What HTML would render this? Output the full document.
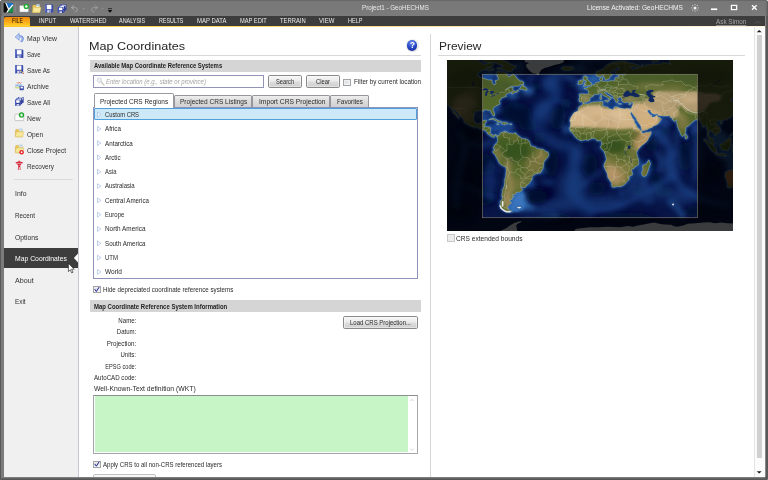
<!DOCTYPE html>
<html><head><meta charset="utf-8"><title>GeoHECHMS - Map Coordinates</title><style>
html,body{margin:0;padding:0;}
body{width:768px;height:480px;overflow:hidden;background:#ffffff;font-family:'Liberation Sans', sans-serif;position:relative;}
#w div{position:absolute;}
.t{position:absolute;white-space:pre;line-height:10px;height:10px;transform-origin:0 50%;}
</style></head>
<body>
<div id="w">
<div style="left:0.00px;top:0.00px;width:768.00px;height:480.00px;background:#585858;border-radius:3px 3px 2px 2px;"></div>
<div style="left:1.00px;top:10.00px;width:2.70px;height:468.10px;background:#7b7b7b;"></div>
<div style="left:764.30px;top:10.00px;width:1.30px;height:468.10px;background:#868686;"></div>
<div style="left:1.00px;top:0.00px;width:766.00px;height:15.80px;background:linear-gradient(#5e5e5e 0,#777777 1.2px,#7b7b7b 100%);border-radius:3px 3px 0 0;"></div>
<div style="left:0.00px;top:0.00px;width:768.00px;height:15.80px;background:linear-gradient(90deg,#565656 0,#6e6e6e 1.5px,rgba(122,122,122,0) 3.2px,rgba(122,122,122,0) 764.8px,#6e6e6e 766.5px,#565656 768px);border-radius:3px 3px 0 0;"></div>
<div style="left:3.50px;top:15.70px;width:761.10px;height:10.50px;background:#3d3d3d;"></div>
<div style="left:3.50px;top:25.80px;width:761.10px;height:1.40px;background:linear-gradient(90deg,#ffc62a 0,#ffd24a 120px,#fbe29a 420px,#fdf3d6 700px);"></div>
<div style="left:3.80px;top:16.50px;width:26.50px;height:9.90px;background:linear-gradient(#f08a08 0%,#f7a51a 45%,#ffc41f 85%,#ffd23a 100%);border-radius:1.6px 1.6px 0 0;"></div>
<div style="left:3.50px;top:27.20px;width:761.10px;height:449.80px;background:#ffffff;"></div>
<div style="left:3.50px;top:27.20px;width:74.50px;height:449.80px;background:#f0f0f0;"></div>
<div style="left:3.50px;top:248.00px;width:74.50px;height:19.80px;background:#3d3d3d;"></div>
<div style="left:77.60px;top:27.20px;width:1.00px;height:449.80px;background:#c6c6d6;"></div>
<div style="left:14.00px;top:179.30px;width:58.50px;height:0.70px;background:#dadada;"></div>
<div style="left:88.00px;top:55.10px;width:333.20px;height:0.80px;background:#d8d8d8;"></div>
<div style="left:438.00px;top:55.10px;width:306.50px;height:0.80px;background:#d8d8d8;"></div>
<div style="left:430.30px;top:34.00px;width:0.70px;height:443.00px;background:#d6d6d6;"></div>
<div style="left:90.00px;top:59.80px;width:331.20px;height:12.10px;background:#d5d5d5;"></div>
<div style="left:90.00px;top:300.10px;width:331.20px;height:12.20px;background:#d5d5d5;"></div>
<div style="left:92.90px;top:75.00px;width:171.60px;height:12.80px;border:0.7px solid #9394b8;background:#fff;box-sizing:border-box;"></div>
<div style="left:268.25px;top:75.40px;width:33.75px;height:12.20px;border:0.6px solid #8a8a8a;border-radius:1.8px;background:linear-gradient(#f6f6f6 0%,#ebebeb 45%,#dcdcdc 55%,#cecece 100%);box-shadow:inset 0 0 0 0.6px rgba(255,255,255,.8);box-sizing:border-box;"></div>
<div style="left:306.00px;top:75.40px;width:33.50px;height:12.20px;border:0.6px solid #8a8a8a;border-radius:1.8px;background:linear-gradient(#f6f6f6 0%,#ebebeb 45%,#dcdcdc 55%,#cecece 100%);box-shadow:inset 0 0 0 0.6px rgba(255,255,255,.8);box-sizing:border-box;"></div>
<div style="left:343.25px;top:316.00px;width:74.65px;height:12.80px;border:0.6px solid #8a8a8a;border-radius:1.8px;background:linear-gradient(#f6f6f6 0%,#ebebeb 45%,#dcdcdc 55%,#cecece 100%);box-shadow:inset 0 0 0 0.6px rgba(255,255,255,.8);box-sizing:border-box;"></div>
<div style="left:343.25px;top:78.50px;width:7.50px;height:7.20px;border:0.6px solid #a2a4a8;background:linear-gradient(135deg,#d6d8dc,#f6f6f6);box-shadow:inset 0 0 0 0.7px #f4f4f4;box-sizing:border-box;"></div>
<div style="left:93.25px;top:285.90px;width:7.40px;height:7.20px;border:0.6px solid #a2a4a8;background:linear-gradient(135deg,#d6d8dc,#f6f6f6);box-shadow:inset 0 0 0 0.7px #f4f4f4;box-sizing:border-box;"></div>
<div style="left:93.25px;top:460.60px;width:7.40px;height:7.20px;border:0.6px solid #a2a4a8;background:linear-gradient(135deg,#d6d8dc,#f6f6f6);box-shadow:inset 0 0 0 0.7px #f4f4f4;box-sizing:border-box;"></div>
<div style="left:447.25px;top:233.90px;width:7.75px;height:7.70px;border:0.6px solid #c9c9c9;background:#ececec;box-sizing:border-box;"></div>
<div style="left:174.20px;top:95.00px;width:78.20px;height:12.70px;border:0.6px solid #94969c;border-bottom:none;border-radius:1.6px 1.6px 0 0;background:linear-gradient(#eeeeee,#dadada 50%,#cfcfcf);box-sizing:border-box;"></div>
<div style="left:252.20px;top:95.00px;width:78.30px;height:12.70px;border:0.6px solid #94969c;border-bottom:none;border-radius:1.6px 1.6px 0 0;background:linear-gradient(#eeeeee,#dadada 50%,#cfcfcf);box-sizing:border-box;"></div>
<div style="left:330.30px;top:95.00px;width:38.80px;height:12.70px;border:0.6px solid #94969c;border-bottom:none;border-radius:1.6px 1.6px 0 0;background:linear-gradient(#eeeeee,#dadada 50%,#cfcfcf);box-sizing:border-box;"></div>
<div style="left:93.30px;top:107.40px;width:324.30px;height:171.80px;border:0.7px solid #8f91b6;background:#fff;box-sizing:border-box;"></div>
<div style="left:94.10px;top:93.10px;width:80.20px;height:15.10px;border:0.6px solid #989aa0;border-bottom:none;border-radius:1.8px 1.8px 0 0;background:#fff;box-sizing:border-box;"></div>
<div style="left:94.00px;top:107.90px;width:322.90px;height:12.50px;border:0.7px solid #4fa0dc;border-radius:1px;background:#cde8f7;box-sizing:border-box;"></div>
<div style="left:93.25px;top:394.70px;width:324.35px;height:59.20px;border:0.7px solid #a6a7aa;border-top-color:#8c8d90;background:#fff;box-sizing:border-box;"></div>
<div style="left:94.90px;top:396.30px;width:312.70px;height:56.10px;background:#c7f5c6;"></div>
<div style="left:93.25px;top:473.70px;width:62.55px;height:8.30px;border:0.6px solid #c2c2c2;border-radius:2px;background:#f7f7f7;box-sizing:border-box;"></div>
<div style="left:406.00px;top:39.35px;width:12.50px;height:12.50px;border-radius:50%;background:radial-gradient(circle at 50% 40%,#ffffff 0,#e6e6e6 70%,#b9b9b9 100%);"></div>
<div style="left:407.05px;top:40.40px;width:10.40px;height:10.40px;border-radius:50%;background:radial-gradient(circle at 45% 25%,#6d8cf0 0,#2f4fc8 45%,#0d1f96 100%);"></div>
<div style="left:754.30px;top:27.20px;width:10.30px;height:449.80px;background:#fbfbfb;border-left:0.6px solid #e6e6e6;box-sizing:border-box;"></div>
<div style="left:757.25px;top:34.50px;width:4.50px;height:423.50px;background:#d0d0d0;"></div>
<div style="left:0.00px;top:477.00px;width:768.00px;height:3.00px;background:linear-gradient(#8a8a8a 0,#6a6a6a 1.2px,#575757 2px,#575757 100%);border-radius:0 0 2px 2px;"></div>
<div style="left:0.00px;top:477.00px;width:1.00px;height:3.00px;background:#585858;border-radius:0 0 0 2px;"></div>
<div style="left:765.40px;top:477.00px;width:2.60px;height:3.00px;background:#585858;border-radius:0 0 2px 0;"></div>
</div>
<svg style="position:absolute;left:446.6px;top:59.75px" width="286.3" height="171.5" viewBox="0 0 286.3 171.5"><defs><filter id="b1" x="-20%" y="-20%" width="140%" height="140%"><feGaussianBlur stdDeviation="1.1"/></filter><filter id="b2" x="-30%" y="-30%" width="160%" height="160%"><feGaussianBlur stdDeviation="2.4"/></filter><filter id="b3" x="-40%" y="-40%" width="180%" height="180%"><feGaussianBlur stdDeviation="4"/></filter><filter id="b0" x="-10%" y="-10%" width="120%" height="120%"><feGaussianBlur stdDeviation="0.45"/></filter><clipPath id="landclip"><path d="M180.0 2.1 L176.4 1.2 L173.7 1.2 L170.5 1.8 L166.9 2.5 L163.9 3.5 L160.9 4.6 L158.5 6.7 L156.7 8.5 L155.0 9.9 L152.6 10.6 L149.6 11.8 L149.0 13.2 L149.2 15.0 L149.8 16.0 L151.4 16.8 L153.2 16.6 L154.7 15.6 L155.7 14.9 L156.4 15.6 L156.5 16.4 L157.2 17.3 L158.1 18.7 L158.4 19.8 L160.0 19.9 L160.4 19.1 L162.1 18.9 L162.8 17.4 L163.1 16.2 L164.5 15.4 L165.6 14.4 L163.7 13.6 L163.5 12.0 L165.1 10.8 L167.5 9.9 L168.7 8.7 L169.5 7.6 L171.7 7.5 L173.2 8.5 L172.3 9.3 L169.9 10.6 L168.4 11.7 L168.6 13.2 L169.5 14.1 L170.5 14.5 L172.9 14.2 L175.8 13.8 L177.6 14.3 L179.1 14.5 L176.7 14.9 L174.0 14.9 L172.3 15.1 L171.1 15.5 L171.2 16.2 L172.1 16.4 L172.0 17.6 L171.2 18.0 L170.0 17.1 L168.8 17.4 L168.1 18.2 L168.1 19.8 L166.9 20.5 L166.4 21.1 L165.2 21.0 L164.9 20.6 L162.7 21.0 L160.1 21.7 L159.1 21.1 L157.7 21.2 L156.2 21.6 L155.9 21.2 L155.0 21.0 L154.8 20.1 L155.6 19.8 L155.2 18.9 L156.0 18.7 L155.3 18.1 L155.7 17.1 L154.4 17.7 L152.9 18.0 L152.7 19.2 L152.8 19.9 L153.4 20.6 L153.6 21.6 L153.2 22.0 L151.4 22.0 L150.2 22.3 L148.8 22.7 L148.2 23.8 L147.2 24.7 L146.0 25.0 L144.9 25.2 L144.8 26.1 L143.3 26.8 L141.6 27.0 L141.5 26.7 L140.8 26.7 L141.1 27.9 L139.7 28.0 L137.5 28.0 L137.4 28.7 L139.5 29.2 L140.4 29.7 L141.6 31.0 L141.7 31.7 L141.5 32.9 L141.0 34.2 L138.5 34.1 L136.1 33.9 L133.5 33.8 L132.1 34.5 L132.5 35.6 L132.7 37.0 L132.4 38.2 L131.8 39.7 L132.5 40.1 L132.5 40.7 L132.3 41.8 L133.6 41.8 L134.4 41.6 L135.4 42.2 L136.4 43.0 L137.8 42.2 L140.4 42.0 L141.1 41.3 L142.2 41.1 L142.9 39.8 L142.7 38.8 L143.9 37.3 L144.2 36.9 L145.7 36.6 L146.8 35.5 L146.7 34.5 L147.8 34.1 L149.5 34.3 L150.9 34.4 L152.0 33.7 L153.6 33.0 L155.1 33.5 L155.6 34.7 L156.4 35.4 L157.6 36.1 L159.3 36.7 L160.1 37.3 L160.9 38.0 L161.8 38.2 L162.2 39.4 L161.8 40.6 L162.7 40.1 L163.4 39.4 L162.7 38.6 L163.3 37.6 L164.6 38.3 L165.1 38.0 L164.3 37.4 L162.8 36.8 L162.0 36.0 L160.7 35.7 L159.3 34.1 L157.8 33.2 L157.7 31.9 L159.1 31.4 L159.3 32.3 L160.1 31.9 L161.0 33.1 L162.6 34.1 L164.0 34.8 L165.1 35.4 L166.2 36.1 L166.2 37.8 L166.9 38.6 L168.2 40.1 L168.4 41.0 L168.9 42.0 L169.8 42.4 L170.6 42.4 L170.3 41.3 L171.5 41.0 L171.8 40.6 L170.7 39.8 L170.2 38.8 L170.2 37.8 L171.3 38.2 L172.0 37.4 L173.5 37.2 L174.2 37.5 L174.4 38.1 L174.9 37.8 L174.3 38.8 L175.0 39.8 L174.4 40.4 L175.5 41.0 L175.6 41.8 L176.7 42.2 L177.9 42.6 L179.3 42.6 L179.7 41.9 L181.2 42.4 L182.2 43.0 L183.4 42.8 L184.4 42.0 L185.5 42.3 L186.2 42.2 L185.9 43.1 L185.9 44.5 L185.4 45.5 L184.9 46.4 L184.7 47.4 L184.2 48.4 L183.8 48.6 L182.6 48.8 L181.6 48.7 L181.8 50.1 L182.0 50.7 L182.6 51.9 L183.8 52.8 L184.3 51.9 L184.7 50.7 L184.8 52.4 L185.5 53.4 L186.6 54.9 L187.4 56.3 L188.5 57.3 L189.6 59.1 L189.8 60.4 L191.0 61.8 L191.9 63.2 L193.1 65.0 L194.0 66.5 L194.2 68.1 L194.7 70.0 L194.9 70.7 L196.7 70.6 L198.7 69.9 L201.1 69.2 L201.6 68.6 L203.3 67.9 L205.3 67.2 L205.4 66.5 L207.4 65.6 L209.0 64.9 L210.2 64.4 L211.0 63.4 L212.0 63.2 L211.9 61.8 L212.9 61.6 L214.4 59.2 L213.1 57.8 L211.3 57.4 L210.4 56.6 L210.2 54.7 L210.0 54.9 L209.7 55.4 L208.9 55.9 L207.9 56.8 L206.3 57.2 L204.8 57.3 L204.6 56.6 L204.6 55.0 L204.1 54.8 L203.6 55.6 L203.5 56.2 L202.9 55.6 L202.8 54.3 L202.1 53.5 L201.2 52.8 L200.8 51.7 L200.2 50.9 L200.4 50.3 L201.1 50.0 L202.3 49.9 L202.9 50.1 L203.6 51.3 L204.3 52.6 L205.7 53.4 L206.9 54.1 L208.2 54.3 L209.4 53.8 L210.3 53.6 L211.1 54.2 L211.5 55.3 L213.2 55.5 L215.2 55.7 L216.5 56.0 L218.7 55.9 L220.2 55.9 L222.2 55.5 L223.2 56.5 L223.6 57.5 L224.5 57.8 L225.6 58.7 L226.9 58.5 L225.3 59.2 L227.0 61.1 L227.8 61.1 L229.0 60.6 L229.6 59.4 L229.9 60.5 L229.8 61.7 L229.9 63.2 L230.4 65.3 L230.8 67.1 L231.7 68.8 L232.4 70.7 L233.3 72.4 L233.9 74.1 L234.5 75.4 L235.5 76.2 L236.3 75.4 L237.4 74.8 L238.2 73.6 L238.2 71.8 L238.8 70.1 L238.6 68.6 L238.6 67.6 L239.4 67.1 L240.3 66.5 L241.2 66.0 L242.5 64.8 L244.2 63.2 L245.1 62.3 L246.6 61.5 L246.8 60.3 L248.0 60.0 L249.4 59.8 L251.0 59.1 L252.5 59.3 L253.0 60.9 L253.7 61.9 L254.7 62.9 L255.6 64.2 L255.8 65.9 L255.5 66.8 L256.8 67.1 L257.9 66.3 L258.7 65.6 L259.5 66.3 L259.7 68.0 L260.1 69.6 L260.7 71.2 L260.8 73.0 L260.3 74.9 L260.3 76.3 L261.1 77.2 L262.3 78.2 L262.8 79.6 L263.2 81.0 L263.9 82.4 L264.9 83.2 L266.4 84.2 L267.2 84.2 L267.3 83.0 L266.4 81.9 L266.4 80.7 L265.9 79.3 L264.9 78.5 L263.8 77.7 L262.9 77.2 L262.4 75.7 L261.5 74.8 L261.5 73.4 L262.2 71.8 L262.3 70.0 L263.4 69.9 L263.5 70.7 L265.1 71.3 L265.8 72.2 L266.6 73.2 L268.0 73.5 L268.0 75.5 L268.6 75.4 L270.1 74.4 L270.7 73.5 L272.1 72.8 L273.3 71.8 L273.4 70.4 L273.1 68.6 L272.6 67.3 L272.1 66.6 L271.0 65.7 L270.1 64.7 L269.2 63.4 L269.4 62.3 L270.3 61.2 L271.6 60.4 L272.6 60.0 L273.8 60.3 L274.1 61.6 L274.7 61.6 L274.7 60.5 L276.0 60.1 L277.6 59.8 L278.5 59.3 L279.5 59.2 L280.8 58.7 L282.1 58.1 L283.6 57.3 L284.6 56.3 L285.6 55.4 L285.9 54.3 L286.8 53.4 L288.0 51.9 L288.6 49.2 L288.4 48.2 L287.3 46.8 L286.5 45.4 L285.2 44.4 L285.6 43.6 L286.5 42.9 L288.6 42.0 L288.6 41.1 L287.1 40.9 L285.6 41.6 L284.9 41.1 L283.8 40.3 L283.4 39.4 L284.5 39.2 L285.5 38.5 L286.8 37.6 L288.6 37.3 L288.6 -2.3 L223.0 -2.3 L222.6 1.3 L222.4 3.1 L224.7 4.4 L221.8 3.9 L220.0 3.3 L215.8 2.9 L214.6 4.0 L211.0 4.2 L208.0 4.5 L206.9 3.8 L202.7 4.8 L198.5 5.1 L198.5 6.2 L195.9 6.7 L195.3 5.8 L195.8 4.4 L194.7 4.2 L195.3 6.9 L193.1 6.8 L191.3 7.5 L190.7 8.8 L188.4 8.7 L187.2 9.8 L184.8 9.3 L184.2 7.9 L182.4 6.6 L181.8 6.0 L184.2 6.6 L189.0 7.1 L191.3 6.8 L192.2 6.1 L191.3 5.1 L188.4 4.4 L184.8 3.5 L182.4 3.1 L180.0 2.7 Z M136.0 43.2 L136.7 43.1 L137.7 43.9 L139.5 43.8 L140.6 44.1 L142.3 43.4 L144.2 42.5 L146.6 42.0 L149.0 42.0 L152.0 41.8 L154.7 41.4 L156.2 41.8 L155.6 42.5 L155.7 43.5 L156.2 44.2 L155.1 45.0 L155.9 45.6 L156.7 46.3 L158.8 46.7 L161.2 47.3 L161.5 48.4 L163.9 49.1 L165.7 49.8 L166.9 48.9 L166.9 47.5 L168.7 46.7 L170.5 47.0 L172.9 48.2 L175.2 48.6 L177.6 49.1 L178.8 48.6 L180.0 48.4 L181.6 48.7 L181.8 50.1 L181.9 50.6 L183.0 52.5 L183.6 54.3 L184.8 56.7 L185.6 58.5 L187.0 59.7 L187.4 60.9 L187.4 62.5 L189.0 64.4 L190.2 67.3 L191.9 68.6 L193.7 70.4 L194.7 71.0 L194.7 72.1 L195.5 73.4 L196.7 73.4 L199.1 72.5 L201.5 72.4 L204.1 71.7 L204.0 73.4 L203.6 74.6 L202.7 76.3 L201.5 78.1 L200.3 80.5 L198.5 82.5 L197.1 83.5 L195.5 84.7 L193.7 86.3 L192.5 87.9 L191.1 89.0 L190.7 90.0 L190.4 90.8 L189.8 91.8 L189.3 93.4 L189.9 94.0 L190.2 95.4 L190.3 97.2 L191.2 98.4 L191.5 100.2 L191.5 102.5 L191.7 103.7 L190.7 105.2 L189.6 106.1 L187.2 107.2 L187.0 108.3 L185.4 109.1 L184.5 109.5 L184.4 110.6 L185.1 112.1 L185.4 114.2 L185.3 114.9 L183.0 115.9 L181.9 116.7 L182.3 117.8 L181.9 119.8 L181.0 120.4 L180.0 121.5 L179.1 122.8 L177.6 124.3 L176.4 125.2 L174.6 126.1 L173.6 126.4 L171.1 126.5 L169.3 126.6 L166.9 127.3 L165.5 126.7 L165.0 126.7 L164.9 125.2 L164.5 124.6 L164.9 123.4 L163.7 121.6 L162.7 119.9 L161.6 118.6 L160.9 117.2 L160.7 115.6 L160.3 113.3 L159.1 110.9 L157.9 108.5 L157.1 106.5 L157.1 104.9 L157.7 103.1 L159.0 100.8 L159.5 99.0 L158.8 96.6 L158.3 94.2 L157.7 93.0 L157.3 91.8 L156.4 90.6 L155.0 89.2 L154.1 88.0 L153.5 86.7 L154.4 85.5 L154.5 84.4 L154.7 83.1 L154.6 81.8 L154.4 81.1 L153.2 80.4 L151.4 80.6 L150.2 80.7 L149.0 79.1 L148.2 78.4 L147.1 78.2 L145.4 78.4 L144.5 78.6 L143.0 79.2 L141.0 80.2 L139.5 79.8 L138.3 79.6 L135.9 80.2 L134.1 80.6 L132.3 79.9 L130.1 78.4 L128.7 77.2 L127.3 75.7 L126.7 74.6 L125.5 73.0 L125.0 72.5 L123.9 71.6 L123.1 71.1 L123.0 69.8 L122.8 68.8 L122.2 68.4 L123.3 66.8 L123.6 64.4 L123.7 62.6 L122.8 60.9 L123.3 59.1 L123.9 57.6 L125.4 55.5 L125.7 54.7 L127.0 53.1 L127.6 52.6 L129.9 51.6 L131.1 50.7 L131.5 49.5 L131.3 48.4 L132.1 47.0 L132.9 46.2 L134.0 45.9 L134.9 45.3 L135.5 44.2 Z M201.8 100.2 L202.9 102.5 L203.3 104.3 L202.4 105.5 L202.0 107.3 L200.9 110.9 L199.8 113.9 L199.1 115.6 L197.0 116.4 L195.5 115.6 L194.9 113.9 L194.7 112.1 L195.9 110.3 L195.9 108.5 L195.5 106.7 L196.1 105.2 L198.3 104.7 L200.1 103.5 L200.6 101.9 Z M50.8 75.6 L51.4 76.3 L52.4 74.8 L53.0 73.4 L53.8 72.6 L55.9 72.3 L57.1 71.3 L58.0 71.1 L58.0 72.2 L57.4 72.8 L57.7 73.0 L59.3 72.2 L59.5 71.3 L60.0 72.2 L61.6 72.8 L61.9 73.4 L64.3 73.2 L65.5 73.8 L66.7 73.2 L69.1 73.1 L68.1 73.5 L69.2 74.1 L70.3 74.8 L70.9 75.7 L71.7 76.1 L73.2 77.3 L74.8 78.7 L76.8 78.8 L78.6 79.0 L80.4 79.8 L81.4 80.6 L82.2 81.3 L82.8 83.5 L83.4 84.7 L83.4 85.9 L85.2 86.2 L85.8 86.7 L87.0 86.7 L88.8 87.5 L90.2 88.8 L91.7 88.7 L93.5 89.3 L95.3 89.2 L97.1 90.3 L98.5 91.5 L100.1 91.9 L101.0 92.4 L101.5 94.3 L101.4 95.5 L100.7 97.2 L99.5 98.4 L98.5 99.6 L97.1 101.4 L96.5 103.5 L96.5 105.5 L96.1 107.3 L95.6 109.2 L95.0 110.0 L94.1 111.8 L93.0 113.1 L91.5 113.3 L89.7 113.6 L87.8 114.5 L86.0 115.6 L85.1 116.7 L85.1 118.0 L84.9 119.8 L83.7 120.8 L83.0 122.2 L82.0 123.4 L80.9 124.2 L79.3 126.0 L78.6 127.0 L77.4 127.4 L76.0 127.4 L74.1 126.8 L73.4 126.5 L73.4 127.1 L74.8 128.1 L74.7 129.1 L75.4 129.8 L74.3 131.1 L72.6 132.0 L70.3 132.3 L69.0 132.2 L68.8 134.1 L66.9 134.8 L65.5 134.5 L65.4 135.9 L67.2 136.7 L65.5 137.3 L65.1 139.2 L63.3 139.8 L62.5 140.7 L63.7 141.8 L64.5 142.9 L62.5 144.6 L61.3 145.7 L60.6 147.2 L61.4 148.2 L61.2 148.6 L62.2 149.9 L63.7 150.8 L65.3 151.0 L63.7 151.5 L61.3 151.8 L59.5 151.7 L57.7 150.8 L55.9 149.6 L54.2 148.4 L53.2 146.0 L53.0 143.6 L54.2 142.4 L53.0 141.5 L54.8 140.1 L55.4 138.3 L55.9 136.5 L54.8 136.5 L55.0 135.3 L55.2 133.5 L55.6 131.7 L55.2 130.2 L55.9 129.3 L56.5 127.9 L57.5 125.8 L57.6 123.4 L57.9 121.6 L57.7 119.8 L58.6 117.4 L58.9 115.0 L59.0 113.9 L59.3 111.5 L59.3 109.7 L59.2 107.8 L57.9 106.7 L56.2 105.8 L54.2 104.7 L52.6 103.4 L52.0 102.4 L51.1 100.3 L50.0 98.3 L49.1 96.6 L48.2 94.9 L47.6 93.7 L46.2 93.0 L46.0 91.5 L47.0 90.2 L47.6 89.7 L47.8 88.8 L46.5 88.6 L46.6 87.1 L47.5 85.9 L47.6 84.9 L48.9 84.3 L49.0 83.7 L49.6 82.9 L50.6 82.7 L50.9 81.3 L50.6 80.2 L50.8 79.1 L50.6 77.9 L50.1 77.3 L49.7 76.0 L48.2 75.2 L47.6 76.0 L47.1 77.2 L45.6 76.9 L44.1 76.2 L43.2 75.6 L41.8 74.2 L40.8 74.0 L40.7 72.6 L38.7 71.0 L38.4 70.3 L35.7 69.7 L32.9 68.6 L30.3 66.6 L27.9 67.2 L23.9 65.9 L21.1 64.4 L18.6 63.1 L16.9 61.6 L17.2 60.3 L16.1 58.2 L14.8 57.3 L12.5 55.4 L11.2 53.1 L8.8 50.7 L6.1 48.0 L6.2 50.1 L8.2 52.5 L10.0 54.9 L11.5 57.0 L11.9 58.6 L11.2 57.9 L9.4 56.3 L9.1 54.9 L7.0 53.5 L5.8 52.5 L6.4 51.3 L4.9 49.7 L3.8 48.0 L3.3 47.2 L2.0 45.4 L-0.1 44.8 L-2.5 44.2 L-2.5 -2.3 L29.7 -2.3 L29.7 0.4 L33.3 1.9 L35.7 3.9 L38.7 4.6 L41.0 3.0 L44.6 3.0 L45.8 4.3 L45.8 6.1 L43.4 7.0 L40.4 6.9 L39.2 8.1 L38.1 9.6 L34.8 10.2 L33.3 11.2 L31.5 12.6 L29.9 14.4 L30.3 15.8 L32.1 16.2 L32.7 17.9 L35.7 18.0 L38.7 19.2 L41.6 20.0 L44.9 20.1 L44.9 21.6 L45.2 23.3 L46.8 24.8 L48.2 24.7 L49.0 23.7 L48.8 22.2 L48.2 20.7 L50.0 20.4 L51.7 18.8 L51.2 17.4 L50.0 16.0 L50.6 14.4 L49.6 13.2 L50.2 11.4 L53.0 11.7 L55.9 11.8 L57.7 12.9 L60.1 13.5 L59.8 15.2 L61.3 16.6 L63.1 16.2 L64.9 15.0 L66.0 14.1 L67.3 15.2 L69.1 16.8 L69.7 18.3 L72.1 20.0 L73.2 21.2 L74.7 21.0 L76.5 22.2 L76.6 23.3 L75.3 24.5 L73.2 24.8 L71.5 26.0 L67.9 26.0 L63.8 26.1 L63.1 26.9 L60.1 28.5 L58.1 30.1 L59.5 29.5 L61.9 28.0 L64.3 27.3 L66.4 27.7 L65.5 28.7 L65.7 29.7 L66.1 30.7 L67.9 31.3 L69.7 31.1 L70.9 29.9 L71.5 31.1 L70.3 31.9 L67.3 32.8 L65.5 33.9 L64.2 33.7 L66.1 31.4 L64.3 32.0 L63.1 32.5 L60.7 33.5 L58.9 34.2 L58.7 35.3 L59.5 36.2 L58.3 36.4 L57.1 37.0 L54.8 37.6 L53.3 40.0 L52.0 40.6 L52.4 41.9 L53.0 43.8 L51.8 44.5 L50.1 45.4 L48.9 45.7 L47.8 46.8 L46.5 47.8 L45.9 48.9 L46.0 50.1 L46.9 52.0 L47.5 53.7 L47.5 54.9 L47.1 55.9 L46.4 56.0 L46.0 55.3 L45.2 54.3 L44.3 52.8 L44.0 51.2 L42.8 50.0 L41.3 50.5 L39.8 49.7 L38.1 49.8 L36.1 49.9 L36.4 51.2 L35.1 51.1 L33.3 50.6 L31.1 50.5 L29.7 51.1 L27.9 52.0 L26.8 53.1 L27.1 55.0 L26.5 57.3 L26.4 59.3 L27.1 61.1 L28.3 62.9 L28.7 63.5 L30.3 64.2 L32.3 63.8 L33.9 63.8 L34.8 62.3 L35.2 60.9 L36.9 60.5 L38.7 60.3 L39.5 60.6 L38.7 62.6 L37.9 63.8 L37.7 65.6 L37.0 66.9 L37.3 67.1 L38.4 66.9 L40.4 66.9 L42.2 67.1 L43.8 68.0 L43.5 68.8 L43.1 71.0 L43.3 72.9 L44.0 74.0 L45.0 74.9 L46.2 75.4 L48.1 74.4 Z M72.3 29.2 L73.2 28.1 L73.8 26.9 L75.0 25.4 L76.7 24.5 L76.5 25.7 L75.6 26.6 L76.8 26.6 L78.6 27.0 L79.2 28.0 L80.2 29.2 L79.6 30.4 L78.6 29.9 L77.4 30.0 L76.2 29.3 L74.4 29.2 Z M41.8 59.8 L44.0 58.6 L46.4 58.4 L48.8 59.2 L51.2 60.6 L53.0 61.2 L54.5 61.8 L53.0 62.2 L50.5 62.2 L50.8 61.3 L49.4 60.9 L47.0 59.8 L45.2 59.3 L43.4 59.5 Z M54.3 63.8 L55.6 62.2 L57.5 62.3 L59.6 62.5 L61.4 63.7 L60.0 64.1 L58.3 64.3 L57.5 64.8 L56.2 64.2 Z M49.6 64.0 L51.2 63.8 L52.1 64.4 L50.9 64.7 Z M62.9 63.8 L64.8 64.0 L64.7 64.4 L62.9 64.4 Z M136.2 26.2 L138.9 26.0 L141.2 25.5 L144.7 24.9 L143.9 24.5 L145.1 23.2 L143.4 22.7 L143.2 22.0 L141.6 20.8 L141.1 19.8 L140.5 19.2 L139.5 19.2 L140.5 17.9 L140.9 17.3 L138.9 17.1 L138.3 17.3 L139.3 16.1 L137.1 16.1 L136.1 17.4 L136.4 18.6 L136.5 19.8 L137.3 19.7 L137.1 20.6 L138.9 20.5 L139.3 21.7 L139.5 22.3 L137.7 22.4 L138.0 23.0 L138.1 23.6 L136.8 24.1 L138.0 24.4 L139.5 24.7 L139.2 24.9 L137.9 25.0 Z M131.1 24.4 L133.1 24.3 L135.5 23.7 L135.8 22.4 L136.4 20.8 L135.6 20.1 L134.1 20.0 L132.9 20.8 L131.1 21.3 L132.1 22.5 L130.7 23.7 Z M114.4 7.9 L116.8 6.8 L121.6 7.0 L125.1 7.0 L126.8 8.5 L125.1 9.3 L121.0 10.4 L116.2 9.8 L116.8 9.1 L114.4 8.7 Z M157.8 40.6 L158.9 40.4 L161.6 40.3 L161.0 42.2 L157.9 41.1 Z M152.8 37.0 L154.5 37.0 L154.6 39.2 L153.1 39.4 Z M153.3 35.1 L154.4 34.7 L154.2 36.4 L153.4 36.1 Z M171.1 43.5 L174.4 43.8 L174.3 44.2 L171.2 43.9 Z M181.6 44.2 L182.4 43.7 L184.3 43.4 L183.5 44.2 L182.4 44.7 Z M238.2 74.3 L238.7 74.2 L240.0 75.7 L240.6 77.5 L239.7 78.6 L238.6 78.7 L238.2 76.9 Z M272.7 63.0 L274.8 62.0 L274.8 63.5 L273.7 64.2 Z M256.7 79.2 L259.3 79.7 L260.8 81.3 L262.7 82.9 L264.1 83.5 L266.3 85.3 L266.9 87.1 L267.7 88.1 L269.5 89.4 L269.2 92.8 L267.7 92.7 L265.1 90.6 L263.5 88.8 L262.7 86.8 L261.1 85.3 L260.8 83.8 L259.0 82.1 L257.6 80.7 Z M268.5 94.0 L269.6 92.9 L272.5 93.6 L275.2 93.5 L277.5 94.1 L279.6 95.0 L279.5 96.1 L275.4 95.8 L272.5 95.2 L270.0 94.7 Z M273.1 84.1 L274.6 83.8 L275.8 82.9 L277.8 82.1 L279.0 80.4 L280.8 79.3 L282.4 77.5 L283.8 78.7 L285.0 79.7 L283.8 80.7 L283.4 82.3 L283.8 83.5 L285.0 84.7 L283.2 85.3 L283.2 87.1 L282.0 88.3 L281.6 90.0 L279.7 90.6 L277.8 89.7 L276.4 89.9 L274.5 89.3 L274.3 87.7 L273.3 86.5 L273.1 85.3 Z M285.6 92.4 L285.7 90.0 L284.9 89.1 L285.3 87.7 L285.9 85.9 L286.2 85.0 L288.6 85.0 L288.6 92.4 Z M282.8 75.9 L285.6 73.4 L285.8 73.7 L283.2 76.1 Z M288.6 107.3 L286.2 109.6 L284.5 110.0 L282.6 110.5 L281.4 110.8 L279.7 111.8 L278.5 112.8 L278.4 115.0 L278.1 116.8 L279.3 118.6 L279.7 120.2 L280.3 122.2 L281.1 124.0 L280.2 125.9 L280.3 126.7 L282.0 127.6 L283.8 127.6 L286.2 126.2 L288.6 126.2 Z M70.0 147.6 L72.1 147.0 L74.1 147.3 L72.9 148.2 L70.9 148.0 Z M47.6 -2.3 L51.2 -0.6 L54.8 0.6 L59.5 1.8 L61.9 3.0 L63.7 4.6 L69.1 6.3 L67.3 8.5 L64.9 8.9 L65.5 10.6 L63.7 11.4 L61.9 11.7 L59.5 11.1 L57.1 10.1 L54.2 9.1 L50.6 9.2 L50.0 7.9 L54.8 7.9 L55.4 6.7 L56.2 5.1 L52.4 4.5 L49.4 2.7 L45.2 2.5 L41.6 2.3 L36.9 1.9 L35.7 0.1 L35.7 -2.3 Z M39.2 9.6 L41.6 7.5 L44.0 8.2 L47.0 9.6 L45.2 10.2 L41.6 10.6 Z M204.5 0.4 L206.3 1.5 L209.8 1.8 L211.6 0.7 L209.8 -1.1 L212.2 -2.3 L205.1 -2.3 Z"/></clipPath><clipPath id="mapclip"><rect width="286.3" height="171.5"/></clipPath></defs><g clip-path="url(#mapclip)"><rect width="286.3" height="171.5" fill="#081547"/><g filter="url(#b3)"><ellipse cx="69.1" cy="52.5" rx="15.5" ry="10.7" fill="#03072f" opacity="0.95"/><ellipse cx="81.0" cy="64.4" rx="9.5" ry="7.1" fill="#03072f" opacity="0.95"/><ellipse cx="110.8" cy="58.5" rx="8.4" ry="11.9" fill="#03072f" opacity="0.95"/><ellipse cx="119.2" cy="43.0" rx="6.0" ry="6.0" fill="#03072f" opacity="0.95"/><ellipse cx="103.7" cy="102.5" rx="8.4" ry="15.5" fill="#03072f" opacity="0.95"/><ellipse cx="92.9" cy="77.5" rx="7.2" ry="6.0" fill="#03072f" opacity="0.95"/><ellipse cx="90.5" cy="135.9" rx="13.1" ry="8.3" fill="#03072f" opacity="0.95"/><ellipse cx="143.0" cy="104.9" rx="8.4" ry="13.1" fill="#03072f" opacity="0.95"/><ellipse cx="150.2" cy="128.7" rx="9.5" ry="7.1" fill="#03072f" opacity="0.95"/><ellipse cx="133.5" cy="84.7" rx="6.0" ry="4.8" fill="#03072f" opacity="0.95"/><ellipse cx="205.1" cy="84.7" rx="6.0" ry="8.3" fill="#03072f" opacity="0.95"/><ellipse cx="205.1" cy="104.9" rx="4.8" ry="7.1" fill="#03072f" opacity="0.95"/><ellipse cx="209.8" cy="120.4" rx="7.2" ry="7.1" fill="#03072f" opacity="0.95"/><ellipse cx="238.5" cy="96.6" rx="8.4" ry="15.5" fill="#03072f" opacity="0.95"/><ellipse cx="217.0" cy="132.3" rx="10.7" ry="6.0" fill="#03072f" opacity="0.95"/><ellipse cx="218.2" cy="70.4" rx="6.0" ry="6.0" fill="#03072f" opacity="0.95"/><ellipse cx="190.7" cy="129.9" rx="6.0" ry="7.1" fill="#03072f" opacity="0.95"/><ellipse cx="248.0" cy="76.3" rx="4.8" ry="8.3" fill="#03072f" opacity="0.95"/><ellipse cx="262.3" cy="112.1" rx="10.7" ry="10.7" fill="#03072f" opacity="0.95"/><ellipse cx="40.4" cy="104.9" rx="8.4" ry="11.9" fill="#03072f" opacity="0.95"/><ellipse cx="38.1" cy="135.9" rx="9.5" ry="10.7" fill="#03072f" opacity="0.95"/><ellipse cx="23.7" cy="74.0" rx="11.9" ry="9.5" fill="#03072f" opacity="0.95"/><ellipse cx="17.8" cy="115.6" rx="14.3" ry="16.7" fill="#03072f" opacity="0.95"/><ellipse cx="178.8" cy="157.3" rx="35.8" ry="4.8" fill="#03072f" opacity="0.95"/><ellipse cx="107.2" cy="157.3" rx="23.9" ry="4.8" fill="#03072f" opacity="0.95"/><ellipse cx="89.3" cy="26.3" rx="7.2" ry="4.8" fill="#03072f" opacity="0.95"/><ellipse cx="125.1" cy="26.3" rx="6.0" ry="4.8" fill="#03072f" opacity="0.95"/><ellipse cx="11.8" cy="151.4" rx="17.9" ry="9.5" fill="#03072f" opacity="0.95"/><ellipse cx="256.4" cy="151.4" rx="23.9" ry="6.0" fill="#03072f" opacity="0.95"/></g><g filter="url(#b2)" opacity="0.6"><path d="M113.2 12.0 L104.9 19.2 L101.3 23.9 L107.2 28.7 L109.6 34.7 L107.2 39.4 L100.1 45.4 L92.9 50.1 L89.3 56.1 L88.2 62.0 L89.3 68.0 L94.1 74.0 L101.3 78.7 L107.2 83.5 L113.2 85.3 L121.6 86.5 L127.5 89.4 L127.5 97.8 L126.3 107.3 L128.1 115.6 L126.3 124.0 L125.1 131.1 L128.7 137.1 L135.9 145.4 L143.0 150.2" fill="none" stroke="#1a4288" stroke-width="13" stroke-linecap="round" stroke-linejoin="round" opacity="0.55"/><path d="M113.2 12.0 L104.9 19.2 L101.3 23.9 L107.2 28.7 L109.6 34.7 L107.2 39.4 L100.1 45.4 L92.9 50.1 L89.3 56.1 L88.2 62.0 L89.3 68.0 L94.1 74.0 L101.3 78.7 L107.2 83.5 L113.2 85.3 L121.6 86.5 L127.5 89.4 L127.5 97.8 L126.3 107.3 L128.1 115.6 L126.3 124.0 L125.1 131.1 L128.7 137.1 L135.9 145.4 L143.0 150.2" fill="none" stroke="#2252a0" stroke-width="4.5" stroke-linecap="round" stroke-linejoin="round" opacity="0.5"/><path d="M128.7 129.9 L137.1 124.0 L146.6 116.8 L153.8 110.9" fill="none" stroke="#1f4c94" stroke-width="3.5" stroke-linecap="round" stroke-linejoin="round" opacity="0.8"/><path d="M97.7 121.6 L104.9 122.8" fill="none" stroke="#1f4c94" stroke-width="5" stroke-linecap="round" stroke-linejoin="round" opacity="0.7"/><path d="M211.0 74.0 L217.0 79.9 L223.0 85.9 L224.1 93.0 L221.8 103.7 L226.5 115.6" fill="none" stroke="#2050a0" stroke-width="5" stroke-linecap="round" stroke-linejoin="round" opacity="0.8"/><path d="M226.5 115.6 L217.0 121.6 L208.6 127.6 L196.7 133.5 L181.2 141.8 L160.9 149.0 L143.0 150.2" fill="none" stroke="#1f4c98" stroke-width="5.5" stroke-linecap="round" stroke-linejoin="round" opacity="0.8"/><path d="M226.5 115.6 L236.1 129.9 L248.0 135.9 L262.3 141.8 L280.2 145.4" fill="none" stroke="#1f4c98" stroke-width="6" stroke-linecap="round" stroke-linejoin="round" opacity="0.8"/><path d="M250.4 78.7 L249.2 97.8 L248.0 121.6" fill="none" stroke="#1d4890" stroke-width="3" stroke-linecap="round" stroke-linejoin="round" opacity="0.8"/><path d="M230.1 71.6 L230.1 85.9 L228.9 95.4" fill="none" stroke="#2a60a8" stroke-width="3" stroke-linecap="round" stroke-linejoin="round" opacity="0.8"/><path d="M208.6 91.8 L214.6 100.2 L213.4 107.3 L209.8 110.9" fill="none" stroke="#2a60a8" stroke-width="3.5" stroke-linecap="round" stroke-linejoin="round" opacity="0.8"/><path d="M197.9 118.0 L196.7 126.4" fill="none" stroke="#2558a0" stroke-width="4" stroke-linecap="round" stroke-linejoin="round" opacity="0.8"/><path d="M184.8 118.0 L183.6 127.6" fill="none" stroke="#2050a0" stroke-width="3" stroke-linecap="round" stroke-linejoin="round" opacity="0.7"/><path d="M174.0 131.1 L175.2 135.9" fill="none" stroke="#2050a0" stroke-width="4" stroke-linecap="round" stroke-linejoin="round" opacity="0.7"/><path d="M224.1 141.8 L231.3 149.0 L236.1 156.1" fill="none" stroke="#2e68b0" stroke-width="6" stroke-linecap="round" stroke-linejoin="round" opacity="0.9"/><path d="M196.7 140.7 L205.1 140.7" fill="none" stroke="#2558a0" stroke-width="3.5" stroke-linecap="round" stroke-linejoin="round" opacity="0.8"/><path d="M71.5 150.2 L85.8 150.2 L97.7 151.4 L109.6 153.8 L110.8 157.3 L95.3 158.5 L77.4 158.5" fill="none" stroke="#2456a0" stroke-width="3.5" stroke-linecap="round" stroke-linejoin="round" opacity="0.8"/><path d="M11.8 121.6 L23.7 128.7 L35.7 133.5 L47.6 138.3" fill="none" stroke="#1d4890" stroke-width="4" stroke-linecap="round" stroke-linejoin="round" opacity="0.7"/><path d="M41.6 100.2 L47.6 106.1 L52.4 110.9" fill="none" stroke="#1d4890" stroke-width="3" stroke-linecap="round" stroke-linejoin="round" opacity="0.7"/><path d="M11.8 74.0 L19.0 85.9 L14.2 103.7 L9.4 121.6 L9.4 145.4" fill="none" stroke="#1d4890" stroke-width="7" stroke-linecap="round" stroke-linejoin="round" opacity="0.7"/><path d="M23.7 83.5 L33.3 85.9 L41.6 83.5 L47.6 79.9" fill="none" stroke="#2252a0" stroke-width="4" stroke-linecap="round" stroke-linejoin="round" opacity="0.8"/><path d="M65.5 44.2 L73.8 47.8" fill="none" stroke="#153a80" stroke-width="3" stroke-linecap="round" stroke-linejoin="round" opacity="0.6"/><path d="M85.8 16.8 L81.0 21.6 L85.8 28.7" fill="none" stroke="#1d4a90" stroke-width="5" stroke-linecap="round" stroke-linejoin="round" opacity="0.6"/><path d="M119.2 16.8 L126.3 19.2 L128.7 23.9" fill="none" stroke="#2a5ea8" stroke-width="6" stroke-linecap="round" stroke-linejoin="round" opacity="0.7"/><path d="M131.1 9.6 L139.5 12.0 L146.6 9.6" fill="none" stroke="#2456a0" stroke-width="5" stroke-linecap="round" stroke-linejoin="round" opacity="0.7"/><path d="M107.2 39.4 L114.4 41.8 L121.6 44.2" fill="none" stroke="#2050a0" stroke-width="4" stroke-linecap="round" stroke-linejoin="round" opacity="0.7"/><path d="M119.2 52.5 L113.2 66.8" fill="none" stroke="#1d4c94" stroke-width="3" stroke-linecap="round" stroke-linejoin="round" opacity="0.6"/><path d="M149.0 87.1 L152.6 89.4" fill="none" stroke="#1d4c94" stroke-width="3" stroke-linecap="round" stroke-linejoin="round" opacity="0.6"/></g><g filter="url(#b3)" opacity="0.55"><ellipse cx="126.3" cy="125.2" rx="14.3" ry="16.7" fill="#1b4488" opacity="1"/><ellipse cx="131.1" cy="95.4" rx="7.2" ry="11.9" fill="#1b4488" opacity="1"/><ellipse cx="97.7" cy="52.5" rx="9.5" ry="11.9" fill="#1b4488" opacity="1"/><ellipse cx="103.7" cy="23.9" rx="9.5" ry="8.3" fill="#1b4488" opacity="1"/><ellipse cx="200.3" cy="131.1" rx="26.2" ry="8.3" fill="#1b4488" opacity="1"/><ellipse cx="224.1" cy="104.9" rx="10.7" ry="16.7" fill="#1b4488" opacity="1"/><ellipse cx="232.5" cy="135.9" rx="19.1" ry="8.3" fill="#1b4488" opacity="1"/><ellipse cx="214.6" cy="76.3" rx="9.5" ry="9.5" fill="#1b4488" opacity="1"/><ellipse cx="250.4" cy="91.8" rx="4.8" ry="26.2" fill="#1b4488" opacity="1"/><ellipse cx="107.2" cy="145.4" rx="26.2" ry="7.1" fill="#1b4488" opacity="1"/><ellipse cx="155.0" cy="143.0" rx="23.9" ry="7.1" fill="#1b4488" opacity="1"/><ellipse cx="190.7" cy="115.6" rx="9.5" ry="9.5" fill="#1b4488" opacity="1"/></g><g filter="url(#b2)"><ellipse cx="53.6" cy="68.0" rx="14.3" ry="6.0" fill="#1d4e98" opacity="0.9"/><ellipse cx="35.7" cy="56.1" rx="8.4" ry="4.8" fill="#1c4a92" opacity="0.9"/><ellipse cx="73.8" cy="140.7" rx="8.4" ry="9.5" fill="#3672ba" opacity="0.9"/><ellipse cx="71.5" cy="133.5" rx="4.8" ry="4.8" fill="#3470b6" opacity="0.9"/><ellipse cx="81.0" cy="146.6" rx="7.2" ry="3.0" fill="#2f68b0" opacity="0.9"/><ellipse cx="146.6" cy="19.2" rx="7.2" ry="6.0" fill="#2e68b0" opacity="0.9"/><ellipse cx="135.9" cy="27.5" rx="6.0" ry="3.6" fill="#2c64ac" opacity="0.9"/><ellipse cx="81.0" cy="31.1" rx="6.0" ry="3.6" fill="#2f66ae" opacity="0.9"/><ellipse cx="164.5" cy="44.2" rx="16.7" ry="4.2" fill="#1b4488" opacity="0.9"/><ellipse cx="149.0" cy="39.4" rx="6.0" ry="3.6" fill="#1b4488" opacity="0.9"/><ellipse cx="188.4" cy="62.0" rx="3.6" ry="9.5" fill="#2558a0" opacity="0.9"/><ellipse cx="205.1" cy="53.7" rx="4.8" ry="3.0" fill="#2e66ae" opacity="0.9"/><ellipse cx="217.0" cy="62.0" rx="7.2" ry="6.0" fill="#143a84" opacity="0.9"/><ellipse cx="249.2" cy="68.0" rx="6.0" ry="7.1" fill="#143a84" opacity="0.9"/><ellipse cx="271.9" cy="79.9" rx="9.5" ry="9.5" fill="#2e66ae" opacity="0.9"/><ellipse cx="280.2" cy="95.4" rx="9.5" ry="4.8" fill="#2a60a8" opacity="0.9"/><ellipse cx="286.2" cy="104.9" rx="7.2" ry="6.0" fill="#2a60a8" opacity="0.9"/><ellipse cx="41.6" cy="14.4" rx="8.4" ry="6.0" fill="#20509a" opacity="0.9"/><ellipse cx="71.5" cy="7.3" rx="7.2" ry="7.1" fill="#1a4088" opacity="0.9"/><ellipse cx="190.7" cy="0.1" rx="29.8" ry="3.6" fill="#1f4c94" opacity="0.9"/><ellipse cx="143.0" cy="0.1" rx="17.9" ry="3.6" fill="#143a80" opacity="0.9"/><ellipse cx="166.9" cy="16.8" rx="4.8" ry="4.8" fill="#1d4a90" opacity="0.9"/><ellipse cx="83.4" cy="124.0" rx="4.8" ry="4.8" fill="#1b4690" opacity="0.9"/><ellipse cx="95.3" cy="110.9" rx="3.6" ry="3.6" fill="#1b4690" opacity="0.9"/><ellipse cx="200.3" cy="109.7" rx="3.6" ry="7.1" fill="#1d4c94" opacity="0.9"/><ellipse cx="193.1" cy="107.3" rx="3.0" ry="8.3" fill="#20509a" opacity="0.9"/><ellipse cx="208.6" cy="71.6" rx="4.8" ry="2.4" fill="#1d4c94" opacity="0.9"/><ellipse cx="119.2" cy="69.2" rx="3.6" ry="4.8" fill="#1d4c94" opacity="0.9"/><ellipse cx="65.5" cy="35.8" rx="6.0" ry="3.0" fill="#2a60a8" opacity="0.9"/><ellipse cx="50.0" cy="48.9" rx="3.0" ry="4.8" fill="#2a60a8" opacity="0.9"/><ellipse cx="131.1" cy="8.5" rx="9.5" ry="3.6" fill="#1d4c94" opacity="0.9"/></g><path d="M60.7 132.3 L70.3 131.1 L75.6 132.3 L77.4 135.9 L76.2 140.7 L78.0 144.2 L76.8 149.0 L70.3 152.1 L63.1 152.6 L59.5 149.0 L59.5 139.5 Z" fill="#3a76be" filter="url(#b1)" opacity="0.95"/><g filter="url(#b2)"><ellipse cx="90.5" cy="137.1" rx="10.7" ry="7.1" fill="#03072f" opacity="0.95"/><ellipse cx="100.1" cy="133.5" rx="7.2" ry="6.0" fill="#03072f" opacity="0.8"/><ellipse cx="42.8" cy="121.6" rx="6.0" ry="19.1" fill="#143a80" opacity="0.5"/></g><path d="M180.0 2.1 L176.4 1.2 L173.7 1.2 L170.5 1.8 L166.9 2.5 L163.9 3.5 L160.9 4.6 L158.5 6.7 L156.7 8.5 L155.0 9.9 L152.6 10.6 L149.6 11.8 L149.0 13.2 L149.2 15.0 L149.8 16.0 L151.4 16.8 L153.2 16.6 L154.7 15.6 L155.7 14.9 L156.4 15.6 L156.5 16.4 L157.2 17.3 L158.1 18.7 L158.4 19.8 L160.0 19.9 L160.4 19.1 L162.1 18.9 L162.8 17.4 L163.1 16.2 L164.5 15.4 L165.6 14.4 L163.7 13.6 L163.5 12.0 L165.1 10.8 L167.5 9.9 L168.7 8.7 L169.5 7.6 L171.7 7.5 L173.2 8.5 L172.3 9.3 L169.9 10.6 L168.4 11.7 L168.6 13.2 L169.5 14.1 L170.5 14.5 L172.9 14.2 L175.8 13.8 L177.6 14.3 L179.1 14.5 L176.7 14.9 L174.0 14.9 L172.3 15.1 L171.1 15.5 L171.2 16.2 L172.1 16.4 L172.0 17.6 L171.2 18.0 L170.0 17.1 L168.8 17.4 L168.1 18.2 L168.1 19.8 L166.9 20.5 L166.4 21.1 L165.2 21.0 L164.9 20.6 L162.7 21.0 L160.1 21.7 L159.1 21.1 L157.7 21.2 L156.2 21.6 L155.9 21.2 L155.0 21.0 L154.8 20.1 L155.6 19.8 L155.2 18.9 L156.0 18.7 L155.3 18.1 L155.7 17.1 L154.4 17.7 L152.9 18.0 L152.7 19.2 L152.8 19.9 L153.4 20.6 L153.6 21.6 L153.2 22.0 L151.4 22.0 L150.2 22.3 L148.8 22.7 L148.2 23.8 L147.2 24.7 L146.0 25.0 L144.9 25.2 L144.8 26.1 L143.3 26.8 L141.6 27.0 L141.5 26.7 L140.8 26.7 L141.1 27.9 L139.7 28.0 L137.5 28.0 L137.4 28.7 L139.5 29.2 L140.4 29.7 L141.6 31.0 L141.7 31.7 L141.5 32.9 L141.0 34.2 L138.5 34.1 L136.1 33.9 L133.5 33.8 L132.1 34.5 L132.5 35.6 L132.7 37.0 L132.4 38.2 L131.8 39.7 L132.5 40.1 L132.5 40.7 L132.3 41.8 L133.6 41.8 L134.4 41.6 L135.4 42.2 L136.4 43.0 L137.8 42.2 L140.4 42.0 L141.1 41.3 L142.2 41.1 L142.9 39.8 L142.7 38.8 L143.9 37.3 L144.2 36.9 L145.7 36.6 L146.8 35.5 L146.7 34.5 L147.8 34.1 L149.5 34.3 L150.9 34.4 L152.0 33.7 L153.6 33.0 L155.1 33.5 L155.6 34.7 L156.4 35.4 L157.6 36.1 L159.3 36.7 L160.1 37.3 L160.9 38.0 L161.8 38.2 L162.2 39.4 L161.8 40.6 L162.7 40.1 L163.4 39.4 L162.7 38.6 L163.3 37.6 L164.6 38.3 L165.1 38.0 L164.3 37.4 L162.8 36.8 L162.0 36.0 L160.7 35.7 L159.3 34.1 L157.8 33.2 L157.7 31.9 L159.1 31.4 L159.3 32.3 L160.1 31.9 L161.0 33.1 L162.6 34.1 L164.0 34.8 L165.1 35.4 L166.2 36.1 L166.2 37.8 L166.9 38.6 L168.2 40.1 L168.4 41.0 L168.9 42.0 L169.8 42.4 L170.6 42.4 L170.3 41.3 L171.5 41.0 L171.8 40.6 L170.7 39.8 L170.2 38.8 L170.2 37.8 L171.3 38.2 L172.0 37.4 L173.5 37.2 L174.2 37.5 L174.4 38.1 L174.9 37.8 L174.3 38.8 L175.0 39.8 L174.4 40.4 L175.5 41.0 L175.6 41.8 L176.7 42.2 L177.9 42.6 L179.3 42.6 L179.7 41.9 L181.2 42.4 L182.2 43.0 L183.4 42.8 L184.4 42.0 L185.5 42.3 L186.2 42.2 L185.9 43.1 L185.9 44.5 L185.4 45.5 L184.9 46.4 L184.7 47.4 L184.2 48.4 L183.8 48.6 L182.6 48.8 L181.6 48.7 L181.8 50.1 L182.0 50.7 L182.6 51.9 L183.8 52.8 L184.3 51.9 L184.7 50.7 L184.8 52.4 L185.5 53.4 L186.6 54.9 L187.4 56.3 L188.5 57.3 L189.6 59.1 L189.8 60.4 L191.0 61.8 L191.9 63.2 L193.1 65.0 L194.0 66.5 L194.2 68.1 L194.7 70.0 L194.9 70.7 L196.7 70.6 L198.7 69.9 L201.1 69.2 L201.6 68.6 L203.3 67.9 L205.3 67.2 L205.4 66.5 L207.4 65.6 L209.0 64.9 L210.2 64.4 L211.0 63.4 L212.0 63.2 L211.9 61.8 L212.9 61.6 L214.4 59.2 L213.1 57.8 L211.3 57.4 L210.4 56.6 L210.2 54.7 L210.0 54.9 L209.7 55.4 L208.9 55.9 L207.9 56.8 L206.3 57.2 L204.8 57.3 L204.6 56.6 L204.6 55.0 L204.1 54.8 L203.6 55.6 L203.5 56.2 L202.9 55.6 L202.8 54.3 L202.1 53.5 L201.2 52.8 L200.8 51.7 L200.2 50.9 L200.4 50.3 L201.1 50.0 L202.3 49.9 L202.9 50.1 L203.6 51.3 L204.3 52.6 L205.7 53.4 L206.9 54.1 L208.2 54.3 L209.4 53.8 L210.3 53.6 L211.1 54.2 L211.5 55.3 L213.2 55.5 L215.2 55.7 L216.5 56.0 L218.7 55.9 L220.2 55.9 L222.2 55.5 L223.2 56.5 L223.6 57.5 L224.5 57.8 L225.6 58.7 L226.9 58.5 L225.3 59.2 L227.0 61.1 L227.8 61.1 L229.0 60.6 L229.6 59.4 L229.9 60.5 L229.8 61.7 L229.9 63.2 L230.4 65.3 L230.8 67.1 L231.7 68.8 L232.4 70.7 L233.3 72.4 L233.9 74.1 L234.5 75.4 L235.5 76.2 L236.3 75.4 L237.4 74.8 L238.2 73.6 L238.2 71.8 L238.8 70.1 L238.6 68.6 L238.6 67.6 L239.4 67.1 L240.3 66.5 L241.2 66.0 L242.5 64.8 L244.2 63.2 L245.1 62.3 L246.6 61.5 L246.8 60.3 L248.0 60.0 L249.4 59.8 L251.0 59.1 L252.5 59.3 L253.0 60.9 L253.7 61.9 L254.7 62.9 L255.6 64.2 L255.8 65.9 L255.5 66.8 L256.8 67.1 L257.9 66.3 L258.7 65.6 L259.5 66.3 L259.7 68.0 L260.1 69.6 L260.7 71.2 L260.8 73.0 L260.3 74.9 L260.3 76.3 L261.1 77.2 L262.3 78.2 L262.8 79.6 L263.2 81.0 L263.9 82.4 L264.9 83.2 L266.4 84.2 L267.2 84.2 L267.3 83.0 L266.4 81.9 L266.4 80.7 L265.9 79.3 L264.9 78.5 L263.8 77.7 L262.9 77.2 L262.4 75.7 L261.5 74.8 L261.5 73.4 L262.2 71.8 L262.3 70.0 L263.4 69.9 L263.5 70.7 L265.1 71.3 L265.8 72.2 L266.6 73.2 L268.0 73.5 L268.0 75.5 L268.6 75.4 L270.1 74.4 L270.7 73.5 L272.1 72.8 L273.3 71.8 L273.4 70.4 L273.1 68.6 L272.6 67.3 L272.1 66.6 L271.0 65.7 L270.1 64.7 L269.2 63.4 L269.4 62.3 L270.3 61.2 L271.6 60.4 L272.6 60.0 L273.8 60.3 L274.1 61.6 L274.7 61.6 L274.7 60.5 L276.0 60.1 L277.6 59.8 L278.5 59.3 L279.5 59.2 L280.8 58.7 L282.1 58.1 L283.6 57.3 L284.6 56.3 L285.6 55.4 L285.9 54.3 L286.8 53.4 L288.0 51.9 L288.6 49.2 L288.4 48.2 L287.3 46.8 L286.5 45.4 L285.2 44.4 L285.6 43.6 L286.5 42.9 L288.6 42.0 L288.6 41.1 L287.1 40.9 L285.6 41.6 L284.9 41.1 L283.8 40.3 L283.4 39.4 L284.5 39.2 L285.5 38.5 L286.8 37.6 L288.6 37.3 L288.6 -2.3 L223.0 -2.3 L222.6 1.3 L222.4 3.1 L224.7 4.4 L221.8 3.9 L220.0 3.3 L215.8 2.9 L214.6 4.0 L211.0 4.2 L208.0 4.5 L206.9 3.8 L202.7 4.8 L198.5 5.1 L198.5 6.2 L195.9 6.7 L195.3 5.8 L195.8 4.4 L194.7 4.2 L195.3 6.9 L193.1 6.8 L191.3 7.5 L190.7 8.8 L188.4 8.7 L187.2 9.8 L184.8 9.3 L184.2 7.9 L182.4 6.6 L181.8 6.0 L184.2 6.6 L189.0 7.1 L191.3 6.8 L192.2 6.1 L191.3 5.1 L188.4 4.4 L184.8 3.5 L182.4 3.1 L180.0 2.7 Z M136.0 43.2 L136.7 43.1 L137.7 43.9 L139.5 43.8 L140.6 44.1 L142.3 43.4 L144.2 42.5 L146.6 42.0 L149.0 42.0 L152.0 41.8 L154.7 41.4 L156.2 41.8 L155.6 42.5 L155.7 43.5 L156.2 44.2 L155.1 45.0 L155.9 45.6 L156.7 46.3 L158.8 46.7 L161.2 47.3 L161.5 48.4 L163.9 49.1 L165.7 49.8 L166.9 48.9 L166.9 47.5 L168.7 46.7 L170.5 47.0 L172.9 48.2 L175.2 48.6 L177.6 49.1 L178.8 48.6 L180.0 48.4 L181.6 48.7 L181.8 50.1 L181.9 50.6 L183.0 52.5 L183.6 54.3 L184.8 56.7 L185.6 58.5 L187.0 59.7 L187.4 60.9 L187.4 62.5 L189.0 64.4 L190.2 67.3 L191.9 68.6 L193.7 70.4 L194.7 71.0 L194.7 72.1 L195.5 73.4 L196.7 73.4 L199.1 72.5 L201.5 72.4 L204.1 71.7 L204.0 73.4 L203.6 74.6 L202.7 76.3 L201.5 78.1 L200.3 80.5 L198.5 82.5 L197.1 83.5 L195.5 84.7 L193.7 86.3 L192.5 87.9 L191.1 89.0 L190.7 90.0 L190.4 90.8 L189.8 91.8 L189.3 93.4 L189.9 94.0 L190.2 95.4 L190.3 97.2 L191.2 98.4 L191.5 100.2 L191.5 102.5 L191.7 103.7 L190.7 105.2 L189.6 106.1 L187.2 107.2 L187.0 108.3 L185.4 109.1 L184.5 109.5 L184.4 110.6 L185.1 112.1 L185.4 114.2 L185.3 114.9 L183.0 115.9 L181.9 116.7 L182.3 117.8 L181.9 119.8 L181.0 120.4 L180.0 121.5 L179.1 122.8 L177.6 124.3 L176.4 125.2 L174.6 126.1 L173.6 126.4 L171.1 126.5 L169.3 126.6 L166.9 127.3 L165.5 126.7 L165.0 126.7 L164.9 125.2 L164.5 124.6 L164.9 123.4 L163.7 121.6 L162.7 119.9 L161.6 118.6 L160.9 117.2 L160.7 115.6 L160.3 113.3 L159.1 110.9 L157.9 108.5 L157.1 106.5 L157.1 104.9 L157.7 103.1 L159.0 100.8 L159.5 99.0 L158.8 96.6 L158.3 94.2 L157.7 93.0 L157.3 91.8 L156.4 90.6 L155.0 89.2 L154.1 88.0 L153.5 86.7 L154.4 85.5 L154.5 84.4 L154.7 83.1 L154.6 81.8 L154.4 81.1 L153.2 80.4 L151.4 80.6 L150.2 80.7 L149.0 79.1 L148.2 78.4 L147.1 78.2 L145.4 78.4 L144.5 78.6 L143.0 79.2 L141.0 80.2 L139.5 79.8 L138.3 79.6 L135.9 80.2 L134.1 80.6 L132.3 79.9 L130.1 78.4 L128.7 77.2 L127.3 75.7 L126.7 74.6 L125.5 73.0 L125.0 72.5 L123.9 71.6 L123.1 71.1 L123.0 69.8 L122.8 68.8 L122.2 68.4 L123.3 66.8 L123.6 64.4 L123.7 62.6 L122.8 60.9 L123.3 59.1 L123.9 57.6 L125.4 55.5 L125.7 54.7 L127.0 53.1 L127.6 52.6 L129.9 51.6 L131.1 50.7 L131.5 49.5 L131.3 48.4 L132.1 47.0 L132.9 46.2 L134.0 45.9 L134.9 45.3 L135.5 44.2 Z M201.8 100.2 L202.9 102.5 L203.3 104.3 L202.4 105.5 L202.0 107.3 L200.9 110.9 L199.8 113.9 L199.1 115.6 L197.0 116.4 L195.5 115.6 L194.9 113.9 L194.7 112.1 L195.9 110.3 L195.9 108.5 L195.5 106.7 L196.1 105.2 L198.3 104.7 L200.1 103.5 L200.6 101.9 Z M50.8 75.6 L51.4 76.3 L52.4 74.8 L53.0 73.4 L53.8 72.6 L55.9 72.3 L57.1 71.3 L58.0 71.1 L58.0 72.2 L57.4 72.8 L57.7 73.0 L59.3 72.2 L59.5 71.3 L60.0 72.2 L61.6 72.8 L61.9 73.4 L64.3 73.2 L65.5 73.8 L66.7 73.2 L69.1 73.1 L68.1 73.5 L69.2 74.1 L70.3 74.8 L70.9 75.7 L71.7 76.1 L73.2 77.3 L74.8 78.7 L76.8 78.8 L78.6 79.0 L80.4 79.8 L81.4 80.6 L82.2 81.3 L82.8 83.5 L83.4 84.7 L83.4 85.9 L85.2 86.2 L85.8 86.7 L87.0 86.7 L88.8 87.5 L90.2 88.8 L91.7 88.7 L93.5 89.3 L95.3 89.2 L97.1 90.3 L98.5 91.5 L100.1 91.9 L101.0 92.4 L101.5 94.3 L101.4 95.5 L100.7 97.2 L99.5 98.4 L98.5 99.6 L97.1 101.4 L96.5 103.5 L96.5 105.5 L96.1 107.3 L95.6 109.2 L95.0 110.0 L94.1 111.8 L93.0 113.1 L91.5 113.3 L89.7 113.6 L87.8 114.5 L86.0 115.6 L85.1 116.7 L85.1 118.0 L84.9 119.8 L83.7 120.8 L83.0 122.2 L82.0 123.4 L80.9 124.2 L79.3 126.0 L78.6 127.0 L77.4 127.4 L76.0 127.4 L74.1 126.8 L73.4 126.5 L73.4 127.1 L74.8 128.1 L74.7 129.1 L75.4 129.8 L74.3 131.1 L72.6 132.0 L70.3 132.3 L69.0 132.2 L68.8 134.1 L66.9 134.8 L65.5 134.5 L65.4 135.9 L67.2 136.7 L65.5 137.3 L65.1 139.2 L63.3 139.8 L62.5 140.7 L63.7 141.8 L64.5 142.9 L62.5 144.6 L61.3 145.7 L60.6 147.2 L61.4 148.2 L61.2 148.6 L62.2 149.9 L63.7 150.8 L65.3 151.0 L63.7 151.5 L61.3 151.8 L59.5 151.7 L57.7 150.8 L55.9 149.6 L54.2 148.4 L53.2 146.0 L53.0 143.6 L54.2 142.4 L53.0 141.5 L54.8 140.1 L55.4 138.3 L55.9 136.5 L54.8 136.5 L55.0 135.3 L55.2 133.5 L55.6 131.7 L55.2 130.2 L55.9 129.3 L56.5 127.9 L57.5 125.8 L57.6 123.4 L57.9 121.6 L57.7 119.8 L58.6 117.4 L58.9 115.0 L59.0 113.9 L59.3 111.5 L59.3 109.7 L59.2 107.8 L57.9 106.7 L56.2 105.8 L54.2 104.7 L52.6 103.4 L52.0 102.4 L51.1 100.3 L50.0 98.3 L49.1 96.6 L48.2 94.9 L47.6 93.7 L46.2 93.0 L46.0 91.5 L47.0 90.2 L47.6 89.7 L47.8 88.8 L46.5 88.6 L46.6 87.1 L47.5 85.9 L47.6 84.9 L48.9 84.3 L49.0 83.7 L49.6 82.9 L50.6 82.7 L50.9 81.3 L50.6 80.2 L50.8 79.1 L50.6 77.9 L50.1 77.3 L49.7 76.0 L48.2 75.2 L47.6 76.0 L47.1 77.2 L45.6 76.9 L44.1 76.2 L43.2 75.6 L41.8 74.2 L40.8 74.0 L40.7 72.6 L38.7 71.0 L38.4 70.3 L35.7 69.7 L32.9 68.6 L30.3 66.6 L27.9 67.2 L23.9 65.9 L21.1 64.4 L18.6 63.1 L16.9 61.6 L17.2 60.3 L16.1 58.2 L14.8 57.3 L12.5 55.4 L11.2 53.1 L8.8 50.7 L6.1 48.0 L6.2 50.1 L8.2 52.5 L10.0 54.9 L11.5 57.0 L11.9 58.6 L11.2 57.9 L9.4 56.3 L9.1 54.9 L7.0 53.5 L5.8 52.5 L6.4 51.3 L4.9 49.7 L3.8 48.0 L3.3 47.2 L2.0 45.4 L-0.1 44.8 L-2.5 44.2 L-2.5 -2.3 L29.7 -2.3 L29.7 0.4 L33.3 1.9 L35.7 3.9 L38.7 4.6 L41.0 3.0 L44.6 3.0 L45.8 4.3 L45.8 6.1 L43.4 7.0 L40.4 6.9 L39.2 8.1 L38.1 9.6 L34.8 10.2 L33.3 11.2 L31.5 12.6 L29.9 14.4 L30.3 15.8 L32.1 16.2 L32.7 17.9 L35.7 18.0 L38.7 19.2 L41.6 20.0 L44.9 20.1 L44.9 21.6 L45.2 23.3 L46.8 24.8 L48.2 24.7 L49.0 23.7 L48.8 22.2 L48.2 20.7 L50.0 20.4 L51.7 18.8 L51.2 17.4 L50.0 16.0 L50.6 14.4 L49.6 13.2 L50.2 11.4 L53.0 11.7 L55.9 11.8 L57.7 12.9 L60.1 13.5 L59.8 15.2 L61.3 16.6 L63.1 16.2 L64.9 15.0 L66.0 14.1 L67.3 15.2 L69.1 16.8 L69.7 18.3 L72.1 20.0 L73.2 21.2 L74.7 21.0 L76.5 22.2 L76.6 23.3 L75.3 24.5 L73.2 24.8 L71.5 26.0 L67.9 26.0 L63.8 26.1 L63.1 26.9 L60.1 28.5 L58.1 30.1 L59.5 29.5 L61.9 28.0 L64.3 27.3 L66.4 27.7 L65.5 28.7 L65.7 29.7 L66.1 30.7 L67.9 31.3 L69.7 31.1 L70.9 29.9 L71.5 31.1 L70.3 31.9 L67.3 32.8 L65.5 33.9 L64.2 33.7 L66.1 31.4 L64.3 32.0 L63.1 32.5 L60.7 33.5 L58.9 34.2 L58.7 35.3 L59.5 36.2 L58.3 36.4 L57.1 37.0 L54.8 37.6 L53.3 40.0 L52.0 40.6 L52.4 41.9 L53.0 43.8 L51.8 44.5 L50.1 45.4 L48.9 45.7 L47.8 46.8 L46.5 47.8 L45.9 48.9 L46.0 50.1 L46.9 52.0 L47.5 53.7 L47.5 54.9 L47.1 55.9 L46.4 56.0 L46.0 55.3 L45.2 54.3 L44.3 52.8 L44.0 51.2 L42.8 50.0 L41.3 50.5 L39.8 49.7 L38.1 49.8 L36.1 49.9 L36.4 51.2 L35.1 51.1 L33.3 50.6 L31.1 50.5 L29.7 51.1 L27.9 52.0 L26.8 53.1 L27.1 55.0 L26.5 57.3 L26.4 59.3 L27.1 61.1 L28.3 62.9 L28.7 63.5 L30.3 64.2 L32.3 63.8 L33.9 63.8 L34.8 62.3 L35.2 60.9 L36.9 60.5 L38.7 60.3 L39.5 60.6 L38.7 62.6 L37.9 63.8 L37.7 65.6 L37.0 66.9 L37.3 67.1 L38.4 66.9 L40.4 66.9 L42.2 67.1 L43.8 68.0 L43.5 68.8 L43.1 71.0 L43.3 72.9 L44.0 74.0 L45.0 74.9 L46.2 75.4 L48.1 74.4 Z M72.3 29.2 L73.2 28.1 L73.8 26.9 L75.0 25.4 L76.7 24.5 L76.5 25.7 L75.6 26.6 L76.8 26.6 L78.6 27.0 L79.2 28.0 L80.2 29.2 L79.6 30.4 L78.6 29.9 L77.4 30.0 L76.2 29.3 L74.4 29.2 Z M41.8 59.8 L44.0 58.6 L46.4 58.4 L48.8 59.2 L51.2 60.6 L53.0 61.2 L54.5 61.8 L53.0 62.2 L50.5 62.2 L50.8 61.3 L49.4 60.9 L47.0 59.8 L45.2 59.3 L43.4 59.5 Z M54.3 63.8 L55.6 62.2 L57.5 62.3 L59.6 62.5 L61.4 63.7 L60.0 64.1 L58.3 64.3 L57.5 64.8 L56.2 64.2 Z M49.6 64.0 L51.2 63.8 L52.1 64.4 L50.9 64.7 Z M62.9 63.8 L64.8 64.0 L64.7 64.4 L62.9 64.4 Z M136.2 26.2 L138.9 26.0 L141.2 25.5 L144.7 24.9 L143.9 24.5 L145.1 23.2 L143.4 22.7 L143.2 22.0 L141.6 20.8 L141.1 19.8 L140.5 19.2 L139.5 19.2 L140.5 17.9 L140.9 17.3 L138.9 17.1 L138.3 17.3 L139.3 16.1 L137.1 16.1 L136.1 17.4 L136.4 18.6 L136.5 19.8 L137.3 19.7 L137.1 20.6 L138.9 20.5 L139.3 21.7 L139.5 22.3 L137.7 22.4 L138.0 23.0 L138.1 23.6 L136.8 24.1 L138.0 24.4 L139.5 24.7 L139.2 24.9 L137.9 25.0 Z M131.1 24.4 L133.1 24.3 L135.5 23.7 L135.8 22.4 L136.4 20.8 L135.6 20.1 L134.1 20.0 L132.9 20.8 L131.1 21.3 L132.1 22.5 L130.7 23.7 Z M114.4 7.9 L116.8 6.8 L121.6 7.0 L125.1 7.0 L126.8 8.5 L125.1 9.3 L121.0 10.4 L116.2 9.8 L116.8 9.1 L114.4 8.7 Z M157.8 40.6 L158.9 40.4 L161.6 40.3 L161.0 42.2 L157.9 41.1 Z M152.8 37.0 L154.5 37.0 L154.6 39.2 L153.1 39.4 Z M153.3 35.1 L154.4 34.7 L154.2 36.4 L153.4 36.1 Z M171.1 43.5 L174.4 43.8 L174.3 44.2 L171.2 43.9 Z M181.6 44.2 L182.4 43.7 L184.3 43.4 L183.5 44.2 L182.4 44.7 Z M238.2 74.3 L238.7 74.2 L240.0 75.7 L240.6 77.5 L239.7 78.6 L238.6 78.7 L238.2 76.9 Z M272.7 63.0 L274.8 62.0 L274.8 63.5 L273.7 64.2 Z M256.7 79.2 L259.3 79.7 L260.8 81.3 L262.7 82.9 L264.1 83.5 L266.3 85.3 L266.9 87.1 L267.7 88.1 L269.5 89.4 L269.2 92.8 L267.7 92.7 L265.1 90.6 L263.5 88.8 L262.7 86.8 L261.1 85.3 L260.8 83.8 L259.0 82.1 L257.6 80.7 Z M268.5 94.0 L269.6 92.9 L272.5 93.6 L275.2 93.5 L277.5 94.1 L279.6 95.0 L279.5 96.1 L275.4 95.8 L272.5 95.2 L270.0 94.7 Z M273.1 84.1 L274.6 83.8 L275.8 82.9 L277.8 82.1 L279.0 80.4 L280.8 79.3 L282.4 77.5 L283.8 78.7 L285.0 79.7 L283.8 80.7 L283.4 82.3 L283.8 83.5 L285.0 84.7 L283.2 85.3 L283.2 87.1 L282.0 88.3 L281.6 90.0 L279.7 90.6 L277.8 89.7 L276.4 89.9 L274.5 89.3 L274.3 87.7 L273.3 86.5 L273.1 85.3 Z M285.6 92.4 L285.7 90.0 L284.9 89.1 L285.3 87.7 L285.9 85.9 L286.2 85.0 L288.6 85.0 L288.6 92.4 Z M282.8 75.9 L285.6 73.4 L285.8 73.7 L283.2 76.1 Z M288.6 107.3 L286.2 109.6 L284.5 110.0 L282.6 110.5 L281.4 110.8 L279.7 111.8 L278.5 112.8 L278.4 115.0 L278.1 116.8 L279.3 118.6 L279.7 120.2 L280.3 122.2 L281.1 124.0 L280.2 125.9 L280.3 126.7 L282.0 127.6 L283.8 127.6 L286.2 126.2 L288.6 126.2 Z M70.0 147.6 L72.1 147.0 L74.1 147.3 L72.9 148.2 L70.9 148.0 Z M47.6 -2.3 L51.2 -0.6 L54.8 0.6 L59.5 1.8 L61.9 3.0 L63.7 4.6 L69.1 6.3 L67.3 8.5 L64.9 8.9 L65.5 10.6 L63.7 11.4 L61.9 11.7 L59.5 11.1 L57.1 10.1 L54.2 9.1 L50.6 9.2 L50.0 7.9 L54.8 7.9 L55.4 6.7 L56.2 5.1 L52.4 4.5 L49.4 2.7 L45.2 2.5 L41.6 2.3 L36.9 1.9 L35.7 0.1 L35.7 -2.3 Z M39.2 9.6 L41.6 7.5 L44.0 8.2 L47.0 9.6 L45.2 10.2 L41.6 10.6 Z M204.5 0.4 L206.3 1.5 L209.8 1.8 L211.6 0.7 L209.8 -1.1 L212.2 -2.3 L205.1 -2.3 Z" fill="none" stroke="#2a5fa8" stroke-width="2.5" stroke-linejoin="round" filter="url(#b1)" opacity="0.85"/><path d="M180.0 2.1 L176.4 1.2 L173.7 1.2 L170.5 1.8 L166.9 2.5 L163.9 3.5 L160.9 4.6 L158.5 6.7 L156.7 8.5 L155.0 9.9 L152.6 10.6 L149.6 11.8 L149.0 13.2 L149.2 15.0 L149.8 16.0 L151.4 16.8 L153.2 16.6 L154.7 15.6 L155.7 14.9 L156.4 15.6 L156.5 16.4 L157.2 17.3 L158.1 18.7 L158.4 19.8 L160.0 19.9 L160.4 19.1 L162.1 18.9 L162.8 17.4 L163.1 16.2 L164.5 15.4 L165.6 14.4 L163.7 13.6 L163.5 12.0 L165.1 10.8 L167.5 9.9 L168.7 8.7 L169.5 7.6 L171.7 7.5 L173.2 8.5 L172.3 9.3 L169.9 10.6 L168.4 11.7 L168.6 13.2 L169.5 14.1 L170.5 14.5 L172.9 14.2 L175.8 13.8 L177.6 14.3 L179.1 14.5 L176.7 14.9 L174.0 14.9 L172.3 15.1 L171.1 15.5 L171.2 16.2 L172.1 16.4 L172.0 17.6 L171.2 18.0 L170.0 17.1 L168.8 17.4 L168.1 18.2 L168.1 19.8 L166.9 20.5 L166.4 21.1 L165.2 21.0 L164.9 20.6 L162.7 21.0 L160.1 21.7 L159.1 21.1 L157.7 21.2 L156.2 21.6 L155.9 21.2 L155.0 21.0 L154.8 20.1 L155.6 19.8 L155.2 18.9 L156.0 18.7 L155.3 18.1 L155.7 17.1 L154.4 17.7 L152.9 18.0 L152.7 19.2 L152.8 19.9 L153.4 20.6 L153.6 21.6 L153.2 22.0 L151.4 22.0 L150.2 22.3 L148.8 22.7 L148.2 23.8 L147.2 24.7 L146.0 25.0 L144.9 25.2 L144.8 26.1 L143.3 26.8 L141.6 27.0 L141.5 26.7 L140.8 26.7 L141.1 27.9 L139.7 28.0 L137.5 28.0 L137.4 28.7 L139.5 29.2 L140.4 29.7 L141.6 31.0 L141.7 31.7 L141.5 32.9 L141.0 34.2 L138.5 34.1 L136.1 33.9 L133.5 33.8 L132.1 34.5 L132.5 35.6 L132.7 37.0 L132.4 38.2 L131.8 39.7 L132.5 40.1 L132.5 40.7 L132.3 41.8 L133.6 41.8 L134.4 41.6 L135.4 42.2 L136.4 43.0 L137.8 42.2 L140.4 42.0 L141.1 41.3 L142.2 41.1 L142.9 39.8 L142.7 38.8 L143.9 37.3 L144.2 36.9 L145.7 36.6 L146.8 35.5 L146.7 34.5 L147.8 34.1 L149.5 34.3 L150.9 34.4 L152.0 33.7 L153.6 33.0 L155.1 33.5 L155.6 34.7 L156.4 35.4 L157.6 36.1 L159.3 36.7 L160.1 37.3 L160.9 38.0 L161.8 38.2 L162.2 39.4 L161.8 40.6 L162.7 40.1 L163.4 39.4 L162.7 38.6 L163.3 37.6 L164.6 38.3 L165.1 38.0 L164.3 37.4 L162.8 36.8 L162.0 36.0 L160.7 35.7 L159.3 34.1 L157.8 33.2 L157.7 31.9 L159.1 31.4 L159.3 32.3 L160.1 31.9 L161.0 33.1 L162.6 34.1 L164.0 34.8 L165.1 35.4 L166.2 36.1 L166.2 37.8 L166.9 38.6 L168.2 40.1 L168.4 41.0 L168.9 42.0 L169.8 42.4 L170.6 42.4 L170.3 41.3 L171.5 41.0 L171.8 40.6 L170.7 39.8 L170.2 38.8 L170.2 37.8 L171.3 38.2 L172.0 37.4 L173.5 37.2 L174.2 37.5 L174.4 38.1 L174.9 37.8 L174.3 38.8 L175.0 39.8 L174.4 40.4 L175.5 41.0 L175.6 41.8 L176.7 42.2 L177.9 42.6 L179.3 42.6 L179.7 41.9 L181.2 42.4 L182.2 43.0 L183.4 42.8 L184.4 42.0 L185.5 42.3 L186.2 42.2 L185.9 43.1 L185.9 44.5 L185.4 45.5 L184.9 46.4 L184.7 47.4 L184.2 48.4 L183.8 48.6 L182.6 48.8 L181.6 48.7 L181.8 50.1 L182.0 50.7 L182.6 51.9 L183.8 52.8 L184.3 51.9 L184.7 50.7 L184.8 52.4 L185.5 53.4 L186.6 54.9 L187.4 56.3 L188.5 57.3 L189.6 59.1 L189.8 60.4 L191.0 61.8 L191.9 63.2 L193.1 65.0 L194.0 66.5 L194.2 68.1 L194.7 70.0 L194.9 70.7 L196.7 70.6 L198.7 69.9 L201.1 69.2 L201.6 68.6 L203.3 67.9 L205.3 67.2 L205.4 66.5 L207.4 65.6 L209.0 64.9 L210.2 64.4 L211.0 63.4 L212.0 63.2 L211.9 61.8 L212.9 61.6 L214.4 59.2 L213.1 57.8 L211.3 57.4 L210.4 56.6 L210.2 54.7 L210.0 54.9 L209.7 55.4 L208.9 55.9 L207.9 56.8 L206.3 57.2 L204.8 57.3 L204.6 56.6 L204.6 55.0 L204.1 54.8 L203.6 55.6 L203.5 56.2 L202.9 55.6 L202.8 54.3 L202.1 53.5 L201.2 52.8 L200.8 51.7 L200.2 50.9 L200.4 50.3 L201.1 50.0 L202.3 49.9 L202.9 50.1 L203.6 51.3 L204.3 52.6 L205.7 53.4 L206.9 54.1 L208.2 54.3 L209.4 53.8 L210.3 53.6 L211.1 54.2 L211.5 55.3 L213.2 55.5 L215.2 55.7 L216.5 56.0 L218.7 55.9 L220.2 55.9 L222.2 55.5 L223.2 56.5 L223.6 57.5 L224.5 57.8 L225.6 58.7 L226.9 58.5 L225.3 59.2 L227.0 61.1 L227.8 61.1 L229.0 60.6 L229.6 59.4 L229.9 60.5 L229.8 61.7 L229.9 63.2 L230.4 65.3 L230.8 67.1 L231.7 68.8 L232.4 70.7 L233.3 72.4 L233.9 74.1 L234.5 75.4 L235.5 76.2 L236.3 75.4 L237.4 74.8 L238.2 73.6 L238.2 71.8 L238.8 70.1 L238.6 68.6 L238.6 67.6 L239.4 67.1 L240.3 66.5 L241.2 66.0 L242.5 64.8 L244.2 63.2 L245.1 62.3 L246.6 61.5 L246.8 60.3 L248.0 60.0 L249.4 59.8 L251.0 59.1 L252.5 59.3 L253.0 60.9 L253.7 61.9 L254.7 62.9 L255.6 64.2 L255.8 65.9 L255.5 66.8 L256.8 67.1 L257.9 66.3 L258.7 65.6 L259.5 66.3 L259.7 68.0 L260.1 69.6 L260.7 71.2 L260.8 73.0 L260.3 74.9 L260.3 76.3 L261.1 77.2 L262.3 78.2 L262.8 79.6 L263.2 81.0 L263.9 82.4 L264.9 83.2 L266.4 84.2 L267.2 84.2 L267.3 83.0 L266.4 81.9 L266.4 80.7 L265.9 79.3 L264.9 78.5 L263.8 77.7 L262.9 77.2 L262.4 75.7 L261.5 74.8 L261.5 73.4 L262.2 71.8 L262.3 70.0 L263.4 69.9 L263.5 70.7 L265.1 71.3 L265.8 72.2 L266.6 73.2 L268.0 73.5 L268.0 75.5 L268.6 75.4 L270.1 74.4 L270.7 73.5 L272.1 72.8 L273.3 71.8 L273.4 70.4 L273.1 68.6 L272.6 67.3 L272.1 66.6 L271.0 65.7 L270.1 64.7 L269.2 63.4 L269.4 62.3 L270.3 61.2 L271.6 60.4 L272.6 60.0 L273.8 60.3 L274.1 61.6 L274.7 61.6 L274.7 60.5 L276.0 60.1 L277.6 59.8 L278.5 59.3 L279.5 59.2 L280.8 58.7 L282.1 58.1 L283.6 57.3 L284.6 56.3 L285.6 55.4 L285.9 54.3 L286.8 53.4 L288.0 51.9 L288.6 49.2 L288.4 48.2 L287.3 46.8 L286.5 45.4 L285.2 44.4 L285.6 43.6 L286.5 42.9 L288.6 42.0 L288.6 41.1 L287.1 40.9 L285.6 41.6 L284.9 41.1 L283.8 40.3 L283.4 39.4 L284.5 39.2 L285.5 38.5 L286.8 37.6 L288.6 37.3 L288.6 -2.3 L223.0 -2.3 L222.6 1.3 L222.4 3.1 L224.7 4.4 L221.8 3.9 L220.0 3.3 L215.8 2.9 L214.6 4.0 L211.0 4.2 L208.0 4.5 L206.9 3.8 L202.7 4.8 L198.5 5.1 L198.5 6.2 L195.9 6.7 L195.3 5.8 L195.8 4.4 L194.7 4.2 L195.3 6.9 L193.1 6.8 L191.3 7.5 L190.7 8.8 L188.4 8.7 L187.2 9.8 L184.8 9.3 L184.2 7.9 L182.4 6.6 L181.8 6.0 L184.2 6.6 L189.0 7.1 L191.3 6.8 L192.2 6.1 L191.3 5.1 L188.4 4.4 L184.8 3.5 L182.4 3.1 L180.0 2.7 Z M136.0 43.2 L136.7 43.1 L137.7 43.9 L139.5 43.8 L140.6 44.1 L142.3 43.4 L144.2 42.5 L146.6 42.0 L149.0 42.0 L152.0 41.8 L154.7 41.4 L156.2 41.8 L155.6 42.5 L155.7 43.5 L156.2 44.2 L155.1 45.0 L155.9 45.6 L156.7 46.3 L158.8 46.7 L161.2 47.3 L161.5 48.4 L163.9 49.1 L165.7 49.8 L166.9 48.9 L166.9 47.5 L168.7 46.7 L170.5 47.0 L172.9 48.2 L175.2 48.6 L177.6 49.1 L178.8 48.6 L180.0 48.4 L181.6 48.7 L181.8 50.1 L181.9 50.6 L183.0 52.5 L183.6 54.3 L184.8 56.7 L185.6 58.5 L187.0 59.7 L187.4 60.9 L187.4 62.5 L189.0 64.4 L190.2 67.3 L191.9 68.6 L193.7 70.4 L194.7 71.0 L194.7 72.1 L195.5 73.4 L196.7 73.4 L199.1 72.5 L201.5 72.4 L204.1 71.7 L204.0 73.4 L203.6 74.6 L202.7 76.3 L201.5 78.1 L200.3 80.5 L198.5 82.5 L197.1 83.5 L195.5 84.7 L193.7 86.3 L192.5 87.9 L191.1 89.0 L190.7 90.0 L190.4 90.8 L189.8 91.8 L189.3 93.4 L189.9 94.0 L190.2 95.4 L190.3 97.2 L191.2 98.4 L191.5 100.2 L191.5 102.5 L191.7 103.7 L190.7 105.2 L189.6 106.1 L187.2 107.2 L187.0 108.3 L185.4 109.1 L184.5 109.5 L184.4 110.6 L185.1 112.1 L185.4 114.2 L185.3 114.9 L183.0 115.9 L181.9 116.7 L182.3 117.8 L181.9 119.8 L181.0 120.4 L180.0 121.5 L179.1 122.8 L177.6 124.3 L176.4 125.2 L174.6 126.1 L173.6 126.4 L171.1 126.5 L169.3 126.6 L166.9 127.3 L165.5 126.7 L165.0 126.7 L164.9 125.2 L164.5 124.6 L164.9 123.4 L163.7 121.6 L162.7 119.9 L161.6 118.6 L160.9 117.2 L160.7 115.6 L160.3 113.3 L159.1 110.9 L157.9 108.5 L157.1 106.5 L157.1 104.9 L157.7 103.1 L159.0 100.8 L159.5 99.0 L158.8 96.6 L158.3 94.2 L157.7 93.0 L157.3 91.8 L156.4 90.6 L155.0 89.2 L154.1 88.0 L153.5 86.7 L154.4 85.5 L154.5 84.4 L154.7 83.1 L154.6 81.8 L154.4 81.1 L153.2 80.4 L151.4 80.6 L150.2 80.7 L149.0 79.1 L148.2 78.4 L147.1 78.2 L145.4 78.4 L144.5 78.6 L143.0 79.2 L141.0 80.2 L139.5 79.8 L138.3 79.6 L135.9 80.2 L134.1 80.6 L132.3 79.9 L130.1 78.4 L128.7 77.2 L127.3 75.7 L126.7 74.6 L125.5 73.0 L125.0 72.5 L123.9 71.6 L123.1 71.1 L123.0 69.8 L122.8 68.8 L122.2 68.4 L123.3 66.8 L123.6 64.4 L123.7 62.6 L122.8 60.9 L123.3 59.1 L123.9 57.6 L125.4 55.5 L125.7 54.7 L127.0 53.1 L127.6 52.6 L129.9 51.6 L131.1 50.7 L131.5 49.5 L131.3 48.4 L132.1 47.0 L132.9 46.2 L134.0 45.9 L134.9 45.3 L135.5 44.2 Z M201.8 100.2 L202.9 102.5 L203.3 104.3 L202.4 105.5 L202.0 107.3 L200.9 110.9 L199.8 113.9 L199.1 115.6 L197.0 116.4 L195.5 115.6 L194.9 113.9 L194.7 112.1 L195.9 110.3 L195.9 108.5 L195.5 106.7 L196.1 105.2 L198.3 104.7 L200.1 103.5 L200.6 101.9 Z M50.8 75.6 L51.4 76.3 L52.4 74.8 L53.0 73.4 L53.8 72.6 L55.9 72.3 L57.1 71.3 L58.0 71.1 L58.0 72.2 L57.4 72.8 L57.7 73.0 L59.3 72.2 L59.5 71.3 L60.0 72.2 L61.6 72.8 L61.9 73.4 L64.3 73.2 L65.5 73.8 L66.7 73.2 L69.1 73.1 L68.1 73.5 L69.2 74.1 L70.3 74.8 L70.9 75.7 L71.7 76.1 L73.2 77.3 L74.8 78.7 L76.8 78.8 L78.6 79.0 L80.4 79.8 L81.4 80.6 L82.2 81.3 L82.8 83.5 L83.4 84.7 L83.4 85.9 L85.2 86.2 L85.8 86.7 L87.0 86.7 L88.8 87.5 L90.2 88.8 L91.7 88.7 L93.5 89.3 L95.3 89.2 L97.1 90.3 L98.5 91.5 L100.1 91.9 L101.0 92.4 L101.5 94.3 L101.4 95.5 L100.7 97.2 L99.5 98.4 L98.5 99.6 L97.1 101.4 L96.5 103.5 L96.5 105.5 L96.1 107.3 L95.6 109.2 L95.0 110.0 L94.1 111.8 L93.0 113.1 L91.5 113.3 L89.7 113.6 L87.8 114.5 L86.0 115.6 L85.1 116.7 L85.1 118.0 L84.9 119.8 L83.7 120.8 L83.0 122.2 L82.0 123.4 L80.9 124.2 L79.3 126.0 L78.6 127.0 L77.4 127.4 L76.0 127.4 L74.1 126.8 L73.4 126.5 L73.4 127.1 L74.8 128.1 L74.7 129.1 L75.4 129.8 L74.3 131.1 L72.6 132.0 L70.3 132.3 L69.0 132.2 L68.8 134.1 L66.9 134.8 L65.5 134.5 L65.4 135.9 L67.2 136.7 L65.5 137.3 L65.1 139.2 L63.3 139.8 L62.5 140.7 L63.7 141.8 L64.5 142.9 L62.5 144.6 L61.3 145.7 L60.6 147.2 L61.4 148.2 L61.2 148.6 L62.2 149.9 L63.7 150.8 L65.3 151.0 L63.7 151.5 L61.3 151.8 L59.5 151.7 L57.7 150.8 L55.9 149.6 L54.2 148.4 L53.2 146.0 L53.0 143.6 L54.2 142.4 L53.0 141.5 L54.8 140.1 L55.4 138.3 L55.9 136.5 L54.8 136.5 L55.0 135.3 L55.2 133.5 L55.6 131.7 L55.2 130.2 L55.9 129.3 L56.5 127.9 L57.5 125.8 L57.6 123.4 L57.9 121.6 L57.7 119.8 L58.6 117.4 L58.9 115.0 L59.0 113.9 L59.3 111.5 L59.3 109.7 L59.2 107.8 L57.9 106.7 L56.2 105.8 L54.2 104.7 L52.6 103.4 L52.0 102.4 L51.1 100.3 L50.0 98.3 L49.1 96.6 L48.2 94.9 L47.6 93.7 L46.2 93.0 L46.0 91.5 L47.0 90.2 L47.6 89.7 L47.8 88.8 L46.5 88.6 L46.6 87.1 L47.5 85.9 L47.6 84.9 L48.9 84.3 L49.0 83.7 L49.6 82.9 L50.6 82.7 L50.9 81.3 L50.6 80.2 L50.8 79.1 L50.6 77.9 L50.1 77.3 L49.7 76.0 L48.2 75.2 L47.6 76.0 L47.1 77.2 L45.6 76.9 L44.1 76.2 L43.2 75.6 L41.8 74.2 L40.8 74.0 L40.7 72.6 L38.7 71.0 L38.4 70.3 L35.7 69.7 L32.9 68.6 L30.3 66.6 L27.9 67.2 L23.9 65.9 L21.1 64.4 L18.6 63.1 L16.9 61.6 L17.2 60.3 L16.1 58.2 L14.8 57.3 L12.5 55.4 L11.2 53.1 L8.8 50.7 L6.1 48.0 L6.2 50.1 L8.2 52.5 L10.0 54.9 L11.5 57.0 L11.9 58.6 L11.2 57.9 L9.4 56.3 L9.1 54.9 L7.0 53.5 L5.8 52.5 L6.4 51.3 L4.9 49.7 L3.8 48.0 L3.3 47.2 L2.0 45.4 L-0.1 44.8 L-2.5 44.2 L-2.5 -2.3 L29.7 -2.3 L29.7 0.4 L33.3 1.9 L35.7 3.9 L38.7 4.6 L41.0 3.0 L44.6 3.0 L45.8 4.3 L45.8 6.1 L43.4 7.0 L40.4 6.9 L39.2 8.1 L38.1 9.6 L34.8 10.2 L33.3 11.2 L31.5 12.6 L29.9 14.4 L30.3 15.8 L32.1 16.2 L32.7 17.9 L35.7 18.0 L38.7 19.2 L41.6 20.0 L44.9 20.1 L44.9 21.6 L45.2 23.3 L46.8 24.8 L48.2 24.7 L49.0 23.7 L48.8 22.2 L48.2 20.7 L50.0 20.4 L51.7 18.8 L51.2 17.4 L50.0 16.0 L50.6 14.4 L49.6 13.2 L50.2 11.4 L53.0 11.7 L55.9 11.8 L57.7 12.9 L60.1 13.5 L59.8 15.2 L61.3 16.6 L63.1 16.2 L64.9 15.0 L66.0 14.1 L67.3 15.2 L69.1 16.8 L69.7 18.3 L72.1 20.0 L73.2 21.2 L74.7 21.0 L76.5 22.2 L76.6 23.3 L75.3 24.5 L73.2 24.8 L71.5 26.0 L67.9 26.0 L63.8 26.1 L63.1 26.9 L60.1 28.5 L58.1 30.1 L59.5 29.5 L61.9 28.0 L64.3 27.3 L66.4 27.7 L65.5 28.7 L65.7 29.7 L66.1 30.7 L67.9 31.3 L69.7 31.1 L70.9 29.9 L71.5 31.1 L70.3 31.9 L67.3 32.8 L65.5 33.9 L64.2 33.7 L66.1 31.4 L64.3 32.0 L63.1 32.5 L60.7 33.5 L58.9 34.2 L58.7 35.3 L59.5 36.2 L58.3 36.4 L57.1 37.0 L54.8 37.6 L53.3 40.0 L52.0 40.6 L52.4 41.9 L53.0 43.8 L51.8 44.5 L50.1 45.4 L48.9 45.7 L47.8 46.8 L46.5 47.8 L45.9 48.9 L46.0 50.1 L46.9 52.0 L47.5 53.7 L47.5 54.9 L47.1 55.9 L46.4 56.0 L46.0 55.3 L45.2 54.3 L44.3 52.8 L44.0 51.2 L42.8 50.0 L41.3 50.5 L39.8 49.7 L38.1 49.8 L36.1 49.9 L36.4 51.2 L35.1 51.1 L33.3 50.6 L31.1 50.5 L29.7 51.1 L27.9 52.0 L26.8 53.1 L27.1 55.0 L26.5 57.3 L26.4 59.3 L27.1 61.1 L28.3 62.9 L28.7 63.5 L30.3 64.2 L32.3 63.8 L33.9 63.8 L34.8 62.3 L35.2 60.9 L36.9 60.5 L38.7 60.3 L39.5 60.6 L38.7 62.6 L37.9 63.8 L37.7 65.6 L37.0 66.9 L37.3 67.1 L38.4 66.9 L40.4 66.9 L42.2 67.1 L43.8 68.0 L43.5 68.8 L43.1 71.0 L43.3 72.9 L44.0 74.0 L45.0 74.9 L46.2 75.4 L48.1 74.4 Z M72.3 29.2 L73.2 28.1 L73.8 26.9 L75.0 25.4 L76.7 24.5 L76.5 25.7 L75.6 26.6 L76.8 26.6 L78.6 27.0 L79.2 28.0 L80.2 29.2 L79.6 30.4 L78.6 29.9 L77.4 30.0 L76.2 29.3 L74.4 29.2 Z M41.8 59.8 L44.0 58.6 L46.4 58.4 L48.8 59.2 L51.2 60.6 L53.0 61.2 L54.5 61.8 L53.0 62.2 L50.5 62.2 L50.8 61.3 L49.4 60.9 L47.0 59.8 L45.2 59.3 L43.4 59.5 Z M54.3 63.8 L55.6 62.2 L57.5 62.3 L59.6 62.5 L61.4 63.7 L60.0 64.1 L58.3 64.3 L57.5 64.8 L56.2 64.2 Z M49.6 64.0 L51.2 63.8 L52.1 64.4 L50.9 64.7 Z M62.9 63.8 L64.8 64.0 L64.7 64.4 L62.9 64.4 Z M136.2 26.2 L138.9 26.0 L141.2 25.5 L144.7 24.9 L143.9 24.5 L145.1 23.2 L143.4 22.7 L143.2 22.0 L141.6 20.8 L141.1 19.8 L140.5 19.2 L139.5 19.2 L140.5 17.9 L140.9 17.3 L138.9 17.1 L138.3 17.3 L139.3 16.1 L137.1 16.1 L136.1 17.4 L136.4 18.6 L136.5 19.8 L137.3 19.7 L137.1 20.6 L138.9 20.5 L139.3 21.7 L139.5 22.3 L137.7 22.4 L138.0 23.0 L138.1 23.6 L136.8 24.1 L138.0 24.4 L139.5 24.7 L139.2 24.9 L137.9 25.0 Z M131.1 24.4 L133.1 24.3 L135.5 23.7 L135.8 22.4 L136.4 20.8 L135.6 20.1 L134.1 20.0 L132.9 20.8 L131.1 21.3 L132.1 22.5 L130.7 23.7 Z M114.4 7.9 L116.8 6.8 L121.6 7.0 L125.1 7.0 L126.8 8.5 L125.1 9.3 L121.0 10.4 L116.2 9.8 L116.8 9.1 L114.4 8.7 Z M157.8 40.6 L158.9 40.4 L161.6 40.3 L161.0 42.2 L157.9 41.1 Z M152.8 37.0 L154.5 37.0 L154.6 39.2 L153.1 39.4 Z M153.3 35.1 L154.4 34.7 L154.2 36.4 L153.4 36.1 Z M171.1 43.5 L174.4 43.8 L174.3 44.2 L171.2 43.9 Z M181.6 44.2 L182.4 43.7 L184.3 43.4 L183.5 44.2 L182.4 44.7 Z M238.2 74.3 L238.7 74.2 L240.0 75.7 L240.6 77.5 L239.7 78.6 L238.6 78.7 L238.2 76.9 Z M272.7 63.0 L274.8 62.0 L274.8 63.5 L273.7 64.2 Z M256.7 79.2 L259.3 79.7 L260.8 81.3 L262.7 82.9 L264.1 83.5 L266.3 85.3 L266.9 87.1 L267.7 88.1 L269.5 89.4 L269.2 92.8 L267.7 92.7 L265.1 90.6 L263.5 88.8 L262.7 86.8 L261.1 85.3 L260.8 83.8 L259.0 82.1 L257.6 80.7 Z M268.5 94.0 L269.6 92.9 L272.5 93.6 L275.2 93.5 L277.5 94.1 L279.6 95.0 L279.5 96.1 L275.4 95.8 L272.5 95.2 L270.0 94.7 Z M273.1 84.1 L274.6 83.8 L275.8 82.9 L277.8 82.1 L279.0 80.4 L280.8 79.3 L282.4 77.5 L283.8 78.7 L285.0 79.7 L283.8 80.7 L283.4 82.3 L283.8 83.5 L285.0 84.7 L283.2 85.3 L283.2 87.1 L282.0 88.3 L281.6 90.0 L279.7 90.6 L277.8 89.7 L276.4 89.9 L274.5 89.3 L274.3 87.7 L273.3 86.5 L273.1 85.3 Z M285.6 92.4 L285.7 90.0 L284.9 89.1 L285.3 87.7 L285.9 85.9 L286.2 85.0 L288.6 85.0 L288.6 92.4 Z M282.8 75.9 L285.6 73.4 L285.8 73.7 L283.2 76.1 Z M288.6 107.3 L286.2 109.6 L284.5 110.0 L282.6 110.5 L281.4 110.8 L279.7 111.8 L278.5 112.8 L278.4 115.0 L278.1 116.8 L279.3 118.6 L279.7 120.2 L280.3 122.2 L281.1 124.0 L280.2 125.9 L280.3 126.7 L282.0 127.6 L283.8 127.6 L286.2 126.2 L288.6 126.2 Z M70.0 147.6 L72.1 147.0 L74.1 147.3 L72.9 148.2 L70.9 148.0 Z M47.6 -2.3 L51.2 -0.6 L54.8 0.6 L59.5 1.8 L61.9 3.0 L63.7 4.6 L69.1 6.3 L67.3 8.5 L64.9 8.9 L65.5 10.6 L63.7 11.4 L61.9 11.7 L59.5 11.1 L57.1 10.1 L54.2 9.1 L50.6 9.2 L50.0 7.9 L54.8 7.9 L55.4 6.7 L56.2 5.1 L52.4 4.5 L49.4 2.7 L45.2 2.5 L41.6 2.3 L36.9 1.9 L35.7 0.1 L35.7 -2.3 Z M39.2 9.6 L41.6 7.5 L44.0 8.2 L47.0 9.6 L45.2 10.2 L41.6 10.6 Z M204.5 0.4 L206.3 1.5 L209.8 1.8 L211.6 0.7 L209.8 -1.1 L212.2 -2.3 L205.1 -2.3 Z" fill="none" stroke="#4884c8" stroke-width="1.1" stroke-linejoin="round" filter="url(#b0)" opacity="0.45"/><g clip-path="url(#landclip)"><rect width="286.3" height="171.5" fill="#55672b"/><g filter="url(#b1)"><path d="M122.2 67.6 L122.2 52.5 L131.1 49.5 L135.9 46.6 L143.0 45.0 L152.6 44.8 L156.2 47.8 L166.9 48.4 L172.9 47.0 L182.4 48.2 L184.8 48.9 L187.2 59.7 L190.7 68.0 L194.9 72.4 L188.4 71.6 L186.0 68.8 L172.9 69.4 L160.9 68.8 L149.0 68.0 L137.1 67.5 Z" fill="#d3b58a"/><path d="M183.6 47.8 L186.0 42.6 L190.7 42.4 L196.7 43.0 L200.3 45.4 L205.1 47.8 L212.2 50.1 L217.0 53.1 L214.6 56.7 L211.0 60.3 L214.6 59.7 L208.6 66.2 L196.7 71.2 L194.3 70.4 L189.6 60.9 L184.8 52.5 Z" fill="#cfae80"/><path d="M195.5 42.4 L199.1 39.4 L206.3 37.0 L205.1 32.3 L212.2 30.5 L224.1 31.1 L236.1 31.7 L248.0 31.1 L257.6 33.5 L269.5 33.5 L275.4 37.0 L271.9 41.2 L263.5 42.4 L257.6 50.1 L248.0 52.2 L238.5 49.8 L233.7 46.6 L230.1 46.0 L232.5 52.5 L230.1 57.3 L224.1 58.1 L217.0 56.3 L214.6 52.5 L207.4 49.5 L200.3 45.4 Z" fill="#b8a074"/><path d="M194.3 72.2 L204.6 71.3 L202.1 79.9 L196.1 85.9 L192.5 89.4 L190.2 91.2 L187.8 87.1 L186.6 81.1 L191.3 77.5 L193.1 74.0 Z" fill="#c09a66"/></g><g filter="url(#b2)"><ellipse cx="69.1" cy="90.6" rx="14.3" ry="10.7" fill="#37521b" opacity="0.97"/><ellipse cx="77.4" cy="82.3" rx="7.2" ry="3.6" fill="#3c561c" opacity="0.9"/><ellipse cx="55.9" cy="83.5" rx="6.0" ry="7.1" fill="#3e5a1c" opacity="0.85"/><ellipse cx="166.9" cy="85.9" rx="11.9" ry="7.1" fill="#35501c" opacity="0.97"/><ellipse cx="157.3" cy="87.1" rx="3.6" ry="4.8" fill="#35501c" opacity="0.9"/><ellipse cx="155.0" cy="26.3" rx="14.3" ry="4.8" fill="#48602a" opacity="0.6"/><ellipse cx="133.5" cy="77.5" rx="6.0" ry="2.4" fill="#46601f" opacity="0.8"/><ellipse cx="149.0" cy="78.1" rx="7.2" ry="1.8" fill="#4a6223" opacity="0.7"/><ellipse cx="38.1" cy="66.8" rx="4.8" ry="3.0" fill="#47601f" opacity="0.8"/><ellipse cx="53.6" cy="26.3" rx="14.3" ry="7.1" fill="#46592a" opacity="0.9"/><ellipse cx="23.7" cy="19.2" rx="23.9" ry="10.7" fill="#465828" opacity="0.9"/><ellipse cx="196.7" cy="16.8" rx="35.8" ry="8.3" fill="#495c2a" opacity="0.9"/><ellipse cx="256.4" cy="16.8" rx="29.8" ry="9.5" fill="#465a28" opacity="0.9"/><ellipse cx="164.5" cy="10.8" rx="11.9" ry="7.1" fill="#485a2c" opacity="0.8"/><ellipse cx="262.3" cy="64.4" rx="7.2" ry="9.5" fill="#4c6428" opacity="0.8"/><ellipse cx="276.6" cy="52.5" rx="9.5" ry="6.0" fill="#566a30" opacity="0.8"/><ellipse cx="264.7" cy="85.9" rx="4.8" ry="6.0" fill="#3f5a20" opacity="0.9"/><ellipse cx="279.0" cy="85.9" rx="4.8" ry="4.8" fill="#3f5a20" opacity="0.9"/><ellipse cx="57.1" cy="135.9" rx="1.8" ry="9.5" fill="#4a6028" opacity="0.8"/><ellipse cx="171.7" cy="54.9" rx="9.5" ry="5.4" fill="#dcc096" opacity="0.9"/><ellipse cx="133.5" cy="57.3" rx="7.2" ry="4.8" fill="#d8ba8e" opacity="0.8"/><ellipse cx="152.6" cy="53.7" rx="9.5" ry="3.6" fill="#d6b88c" opacity="0.7"/><ellipse cx="163.3" cy="60.9" rx="3.6" ry="2.4" fill="#a88a60" opacity="0.6"/><ellipse cx="150.2" cy="57.9" rx="3.6" ry="2.1" fill="#b09068" opacity="0.5"/><ellipse cx="153.8" cy="64.4" rx="3.6" ry="1.8" fill="#b09068" opacity="0.5"/><ellipse cx="171.7" cy="62.0" rx="2.4" ry="2.4" fill="#b8986c" opacity="0.5"/><ellipse cx="135.9" cy="47.2" rx="4.8" ry="1.8" fill="#b09a6c" opacity="0.9"/><ellipse cx="146.6" cy="43.8" rx="6.0" ry="1.2" fill="#a8966a" opacity="0.9"/><ellipse cx="153.8" cy="43.6" rx="1.8" ry="1.8" fill="#a8966a" opacity="0.8"/><ellipse cx="155.0" cy="70.0" rx="29.8" ry="1.4" fill="#8f8748" opacity="0.8"/><ellipse cx="128.7" cy="69.2" rx="4.8" ry="1.4" fill="#8f8748" opacity="0.8"/><ellipse cx="182.4" cy="71.0" rx="4.8" ry="1.8" fill="#8a8446" opacity="0.8"/><ellipse cx="202.7" cy="62.0" rx="6.0" ry="3.6" fill="#d6ac72" opacity="0.8"/><ellipse cx="197.9" cy="56.1" rx="6.0" ry="3.6" fill="#d4b484" opacity="0.7"/><ellipse cx="208.6" cy="47.8" rx="6.0" ry="3.6" fill="#b8a076" opacity="0.7"/><ellipse cx="218.2" cy="50.1" rx="4.8" ry="3.6" fill="#b09870" opacity="0.6"/><ellipse cx="243.2" cy="39.4" rx="8.4" ry="2.6" fill="#ccb488" opacity="0.9"/><ellipse cx="248.0" cy="47.2" rx="10.7" ry="3.6" fill="#ad986e" opacity="0.9"/><ellipse cx="226.5" cy="44.2" rx="4.8" ry="3.0" fill="#a8946e" opacity="0.8"/><ellipse cx="228.9" cy="54.3" rx="3.0" ry="3.0" fill="#c8aa78" opacity="0.8"/><ellipse cx="182.4" cy="39.4" rx="8.4" ry="2.6" fill="#a8946a" opacity="0.95"/><ellipse cx="191.9" cy="39.4" rx="4.8" ry="2.1" fill="#9a8c60" opacity="0.9"/><ellipse cx="169.3" cy="39.4" rx="2.4" ry="3.0" fill="#807c48" opacity="0.7"/><ellipse cx="160.9" cy="38.2" rx="2.4" ry="3.0" fill="#7c7a44" opacity="0.6"/><ellipse cx="200.3" cy="41.8" rx="2.4" ry="1.8" fill="#8a8452" opacity="0.6"/><ellipse cx="221.8" cy="27.5" rx="19.1" ry="3.0" fill="#6e7238" opacity="0.8"/><ellipse cx="226.5" cy="33.5" rx="9.5" ry="2.4" fill="#a8966a" opacity="0.6"/><ellipse cx="186.0" cy="45.4" rx="1.4" ry="3.0" fill="#8a8450" opacity="0.7"/><ellipse cx="205.1" cy="42.6" rx="3.0" ry="0.8" fill="#5f6c30" opacity="0.8"/><ellipse cx="232.5" cy="46.0" rx="3.0" ry="1.8" fill="#6a7038" opacity="0.6"/><ellipse cx="236.1" cy="63.2" rx="6.0" ry="7.1" fill="#7f7844" opacity="0.9"/><ellipse cx="233.7" cy="56.1" rx="4.8" ry="3.6" fill="#8f8450" opacity="0.8"/><ellipse cx="197.9" cy="78.7" rx="6.0" ry="6.0" fill="#b2925f" opacity="0.95"/><ellipse cx="193.1" cy="73.4" rx="3.6" ry="2.1" fill="#a88c5c" opacity="0.9"/><ellipse cx="189.6" cy="83.5" rx="3.6" ry="4.8" fill="#9b8652" opacity="0.9"/><ellipse cx="186.0" cy="91.8" rx="3.6" ry="4.8" fill="#7f7a42" opacity="0.8"/><ellipse cx="188.4" cy="75.2" rx="3.6" ry="4.2" fill="#6f6c36" opacity="0.8"/><ellipse cx="184.8" cy="102.5" rx="6.0" ry="7.1" fill="#6f7238" opacity="0.7"/><ellipse cx="164.5" cy="113.3" rx="7.2" ry="9.5" fill="#b8986a" opacity="0.98"/><ellipse cx="170.5" cy="115.6" rx="7.2" ry="7.1" fill="#b29266" opacity="0.95"/><ellipse cx="169.3" cy="122.8" rx="6.0" ry="3.6" fill="#a88c60" opacity="0.95"/><ellipse cx="160.9" cy="102.5" rx="4.2" ry="6.0" fill="#a08a58" opacity="0.85"/><ellipse cx="176.4" cy="118.0" rx="4.8" ry="6.0" fill="#98844e" opacity="0.85"/><ellipse cx="175.2" cy="108.5" rx="6.0" ry="4.8" fill="#8f8248" opacity="0.8"/><ellipse cx="168.1" cy="101.4" rx="8.4" ry="4.8" fill="#747438" opacity="0.8"/><ellipse cx="182.4" cy="109.7" rx="3.6" ry="6.0" fill="#858044" opacity="0.7"/><ellipse cx="186.0" cy="101.4" rx="4.8" ry="4.8" fill="#78783c" opacity="0.6"/><ellipse cx="196.7" cy="110.9" rx="1.9" ry="5.4" fill="#9a7c4c" opacity="0.85"/><ellipse cx="138.3" cy="38.2" rx="5.4" ry="3.6" fill="#a8986a" opacity="0.9"/><ellipse cx="155.0" cy="30.5" rx="4.2" ry="1.1" fill="#b9b9a8" opacity="0.7"/><ellipse cx="176.4" cy="28.7" rx="11.9" ry="3.6" fill="#66703a" opacity="0.7"/><ellipse cx="202.7" cy="26.3" rx="14.3" ry="3.6" fill="#7a7a44" opacity="0.7"/><ellipse cx="17.8" cy="43.0" rx="11.9" ry="8.3" fill="#9a8a5c" opacity="0.9"/><ellipse cx="11.8" cy="52.5" rx="6.0" ry="6.0" fill="#a89464" opacity="0.9"/><ellipse cx="21.4" cy="57.3" rx="4.8" ry="4.8" fill="#958a58" opacity="0.8"/><ellipse cx="23.7" cy="31.1" rx="7.2" ry="6.0" fill="#72743e" opacity="0.7"/><ellipse cx="44.0" cy="43.0" rx="7.2" ry="6.0" fill="#50662a" opacity="0.7"/><ellipse cx="94.1" cy="96.6" rx="6.0" ry="7.1" fill="#8a7c46" opacity="0.9"/><ellipse cx="87.0" cy="104.9" rx="8.4" ry="8.3" fill="#7c7640" opacity="0.85"/><ellipse cx="81.0" cy="116.8" rx="4.8" ry="6.0" fill="#6f7038" opacity="0.7"/><ellipse cx="75.0" cy="122.8" rx="4.8" ry="4.8" fill="#7f7a44" opacity="0.7"/><ellipse cx="60.7" cy="109.7" rx="2.6" ry="10.7" fill="#a38c5e" opacity="0.95"/><ellipse cx="61.9" cy="121.6" rx="2.6" ry="7.1" fill="#a08a5a" opacity="0.9"/><ellipse cx="60.7" cy="139.5" rx="4.3" ry="10.7" fill="#a08c5c" opacity="0.97"/><ellipse cx="63.1" cy="128.7" rx="4.2" ry="6.0" fill="#94844f" opacity="0.9"/><ellipse cx="65.5" cy="121.6" rx="3.6" ry="4.8" fill="#8a8048" opacity="0.7"/><ellipse cx="71.5" cy="127.6" rx="4.8" ry="4.8" fill="#70763a" opacity="0.8"/><ellipse cx="70.3" cy="114.5" rx="4.8" ry="4.8" fill="#5b6a2c" opacity="0.8"/><ellipse cx="51.2" cy="96.6" rx="2.4" ry="7.1" fill="#8f8250" opacity="0.8"/><ellipse cx="48.8" cy="91.2" rx="1.8" ry="2.1" fill="#a08a58" opacity="0.7"/><ellipse cx="66.7" cy="78.7" rx="4.8" ry="3.0" fill="#6d7234" opacity="0.6"/><ellipse cx="57.1" cy="72.8" rx="2.4" ry="1.2" fill="#a89060" opacity="0.7"/><ellipse cx="283.8" cy="116.8" rx="7.2" ry="9.5" fill="#b0723f" opacity="0.95"/></g><g filter="url(#b0)"><path d="M231.3 42.4 L236.1 45.4 L240.8 49.5 L245.6 52.2 L250.4 52.5 L256.4 51.3" fill="none" stroke="#e8e8e8" stroke-width="0.9" stroke-linecap="round" stroke-linejoin="round" opacity="0.45"/><path d="M150.8 32.0 L152.6 30.8 L155.6 30.1 L158.5 29.7" fill="none" stroke="#e0e0e0" stroke-width="0.7" stroke-linecap="round" stroke-linejoin="round" opacity="0.4"/><path d="M55.7 141.8 L55.5 146.0" fill="none" stroke="#f4f4f4" stroke-width="1.6" stroke-linecap="round" stroke-linejoin="round" opacity="0.95"/><path d="M59.5 125.2 L59.2 128.7" fill="none" stroke="#e0e0e0" stroke-width="0.8" stroke-linecap="round" stroke-linejoin="round" opacity="0.6"/><path d="M193.1 34.4 L197.9 35.1" fill="none" stroke="#e0e0e0" stroke-width="0.8" stroke-linecap="round" stroke-linejoin="round" opacity="0.6"/><path d="M226.5 40.0 L231.3 40.6" fill="none" stroke="#e0e0e0" stroke-width="1.0" stroke-linecap="round" stroke-linejoin="round" opacity="0.6"/></g></g><path d="M180.0 2.1 L176.4 1.2 L173.7 1.2 L170.5 1.8 L166.9 2.5 L163.9 3.5 L160.9 4.6 L158.5 6.7 L156.7 8.5 L155.0 9.9 L152.6 10.6 L149.6 11.8 L149.0 13.2 L149.2 15.0 L149.8 16.0 L151.4 16.8 L153.2 16.6 L154.7 15.6 L155.7 14.9 L156.4 15.6 L156.5 16.4 L157.2 17.3 L158.1 18.7 L158.4 19.8 L160.0 19.9 L160.4 19.1 L162.1 18.9 L162.8 17.4 L163.1 16.2 L164.5 15.4 L165.6 14.4 L163.7 13.6 L163.5 12.0 L165.1 10.8 L167.5 9.9 L168.7 8.7 L169.5 7.6 L171.7 7.5 L173.2 8.5 L172.3 9.3 L169.9 10.6 L168.4 11.7 L168.6 13.2 L169.5 14.1 L170.5 14.5 L172.9 14.2 L175.8 13.8 L177.6 14.3 L179.1 14.5 L176.7 14.9 L174.0 14.9 L172.3 15.1 L171.1 15.5 L171.2 16.2 L172.1 16.4 L172.0 17.6 L171.2 18.0 L170.0 17.1 L168.8 17.4 L168.1 18.2 L168.1 19.8 L166.9 20.5 L166.4 21.1 L165.2 21.0 L164.9 20.6 L162.7 21.0 L160.1 21.7 L159.1 21.1 L157.7 21.2 L156.2 21.6 L155.9 21.2 L155.0 21.0 L154.8 20.1 L155.6 19.8 L155.2 18.9 L156.0 18.7 L155.3 18.1 L155.7 17.1 L154.4 17.7 L152.9 18.0 L152.7 19.2 L152.8 19.9 L153.4 20.6 L153.6 21.6 L153.2 22.0 L151.4 22.0 L150.2 22.3 L148.8 22.7 L148.2 23.8 L147.2 24.7 L146.0 25.0 L144.9 25.2 L144.8 26.1 L143.3 26.8 L141.6 27.0 L141.5 26.7 L140.8 26.7 L141.1 27.9 L139.7 28.0 L137.5 28.0 L137.4 28.7 L139.5 29.2 L140.4 29.7 L141.6 31.0 L141.7 31.7 L141.5 32.9 L141.0 34.2 L138.5 34.1 L136.1 33.9 L133.5 33.8 L132.1 34.5 L132.5 35.6 L132.7 37.0 L132.4 38.2 L131.8 39.7 L132.5 40.1 L132.5 40.7 L132.3 41.8 L133.6 41.8 L134.4 41.6 L135.4 42.2 L136.4 43.0 L137.8 42.2 L140.4 42.0 L141.1 41.3 L142.2 41.1 L142.9 39.8 L142.7 38.8 L143.9 37.3 L144.2 36.9 L145.7 36.6 L146.8 35.5 L146.7 34.5 L147.8 34.1 L149.5 34.3 L150.9 34.4 L152.0 33.7 L153.6 33.0 L155.1 33.5 L155.6 34.7 L156.4 35.4 L157.6 36.1 L159.3 36.7 L160.1 37.3 L160.9 38.0 L161.8 38.2 L162.2 39.4 L161.8 40.6 L162.7 40.1 L163.4 39.4 L162.7 38.6 L163.3 37.6 L164.6 38.3 L165.1 38.0 L164.3 37.4 L162.8 36.8 L162.0 36.0 L160.7 35.7 L159.3 34.1 L157.8 33.2 L157.7 31.9 L159.1 31.4 L159.3 32.3 L160.1 31.9 L161.0 33.1 L162.6 34.1 L164.0 34.8 L165.1 35.4 L166.2 36.1 L166.2 37.8 L166.9 38.6 L168.2 40.1 L168.4 41.0 L168.9 42.0 L169.8 42.4 L170.6 42.4 L170.3 41.3 L171.5 41.0 L171.8 40.6 L170.7 39.8 L170.2 38.8 L170.2 37.8 L171.3 38.2 L172.0 37.4 L173.5 37.2 L174.2 37.5 L174.4 38.1 L174.9 37.8 L174.3 38.8 L175.0 39.8 L174.4 40.4 L175.5 41.0 L175.6 41.8 L176.7 42.2 L177.9 42.6 L179.3 42.6 L179.7 41.9 L181.2 42.4 L182.2 43.0 L183.4 42.8 L184.4 42.0 L185.5 42.3 L186.2 42.2 L185.9 43.1 L185.9 44.5 L185.4 45.5 L184.9 46.4 L184.7 47.4 L184.2 48.4 L183.8 48.6 L182.6 48.8 L181.6 48.7 L181.8 50.1 L182.0 50.7 L182.6 51.9 L183.8 52.8 L184.3 51.9 L184.7 50.7 L184.8 52.4 L185.5 53.4 L186.6 54.9 L187.4 56.3 L188.5 57.3 L189.6 59.1 L189.8 60.4 L191.0 61.8 L191.9 63.2 L193.1 65.0 L194.0 66.5 L194.2 68.1 L194.7 70.0 L194.9 70.7 L196.7 70.6 L198.7 69.9 L201.1 69.2 L201.6 68.6 L203.3 67.9 L205.3 67.2 L205.4 66.5 L207.4 65.6 L209.0 64.9 L210.2 64.4 L211.0 63.4 L212.0 63.2 L211.9 61.8 L212.9 61.6 L214.4 59.2 L213.1 57.8 L211.3 57.4 L210.4 56.6 L210.2 54.7 L210.0 54.9 L209.7 55.4 L208.9 55.9 L207.9 56.8 L206.3 57.2 L204.8 57.3 L204.6 56.6 L204.6 55.0 L204.1 54.8 L203.6 55.6 L203.5 56.2 L202.9 55.6 L202.8 54.3 L202.1 53.5 L201.2 52.8 L200.8 51.7 L200.2 50.9 L200.4 50.3 L201.1 50.0 L202.3 49.9 L202.9 50.1 L203.6 51.3 L204.3 52.6 L205.7 53.4 L206.9 54.1 L208.2 54.3 L209.4 53.8 L210.3 53.6 L211.1 54.2 L211.5 55.3 L213.2 55.5 L215.2 55.7 L216.5 56.0 L218.7 55.9 L220.2 55.9 L222.2 55.5 L223.2 56.5 L223.6 57.5 L224.5 57.8 L225.6 58.7 L226.9 58.5 L225.3 59.2 L227.0 61.1 L227.8 61.1 L229.0 60.6 L229.6 59.4 L229.9 60.5 L229.8 61.7 L229.9 63.2 L230.4 65.3 L230.8 67.1 L231.7 68.8 L232.4 70.7 L233.3 72.4 L233.9 74.1 L234.5 75.4 L235.5 76.2 L236.3 75.4 L237.4 74.8 L238.2 73.6 L238.2 71.8 L238.8 70.1 L238.6 68.6 L238.6 67.6 L239.4 67.1 L240.3 66.5 L241.2 66.0 L242.5 64.8 L244.2 63.2 L245.1 62.3 L246.6 61.5 L246.8 60.3 L248.0 60.0 L249.4 59.8 L251.0 59.1 L252.5 59.3 L253.0 60.9 L253.7 61.9 L254.7 62.9 L255.6 64.2 L255.8 65.9 L255.5 66.8 L256.8 67.1 L257.9 66.3 L258.7 65.6 L259.5 66.3 L259.7 68.0 L260.1 69.6 L260.7 71.2 L260.8 73.0 L260.3 74.9 L260.3 76.3 L261.1 77.2 L262.3 78.2 L262.8 79.6 L263.2 81.0 L263.9 82.4 L264.9 83.2 L266.4 84.2 L267.2 84.2 L267.3 83.0 L266.4 81.9 L266.4 80.7 L265.9 79.3 L264.9 78.5 L263.8 77.7 L262.9 77.2 L262.4 75.7 L261.5 74.8 L261.5 73.4 L262.2 71.8 L262.3 70.0 L263.4 69.9 L263.5 70.7 L265.1 71.3 L265.8 72.2 L266.6 73.2 L268.0 73.5 L268.0 75.5 L268.6 75.4 L270.1 74.4 L270.7 73.5 L272.1 72.8 L273.3 71.8 L273.4 70.4 L273.1 68.6 L272.6 67.3 L272.1 66.6 L271.0 65.7 L270.1 64.7 L269.2 63.4 L269.4 62.3 L270.3 61.2 L271.6 60.4 L272.6 60.0 L273.8 60.3 L274.1 61.6 L274.7 61.6 L274.7 60.5 L276.0 60.1 L277.6 59.8 L278.5 59.3 L279.5 59.2 L280.8 58.7 L282.1 58.1 L283.6 57.3 L284.6 56.3 L285.6 55.4 L285.9 54.3 L286.8 53.4 L288.0 51.9 L288.6 49.2 L288.4 48.2 L287.3 46.8 L286.5 45.4 L285.2 44.4 L285.6 43.6 L286.5 42.9 L288.6 42.0 L288.6 41.1 L287.1 40.9 L285.6 41.6 L284.9 41.1 L283.8 40.3 L283.4 39.4 L284.5 39.2 L285.5 38.5 L286.8 37.6 L288.6 37.3 L288.6 -2.3 L223.0 -2.3 L222.6 1.3 L222.4 3.1 L224.7 4.4 L221.8 3.9 L220.0 3.3 L215.8 2.9 L214.6 4.0 L211.0 4.2 L208.0 4.5 L206.9 3.8 L202.7 4.8 L198.5 5.1 L198.5 6.2 L195.9 6.7 L195.3 5.8 L195.8 4.4 L194.7 4.2 L195.3 6.9 L193.1 6.8 L191.3 7.5 L190.7 8.8 L188.4 8.7 L187.2 9.8 L184.8 9.3 L184.2 7.9 L182.4 6.6 L181.8 6.0 L184.2 6.6 L189.0 7.1 L191.3 6.8 L192.2 6.1 L191.3 5.1 L188.4 4.4 L184.8 3.5 L182.4 3.1 L180.0 2.7 Z M136.0 43.2 L136.7 43.1 L137.7 43.9 L139.5 43.8 L140.6 44.1 L142.3 43.4 L144.2 42.5 L146.6 42.0 L149.0 42.0 L152.0 41.8 L154.7 41.4 L156.2 41.8 L155.6 42.5 L155.7 43.5 L156.2 44.2 L155.1 45.0 L155.9 45.6 L156.7 46.3 L158.8 46.7 L161.2 47.3 L161.5 48.4 L163.9 49.1 L165.7 49.8 L166.9 48.9 L166.9 47.5 L168.7 46.7 L170.5 47.0 L172.9 48.2 L175.2 48.6 L177.6 49.1 L178.8 48.6 L180.0 48.4 L181.6 48.7 L181.8 50.1 L181.9 50.6 L183.0 52.5 L183.6 54.3 L184.8 56.7 L185.6 58.5 L187.0 59.7 L187.4 60.9 L187.4 62.5 L189.0 64.4 L190.2 67.3 L191.9 68.6 L193.7 70.4 L194.7 71.0 L194.7 72.1 L195.5 73.4 L196.7 73.4 L199.1 72.5 L201.5 72.4 L204.1 71.7 L204.0 73.4 L203.6 74.6 L202.7 76.3 L201.5 78.1 L200.3 80.5 L198.5 82.5 L197.1 83.5 L195.5 84.7 L193.7 86.3 L192.5 87.9 L191.1 89.0 L190.7 90.0 L190.4 90.8 L189.8 91.8 L189.3 93.4 L189.9 94.0 L190.2 95.4 L190.3 97.2 L191.2 98.4 L191.5 100.2 L191.5 102.5 L191.7 103.7 L190.7 105.2 L189.6 106.1 L187.2 107.2 L187.0 108.3 L185.4 109.1 L184.5 109.5 L184.4 110.6 L185.1 112.1 L185.4 114.2 L185.3 114.9 L183.0 115.9 L181.9 116.7 L182.3 117.8 L181.9 119.8 L181.0 120.4 L180.0 121.5 L179.1 122.8 L177.6 124.3 L176.4 125.2 L174.6 126.1 L173.6 126.4 L171.1 126.5 L169.3 126.6 L166.9 127.3 L165.5 126.7 L165.0 126.7 L164.9 125.2 L164.5 124.6 L164.9 123.4 L163.7 121.6 L162.7 119.9 L161.6 118.6 L160.9 117.2 L160.7 115.6 L160.3 113.3 L159.1 110.9 L157.9 108.5 L157.1 106.5 L157.1 104.9 L157.7 103.1 L159.0 100.8 L159.5 99.0 L158.8 96.6 L158.3 94.2 L157.7 93.0 L157.3 91.8 L156.4 90.6 L155.0 89.2 L154.1 88.0 L153.5 86.7 L154.4 85.5 L154.5 84.4 L154.7 83.1 L154.6 81.8 L154.4 81.1 L153.2 80.4 L151.4 80.6 L150.2 80.7 L149.0 79.1 L148.2 78.4 L147.1 78.2 L145.4 78.4 L144.5 78.6 L143.0 79.2 L141.0 80.2 L139.5 79.8 L138.3 79.6 L135.9 80.2 L134.1 80.6 L132.3 79.9 L130.1 78.4 L128.7 77.2 L127.3 75.7 L126.7 74.6 L125.5 73.0 L125.0 72.5 L123.9 71.6 L123.1 71.1 L123.0 69.8 L122.8 68.8 L122.2 68.4 L123.3 66.8 L123.6 64.4 L123.7 62.6 L122.8 60.9 L123.3 59.1 L123.9 57.6 L125.4 55.5 L125.7 54.7 L127.0 53.1 L127.6 52.6 L129.9 51.6 L131.1 50.7 L131.5 49.5 L131.3 48.4 L132.1 47.0 L132.9 46.2 L134.0 45.9 L134.9 45.3 L135.5 44.2 Z M201.8 100.2 L202.9 102.5 L203.3 104.3 L202.4 105.5 L202.0 107.3 L200.9 110.9 L199.8 113.9 L199.1 115.6 L197.0 116.4 L195.5 115.6 L194.9 113.9 L194.7 112.1 L195.9 110.3 L195.9 108.5 L195.5 106.7 L196.1 105.2 L198.3 104.7 L200.1 103.5 L200.6 101.9 Z M50.8 75.6 L51.4 76.3 L52.4 74.8 L53.0 73.4 L53.8 72.6 L55.9 72.3 L57.1 71.3 L58.0 71.1 L58.0 72.2 L57.4 72.8 L57.7 73.0 L59.3 72.2 L59.5 71.3 L60.0 72.2 L61.6 72.8 L61.9 73.4 L64.3 73.2 L65.5 73.8 L66.7 73.2 L69.1 73.1 L68.1 73.5 L69.2 74.1 L70.3 74.8 L70.9 75.7 L71.7 76.1 L73.2 77.3 L74.8 78.7 L76.8 78.8 L78.6 79.0 L80.4 79.8 L81.4 80.6 L82.2 81.3 L82.8 83.5 L83.4 84.7 L83.4 85.9 L85.2 86.2 L85.8 86.7 L87.0 86.7 L88.8 87.5 L90.2 88.8 L91.7 88.7 L93.5 89.3 L95.3 89.2 L97.1 90.3 L98.5 91.5 L100.1 91.9 L101.0 92.4 L101.5 94.3 L101.4 95.5 L100.7 97.2 L99.5 98.4 L98.5 99.6 L97.1 101.4 L96.5 103.5 L96.5 105.5 L96.1 107.3 L95.6 109.2 L95.0 110.0 L94.1 111.8 L93.0 113.1 L91.5 113.3 L89.7 113.6 L87.8 114.5 L86.0 115.6 L85.1 116.7 L85.1 118.0 L84.9 119.8 L83.7 120.8 L83.0 122.2 L82.0 123.4 L80.9 124.2 L79.3 126.0 L78.6 127.0 L77.4 127.4 L76.0 127.4 L74.1 126.8 L73.4 126.5 L73.4 127.1 L74.8 128.1 L74.7 129.1 L75.4 129.8 L74.3 131.1 L72.6 132.0 L70.3 132.3 L69.0 132.2 L68.8 134.1 L66.9 134.8 L65.5 134.5 L65.4 135.9 L67.2 136.7 L65.5 137.3 L65.1 139.2 L63.3 139.8 L62.5 140.7 L63.7 141.8 L64.5 142.9 L62.5 144.6 L61.3 145.7 L60.6 147.2 L61.4 148.2 L61.2 148.6 L62.2 149.9 L63.7 150.8 L65.3 151.0 L63.7 151.5 L61.3 151.8 L59.5 151.7 L57.7 150.8 L55.9 149.6 L54.2 148.4 L53.2 146.0 L53.0 143.6 L54.2 142.4 L53.0 141.5 L54.8 140.1 L55.4 138.3 L55.9 136.5 L54.8 136.5 L55.0 135.3 L55.2 133.5 L55.6 131.7 L55.2 130.2 L55.9 129.3 L56.5 127.9 L57.5 125.8 L57.6 123.4 L57.9 121.6 L57.7 119.8 L58.6 117.4 L58.9 115.0 L59.0 113.9 L59.3 111.5 L59.3 109.7 L59.2 107.8 L57.9 106.7 L56.2 105.8 L54.2 104.7 L52.6 103.4 L52.0 102.4 L51.1 100.3 L50.0 98.3 L49.1 96.6 L48.2 94.9 L47.6 93.7 L46.2 93.0 L46.0 91.5 L47.0 90.2 L47.6 89.7 L47.8 88.8 L46.5 88.6 L46.6 87.1 L47.5 85.9 L47.6 84.9 L48.9 84.3 L49.0 83.7 L49.6 82.9 L50.6 82.7 L50.9 81.3 L50.6 80.2 L50.8 79.1 L50.6 77.9 L50.1 77.3 L49.7 76.0 L48.2 75.2 L47.6 76.0 L47.1 77.2 L45.6 76.9 L44.1 76.2 L43.2 75.6 L41.8 74.2 L40.8 74.0 L40.7 72.6 L38.7 71.0 L38.4 70.3 L35.7 69.7 L32.9 68.6 L30.3 66.6 L27.9 67.2 L23.9 65.9 L21.1 64.4 L18.6 63.1 L16.9 61.6 L17.2 60.3 L16.1 58.2 L14.8 57.3 L12.5 55.4 L11.2 53.1 L8.8 50.7 L6.1 48.0 L6.2 50.1 L8.2 52.5 L10.0 54.9 L11.5 57.0 L11.9 58.6 L11.2 57.9 L9.4 56.3 L9.1 54.9 L7.0 53.5 L5.8 52.5 L6.4 51.3 L4.9 49.7 L3.8 48.0 L3.3 47.2 L2.0 45.4 L-0.1 44.8 L-2.5 44.2 L-2.5 -2.3 L29.7 -2.3 L29.7 0.4 L33.3 1.9 L35.7 3.9 L38.7 4.6 L41.0 3.0 L44.6 3.0 L45.8 4.3 L45.8 6.1 L43.4 7.0 L40.4 6.9 L39.2 8.1 L38.1 9.6 L34.8 10.2 L33.3 11.2 L31.5 12.6 L29.9 14.4 L30.3 15.8 L32.1 16.2 L32.7 17.9 L35.7 18.0 L38.7 19.2 L41.6 20.0 L44.9 20.1 L44.9 21.6 L45.2 23.3 L46.8 24.8 L48.2 24.7 L49.0 23.7 L48.8 22.2 L48.2 20.7 L50.0 20.4 L51.7 18.8 L51.2 17.4 L50.0 16.0 L50.6 14.4 L49.6 13.2 L50.2 11.4 L53.0 11.7 L55.9 11.8 L57.7 12.9 L60.1 13.5 L59.8 15.2 L61.3 16.6 L63.1 16.2 L64.9 15.0 L66.0 14.1 L67.3 15.2 L69.1 16.8 L69.7 18.3 L72.1 20.0 L73.2 21.2 L74.7 21.0 L76.5 22.2 L76.6 23.3 L75.3 24.5 L73.2 24.8 L71.5 26.0 L67.9 26.0 L63.8 26.1 L63.1 26.9 L60.1 28.5 L58.1 30.1 L59.5 29.5 L61.9 28.0 L64.3 27.3 L66.4 27.7 L65.5 28.7 L65.7 29.7 L66.1 30.7 L67.9 31.3 L69.7 31.1 L70.9 29.9 L71.5 31.1 L70.3 31.9 L67.3 32.8 L65.5 33.9 L64.2 33.7 L66.1 31.4 L64.3 32.0 L63.1 32.5 L60.7 33.5 L58.9 34.2 L58.7 35.3 L59.5 36.2 L58.3 36.4 L57.1 37.0 L54.8 37.6 L53.3 40.0 L52.0 40.6 L52.4 41.9 L53.0 43.8 L51.8 44.5 L50.1 45.4 L48.9 45.7 L47.8 46.8 L46.5 47.8 L45.9 48.9 L46.0 50.1 L46.9 52.0 L47.5 53.7 L47.5 54.9 L47.1 55.9 L46.4 56.0 L46.0 55.3 L45.2 54.3 L44.3 52.8 L44.0 51.2 L42.8 50.0 L41.3 50.5 L39.8 49.7 L38.1 49.8 L36.1 49.9 L36.4 51.2 L35.1 51.1 L33.3 50.6 L31.1 50.5 L29.7 51.1 L27.9 52.0 L26.8 53.1 L27.1 55.0 L26.5 57.3 L26.4 59.3 L27.1 61.1 L28.3 62.9 L28.7 63.5 L30.3 64.2 L32.3 63.8 L33.9 63.8 L34.8 62.3 L35.2 60.9 L36.9 60.5 L38.7 60.3 L39.5 60.6 L38.7 62.6 L37.9 63.8 L37.7 65.6 L37.0 66.9 L37.3 67.1 L38.4 66.9 L40.4 66.9 L42.2 67.1 L43.8 68.0 L43.5 68.8 L43.1 71.0 L43.3 72.9 L44.0 74.0 L45.0 74.9 L46.2 75.4 L48.1 74.4 Z M72.3 29.2 L73.2 28.1 L73.8 26.9 L75.0 25.4 L76.7 24.5 L76.5 25.7 L75.6 26.6 L76.8 26.6 L78.6 27.0 L79.2 28.0 L80.2 29.2 L79.6 30.4 L78.6 29.9 L77.4 30.0 L76.2 29.3 L74.4 29.2 Z M41.8 59.8 L44.0 58.6 L46.4 58.4 L48.8 59.2 L51.2 60.6 L53.0 61.2 L54.5 61.8 L53.0 62.2 L50.5 62.2 L50.8 61.3 L49.4 60.9 L47.0 59.8 L45.2 59.3 L43.4 59.5 Z M54.3 63.8 L55.6 62.2 L57.5 62.3 L59.6 62.5 L61.4 63.7 L60.0 64.1 L58.3 64.3 L57.5 64.8 L56.2 64.2 Z M49.6 64.0 L51.2 63.8 L52.1 64.4 L50.9 64.7 Z M62.9 63.8 L64.8 64.0 L64.7 64.4 L62.9 64.4 Z M136.2 26.2 L138.9 26.0 L141.2 25.5 L144.7 24.9 L143.9 24.5 L145.1 23.2 L143.4 22.7 L143.2 22.0 L141.6 20.8 L141.1 19.8 L140.5 19.2 L139.5 19.2 L140.5 17.9 L140.9 17.3 L138.9 17.1 L138.3 17.3 L139.3 16.1 L137.1 16.1 L136.1 17.4 L136.4 18.6 L136.5 19.8 L137.3 19.7 L137.1 20.6 L138.9 20.5 L139.3 21.7 L139.5 22.3 L137.7 22.4 L138.0 23.0 L138.1 23.6 L136.8 24.1 L138.0 24.4 L139.5 24.7 L139.2 24.9 L137.9 25.0 Z M131.1 24.4 L133.1 24.3 L135.5 23.7 L135.8 22.4 L136.4 20.8 L135.6 20.1 L134.1 20.0 L132.9 20.8 L131.1 21.3 L132.1 22.5 L130.7 23.7 Z M114.4 7.9 L116.8 6.8 L121.6 7.0 L125.1 7.0 L126.8 8.5 L125.1 9.3 L121.0 10.4 L116.2 9.8 L116.8 9.1 L114.4 8.7 Z M157.8 40.6 L158.9 40.4 L161.6 40.3 L161.0 42.2 L157.9 41.1 Z M152.8 37.0 L154.5 37.0 L154.6 39.2 L153.1 39.4 Z M153.3 35.1 L154.4 34.7 L154.2 36.4 L153.4 36.1 Z M171.1 43.5 L174.4 43.8 L174.3 44.2 L171.2 43.9 Z M181.6 44.2 L182.4 43.7 L184.3 43.4 L183.5 44.2 L182.4 44.7 Z M238.2 74.3 L238.7 74.2 L240.0 75.7 L240.6 77.5 L239.7 78.6 L238.6 78.7 L238.2 76.9 Z M272.7 63.0 L274.8 62.0 L274.8 63.5 L273.7 64.2 Z M256.7 79.2 L259.3 79.7 L260.8 81.3 L262.7 82.9 L264.1 83.5 L266.3 85.3 L266.9 87.1 L267.7 88.1 L269.5 89.4 L269.2 92.8 L267.7 92.7 L265.1 90.6 L263.5 88.8 L262.7 86.8 L261.1 85.3 L260.8 83.8 L259.0 82.1 L257.6 80.7 Z M268.5 94.0 L269.6 92.9 L272.5 93.6 L275.2 93.5 L277.5 94.1 L279.6 95.0 L279.5 96.1 L275.4 95.8 L272.5 95.2 L270.0 94.7 Z M273.1 84.1 L274.6 83.8 L275.8 82.9 L277.8 82.1 L279.0 80.4 L280.8 79.3 L282.4 77.5 L283.8 78.7 L285.0 79.7 L283.8 80.7 L283.4 82.3 L283.8 83.5 L285.0 84.7 L283.2 85.3 L283.2 87.1 L282.0 88.3 L281.6 90.0 L279.7 90.6 L277.8 89.7 L276.4 89.9 L274.5 89.3 L274.3 87.7 L273.3 86.5 L273.1 85.3 Z M285.6 92.4 L285.7 90.0 L284.9 89.1 L285.3 87.7 L285.9 85.9 L286.2 85.0 L288.6 85.0 L288.6 92.4 Z M282.8 75.9 L285.6 73.4 L285.8 73.7 L283.2 76.1 Z M288.6 107.3 L286.2 109.6 L284.5 110.0 L282.6 110.5 L281.4 110.8 L279.7 111.8 L278.5 112.8 L278.4 115.0 L278.1 116.8 L279.3 118.6 L279.7 120.2 L280.3 122.2 L281.1 124.0 L280.2 125.9 L280.3 126.7 L282.0 127.6 L283.8 127.6 L286.2 126.2 L288.6 126.2 Z M70.0 147.6 L72.1 147.0 L74.1 147.3 L72.9 148.2 L70.9 148.0 Z M47.6 -2.3 L51.2 -0.6 L54.8 0.6 L59.5 1.8 L61.9 3.0 L63.7 4.6 L69.1 6.3 L67.3 8.5 L64.9 8.9 L65.5 10.6 L63.7 11.4 L61.9 11.7 L59.5 11.1 L57.1 10.1 L54.2 9.1 L50.6 9.2 L50.0 7.9 L54.8 7.9 L55.4 6.7 L56.2 5.1 L52.4 4.5 L49.4 2.7 L45.2 2.5 L41.6 2.3 L36.9 1.9 L35.7 0.1 L35.7 -2.3 Z M39.2 9.6 L41.6 7.5 L44.0 8.2 L47.0 9.6 L45.2 10.2 L41.6 10.6 Z M204.5 0.4 L206.3 1.5 L209.8 1.8 L211.6 0.7 L209.8 -1.1 L212.2 -2.3 L205.1 -2.3 Z" fill="none" stroke="#d4dccc" stroke-width="0.5" stroke-linejoin="round" opacity="0.6"/><g clip-path="url(#landclip)"><path d="M140.4 44.1 L141.0 46.6 L141.6 47.5 L138.7 48.1 L137.1 50.1 L132.7 51.7 L132.7 53.4 L137.3 56.1 L144.5 60.7 L145.2 61.7 L146.8 62.3 L147.0 63.2 L148.0 63.1 L149.9 62.6 L152.0 61.0 L157.3 57.9 L160.0 59.0 L160.9 58.5 L171.7 62.6 L171.7 62.0 L172.9 62.0 L172.9 59.7 L187.0 59.7 M132.7 52.9 L127.3 52.9 M132.7 54.9 L128.7 54.9 L128.7 57.9 L127.5 58.5 L127.5 60.5 L122.8 60.5 M137.3 56.1 L135.3 56.1 L136.5 66.2 L136.7 67.4 L131.7 67.5 L129.3 67.3 L128.5 68.2 L129.4 71.1 L132.3 71.1 L133.5 73.7 L135.9 73.7 L136.5 73.5 L137.7 70.7 L140.0 69.0 L142.4 68.0 L143.3 68.0 L144.2 69.9 L145.8 71.2 L147.3 71.9 L147.8 69.8 L151.4 70.4 L153.8 70.6 L155.6 70.0 L159.1 69.6 M123.3 66.8 L125.7 66.1 L127.5 67.4 L128.5 68.2 M129.4 71.1 L126.7 70.9 L123.1 71.1 M123.0 69.7 L125.1 69.4 L126.6 69.9 L125.1 70.1 L123.0 70.3 M125.1 72.8 L126.7 71.9 L126.7 70.9 M127.2 75.0 L129.9 74.0 L130.7 75.7 L129.3 77.7 M130.7 75.7 L132.3 77.2 L133.1 76.8 L134.1 80.6 M133.1 76.8 L133.5 73.7 M136.5 73.5 L139.7 74.3 L139.8 76.9 L139.3 79.8 M139.7 74.3 L139.7 72.8 L143.0 72.6 L143.6 75.7 L144.5 78.6 M143.0 72.6 L144.1 72.8 L145.8 71.2 M144.1 72.8 L144.9 75.2 L144.9 78.5 M147.3 71.9 L146.4 75.2 L146.3 78.2 M148.0 63.1 L148.0 66.2 L147.2 67.5 L143.3 68.0 M160.9 58.5 L161.5 60.9 L161.6 64.4 L161.5 65.7 L159.3 68.6 L159.1 69.6 L160.0 71.0 L160.7 71.2 L160.9 74.0 L159.5 74.0 L161.3 76.9 L163.3 76.7 L165.7 75.2 L168.1 74.6 L170.2 72.5 L171.1 75.2 L172.3 76.0 L173.2 77.2 L175.7 79.8 M157.3 57.9 L155.0 56.7 L154.4 54.3 L154.8 52.5 L154.4 49.9 L153.8 47.8 L152.1 46.1 L152.9 44.2 L153.3 41.9 M154.4 49.9 L155.3 48.1 L156.7 47.2 L156.7 46.3 M172.9 48.2 L172.9 59.7 M171.7 62.6 L171.7 67.2 L170.2 67.4 L169.9 69.8 L169.0 70.7 L170.2 72.5 M160.0 71.0 L158.8 74.0 L157.1 77.5 L155.0 78.1 L153.3 80.2 M161.3 76.9 L160.3 78.7 L160.4 80.5 L162.1 83.1 L162.7 82.1 L165.2 81.7 M154.7 83.1 L156.5 83.2 L156.5 84.7 L154.7 84.7 M156.5 83.2 L158.9 83.2 L162.1 83.1 L162.4 83.8 M158.9 83.2 L160.2 84.3 L160.0 86.3 L160.3 88.3 L158.5 88.7 L157.1 89.4 L156.4 90.5 M157.3 91.8 L158.5 91.3 L160.2 91.7 L162.1 90.4 L162.4 88.3 L164.3 86.5 L164.5 84.1 L165.2 81.7 L165.2 80.6 L167.5 80.5 L169.9 81.0 L172.3 79.9 L175.7 79.8 L178.2 80.5 L179.8 81.7 L181.2 81.6 L183.6 80.9 L185.9 80.4 M171.7 75.5 L174.0 73.7 L176.4 74.7 L178.8 74.2 L180.4 74.2 L181.7 71.9 L182.6 71.3 L182.4 73.1 L183.6 74.6 L183.7 75.7 L182.4 76.3 L185.9 80.4 M183.6 74.6 L184.7 73.0 L185.1 71.5 L186.2 70.4 L186.6 68.8 L187.0 66.0 L189.1 64.4 M186.6 68.8 L188.4 68.5 L190.7 68.6 L193.6 71.0 L192.9 72.8 L194.2 72.9 L195.5 75.2 L199.1 76.3 L200.3 76.3 L196.7 79.9 L194.9 80.2 L193.1 80.9 L193.0 81.2 L190.2 81.8 L188.4 81.6 L186.9 80.6 L185.9 80.4 M194.2 72.9 L194.7 72.2 M193.0 81.2 L191.9 82.5 L191.9 86.9 L192.7 87.9 M183.6 80.9 L184.1 81.7 L184.8 83.8 L183.7 85.4 L183.5 87.1 L187.9 89.4 L188.0 90.0 L189.8 91.5 M179.8 81.7 L180.2 83.2 L178.7 85.0 L178.3 87.5 L179.4 87.1 L183.5 87.1 M178.3 87.5 L177.6 89.1 L177.9 91.1 L179.8 89.8 L179.8 88.7 L179.4 87.1 M177.6 89.1 L179.8 88.7 M179.8 95.8 L182.3 97.1 L183.6 97.2 M184.7 99.7 L187.8 99.8 L191.2 98.4 M179.8 95.8 L177.5 96.0 L176.9 96.9 L177.1 99.0 L176.9 100.8 L178.6 100.4 L178.6 101.8 L177.6 101.8 L175.5 99.7 L173.2 99.2 L172.1 99.3 L171.7 98.9 L169.5 99.2 L169.3 97.4 L169.0 94.6 L166.2 95.4 L163.3 94.6 L162.8 92.9 L158.5 92.9 L157.7 93.0 M157.6 92.7 L158.1 91.2 M171.7 98.9 L171.7 101.4 L169.3 101.4 L169.3 105.2 L170.9 106.8 L173.2 107.1 M157.1 106.5 L159.7 106.6 L165.0 106.6 L168.6 107.3 L170.9 106.8 M168.1 107.5 L168.1 112.1 L166.9 112.1 L166.9 115.4 L166.9 119.7 L163.8 120.1 L162.7 119.9 M166.9 115.4 L167.8 117.9 L170.0 117.1 L172.5 116.6 L173.9 115.3 L175.2 114.0 L178.1 112.3 L180.4 112.5 L181.2 115.0 L181.1 116.8 L182.3 117.9 M173.2 107.1 L174.3 109.1 L176.1 110.3 L178.1 112.3 M173.2 107.1 L175.2 107.3 L177.5 104.9 L179.3 104.6 L182.3 105.8 L182.3 108.5 L181.8 111.2 L180.4 112.5 M179.3 104.6 L179.1 103.5 L182.6 102.5 L182.0 102.1 L182.4 99.7 L182.8 97.3 M182.6 102.5 L184.2 103.1 L185.9 104.9 L185.1 106.2 L184.1 105.3 L184.3 104.1 M184.4 99.7 L185.7 103.3 M175.6 121.1 L176.8 119.9 L178.1 120.9 L177.1 122.3 L175.6 121.1 M180.0 116.8 L181.2 117.1 L181.1 118.4 L180.0 118.0 M183.8 48.6 L184.7 50.7 M58.0 71.8 L56.5 72.8 L55.9 74.9 L56.7 75.9 L57.1 77.5 L59.5 77.5 L62.5 78.5 L62.2 81.1 L63.1 83.5 L63.2 84.4 L59.8 83.8 L59.8 85.2 L59.5 86.1 L60.2 87.3 L59.6 90.9 L58.7 90.4 L56.1 88.7 L54.8 87.1 L53.2 86.0 L52.0 85.4 L50.6 85.0 L49.0 84.2 M53.2 86.0 L52.8 87.7 L51.5 89.0 L49.7 89.9 L49.1 91.3 L48.1 91.2 L47.2 89.9 M59.6 90.9 L56.1 92.1 L54.9 94.6 L56.1 97.1 L58.9 97.2 L58.8 99.0 L60.0 98.9 L61.1 100.8 L60.7 103.1 L60.2 104.4 L60.1 106.7 L59.0 107.7 M60.0 98.9 L61.9 98.6 L65.1 97.4 L65.0 99.8 L68.1 101.4 L70.9 102.3 L71.2 105.3 L73.4 105.3 L73.6 106.6 L74.4 107.5 L73.6 109.5 L72.5 108.9 L69.3 109.2 L68.4 112.3 L66.3 113.0 L65.3 112.2 L63.9 111.8 L62.9 113.0 M60.1 106.7 L61.0 109.0 L61.7 111.5 L62.9 113.0 L61.4 115.0 L61.3 118.0 L59.9 119.8 L59.5 122.8 L59.2 125.5 L59.8 126.6 L58.9 128.7 L58.2 130.5 L58.3 132.3 L57.4 134.7 L57.4 137.7 L58.1 139.2 L57.4 141.6 L56.7 143.6 L55.6 145.4 L56.8 146.8 L57.3 147.8 L61.4 148.2 M61.2 148.6 L61.2 151.3 M73.6 109.5 L74.1 112.2 L76.5 112.4 L76.9 114.5 L78.3 114.6 L77.9 116.4 M68.4 112.3 L70.3 114.2 L72.9 115.4 L74.3 116.2 L73.1 118.3 L75.8 118.5 L77.9 116.4 L78.9 117.7 L79.0 118.3 L76.5 119.7 L74.3 121.8 L76.2 122.8 L78.0 123.4 L79.2 124.7 L79.3 126.0 M74.3 121.8 L73.6 124.6 L73.4 126.4 M63.2 84.4 L64.9 84.9 L66.7 83.6 L66.7 80.9 L68.1 81.1 L69.7 80.6 L70.6 79.7 L69.8 78.8 L70.0 77.9 L71.1 77.3 L71.5 75.9 M70.6 79.7 L71.6 79.9 L71.5 82.7 L71.8 83.7 L72.9 84.4 L74.7 83.5 L75.6 83.6 L77.9 83.1 L80.2 83.2 L81.4 81.0 M74.8 78.8 L74.0 80.4 L74.7 81.8 L74.7 83.5 M77.9 83.1 L78.1 80.9 L78.6 79.1 M73.8 94.2 L76.2 97.2 L81.0 97.8 L83.4 101.4 L88.2 101.4 L88.2 98.4 L92.9 96.6 L94.1 94.2 L94.1 90.0 M83.4 101.4 L82.8 106.1 L79.8 107.9 L82.2 110.3 L85.8 109.7 L87.0 112.7 L89.9 112.7 L94.1 110.9 M73.8 94.2 L73.2 87.1 L75.0 84.1 M85.8 92.4 L85.8 97.8 L88.2 98.4 M79.8 107.9 L73.8 107.3 M82.2 110.3 L79.2 113.3 L78.3 114.6 M87.0 112.7 L84.6 115.6 L79.0 117.4 M84.9 119.6 L82.2 118.6 L78.9 118.3 M88.2 101.4 L92.9 103.7 L95.9 103.7 M89.9 112.7 L92.9 107.3 L95.6 107.3 M70.9 102.3 L76.2 97.2 M-3.7 27.5 L29.5 27.5 L29.9 27.2 L32.1 28.0 L34.5 28.6 L36.3 28.7 L37.6 28.3 L41.9 30.0 L42.1 30.5 L43.3 31.0 L44.6 31.9 L44.7 34.7 L43.9 35.6 L44.4 36.2 L48.8 35.1 L48.7 34.3 L51.4 33.9 L52.0 33.2 L53.6 32.3 L57.7 32.3 L58.6 31.9 L59.2 30.8 L60.5 29.4 L61.6 29.5 L62.2 29.9 L62.2 31.3 L62.6 32.0 L63.1 32.4 M3.3 47.2 L6.2 46.9 L6.1 47.2 L10.6 48.6 L14.0 48.6 L14.0 48.0 L16.0 48.0 L17.9 49.4 L18.4 50.6 L19.9 51.3 L20.8 50.4 L22.1 50.4 L22.9 51.4 L24.3 53.1 L24.8 54.4 L27.1 55.0 M33.0 68.6 L33.0 67.8 L33.6 66.7 L35.2 66.7 L34.0 65.4 L34.5 64.7 L36.6 64.7 L36.7 64.4 L37.7 63.8 M36.6 64.7 L36.6 66.9 L37.0 66.9 M37.8 67.2 L36.6 68.1 L36.4 68.7 L35.5 69.4 M36.4 68.7 L37.5 69.2 L38.3 69.9 M38.9 70.4 L39.6 69.4 L40.7 69.3 L41.8 68.2 L43.8 68.0 M40.8 72.6 L42.0 72.6 L43.2 72.9 M44.1 76.2 L44.1 74.6 L44.5 74.4 M50.1 77.3 L50.8 75.6 M57.4 62.4 L57.5 64.4 M132.5 36.0 L133.4 35.8 L135.2 36.0 L135.6 36.3 L134.8 37.0 L134.7 38.6 L134.1 38.7 L134.7 39.4 L134.3 40.4 L134.1 41.6 M140.9 34.2 L142.2 34.8 L143.9 34.9 L145.1 35.3 L146.8 35.4 M152.0 33.7 L151.4 33.2 L151.4 31.2 L151.1 31.1 L150.3 30.8 L150.2 30.4 L151.4 29.3 L152.1 29.2 L152.8 27.5 L150.7 26.9 L149.9 26.9 L148.8 26.3 L148.0 26.3 L146.0 25.0 M147.1 24.7 L148.3 24.7 L149.9 24.9 L150.2 25.4 L150.2 24.2 L151.4 23.7 L151.6 22.5 M150.2 25.4 L150.3 26.2 L150.7 26.9 M152.1 29.2 L154.5 29.3 L154.4 29.9 L155.6 30.0 L155.0 30.7 L153.8 31.1 L153.1 30.7 L151.4 31.2 M154.5 29.3 L155.6 29.3 L158.5 29.3 L158.3 28.5 L159.5 27.7 L160.9 27.5 L163.3 27.7 L163.4 28.7 L162.2 30.0 L160.4 30.6 L159.4 30.5 L157.8 30.3 L155.6 30.0 M159.5 27.7 L157.8 26.6 L157.6 26.0 L160.1 25.1 L160.9 25.1 L160.6 23.9 L160.0 22.7 L160.1 21.7 M153.4 20.5 L154.7 20.6 M160.9 25.1 L163.2 25.8 L165.5 26.9 L164.5 27.5 L163.3 27.7 M165.5 26.9 L166.9 27.3 L169.9 27.4 L171.7 25.7 L171.2 23.9 L171.5 21.7 L171.1 21.6 L170.2 21.1 L166.5 21.1 M170.2 21.1 L170.3 20.4 L168.4 20.1 M168.1 19.1 L172.9 18.8 L174.8 19.5 L174.8 20.1 L173.8 20.5 L173.6 21.3 L171.5 21.7 M172.0 16.9 L175.7 17.4 M174.8 19.5 L176.7 18.9 L176.1 17.5 L175.7 17.4 L175.8 15.7 L176.4 15.0 M171.2 24.4 L175.2 24.4 L179.4 24.8 L181.0 23.8 L182.0 22.3 L179.8 20.6 L179.9 19.7 L176.7 18.9 M181.0 23.8 L183.8 24.8 L185.5 25.8 L188.4 26.3 L190.9 26.8 L190.5 28.7 L188.6 29.8 M169.9 27.4 L169.5 28.2 L170.3 28.7 L172.7 29.1 L174.8 28.3 L175.8 28.1 L177.9 29.3 L178.8 30.6 M174.8 28.3 L176.7 30.5 L176.7 31.7 L178.5 31.9 M162.2 30.0 L162.7 30.5 L165.5 31.2 L167.2 30.8 L168.3 30.6 L170.3 28.7 M169.5 28.2 L167.5 28.1 L165.5 28.9 L163.4 28.7 M167.2 30.8 L168.6 32.5 L170.1 32.8 L170.1 33.2 L172.9 33.8 L175.2 33.3 L177.1 33.8 M168.6 32.5 L165.7 32.4 L166.2 34.1 L167.4 34.9 L169.8 35.5 L170.5 34.4 L170.1 33.2 M169.8 35.5 L170.5 36.7 L174.4 36.4 L174.5 36.1 L176.4 35.8 M174.4 36.4 L174.0 37.3 M166.9 38.6 L168.1 37.2 L170.5 36.7 M166.2 36.0 L167.5 35.8 L167.4 34.9 M167.5 35.8 L168.1 37.2 M161.9 32.0 L165.7 32.4 M161.9 32.0 L162.4 33.2 L164.0 34.7 L165.1 35.3 M159.4 31.7 L161.3 31.7 L162.7 30.5 M156.7 15.6 L157.6 13.2 L157.6 10.8 L159.7 9.1 L162.1 5.5 L164.5 4.3 L167.2 3.7 L167.6 3.7 L173.7 3.7 L176.4 2.5 L177.6 3.1 L179.8 2.7 M171.8 7.5 L171.2 5.5 L167.6 3.7 M176.2 13.8 L178.2 12.6 L180.6 11.1 L178.8 9.6 L178.6 7.3 L177.6 5.5 L177.0 4.3 L177.6 3.1 M134.3 20.4 L133.2 21.0 L134.1 21.4 L135.5 21.4 M139.5 20.4 L140.6 19.4 M186.0 43.0 L186.8 42.0 L188.4 41.9 L191.7 41.7 L193.6 41.7 L196.5 41.6 L195.8 40.1 L195.6 38.9 L196.5 38.6 L195.2 38.1 L194.9 36.9 L193.8 36.3 L192.5 36.4 M190.7 34.2 L193.7 34.4 L196.1 35.0 L198.4 36.0 L201.0 36.1 M196.5 38.6 L198.5 39.5 L200.3 38.6 L201.4 40.1 M194.9 36.9 L196.7 36.7 L198.4 36.0 M196.7 36.7 L198.5 38.8 L198.5 39.5 M193.6 41.7 L192.2 42.4 L191.9 44.9 L189.3 46.1 L186.9 47.4 L185.6 46.9 L185.4 48.4 L184.8 50.6 M185.9 44.7 L186.6 44.8 L186.5 45.6 L185.6 46.2 L184.9 46.4 M184.8 50.9 L186.0 51.1 L187.8 50.1 L188.4 49.5 L187.2 48.4 L189.6 47.8 L189.8 47.5 L189.3 46.1 M189.8 47.5 L191.2 47.9 L193.3 48.8 L196.4 51.1 L198.5 51.2 L199.6 51.3 L199.9 51.9 L200.8 51.9 M198.5 51.2 L199.1 50.1 L200.2 50.1 M200.9 50.3 L199.9 48.9 L200.1 47.2 L197.9 46.6 L197.2 45.4 L198.1 43.4 L197.2 43.0 L196.5 41.6 M194.1 66.3 L194.6 65.1 L196.0 65.1 L198.4 65.4 L199.7 65.5 L201.6 63.7 L205.1 63.2 L208.6 62.0 L209.5 59.7 L208.9 58.8 L205.8 58.5 L204.6 57.2 M209.5 59.7 L209.6 57.3 L210.2 56.1 M205.1 63.2 L206.4 66.0 M203.6 56.5 L204.1 56.6 M207.3 41.4 L208.6 40.6 L211.3 40.4 L213.8 41.2 L216.0 42.3 L215.2 44.8 L215.7 48.4 L216.8 48.9 L215.7 50.4 L216.8 51.8 L217.9 52.3 L218.4 54.1 L216.6 55.9 M215.7 50.4 L217.6 50.9 L222.1 50.3 L222.6 48.7 L225.7 47.9 L225.9 46.6 L226.5 45.4 L227.8 45.0 L228.4 42.5 L231.9 41.8 L232.4 41.6 M216.0 42.3 L217.6 43.8 L220.0 42.6 L222.4 41.3 L224.1 41.8 L225.9 41.2 L228.3 40.7 L228.4 42.2 L230.5 41.3 L232.4 41.6 M222.4 41.3 L222.5 40.6 L219.4 39.4 L217.5 37.6 L215.8 36.8 L214.6 35.6 L212.8 35.0 L211.0 36.7 L209.8 36.7 L209.8 32.3 L212.9 31.6 L215.8 33.0 L217.0 34.1 L220.5 33.8 L221.9 34.7 L221.8 35.8 L224.1 37.0 L226.5 35.8 L227.7 35.5 M205.7 36.2 L208.0 35.8 L209.8 36.7 M201.7 30.6 L200.9 30.4 L199.1 28.7 L198.5 28.2 L199.1 27.3 L198.9 26.0 L200.9 26.3 L203.6 24.3 L208.0 25.1 L212.9 25.1 L216.5 24.8 L214.6 23.3 L215.9 21.6 L220.6 21.1 L225.3 19.9 L227.7 21.4 L230.7 21.6 L234.6 21.1 L234.3 21.7 L238.5 25.4 L242.6 25.1 L245.0 26.8 L247.2 27.3 M247.2 27.3 L245.6 28.1 L245.3 29.4 L242.0 29.7 L241.2 31.7 L238.9 32.3 L238.7 35.7 L234.8 37.0 L230.8 38.8 L231.1 39.9 L232.4 41.6 M238.7 35.7 L237.4 34.9 L231.7 34.4 L230.7 35.3 L227.7 35.5 L227.1 36.6 L228.4 38.0 L230.8 38.8 M227.1 36.6 L225.3 36.7 L224.1 37.0 M224.1 41.8 L223.9 39.5 L224.6 38.8 L227.1 38.0 L227.1 36.6 M224.4 57.8 L227.7 56.8 L226.5 53.0 L229.4 51.6 L231.3 49.4 L232.0 47.8 L232.9 47.4 L231.3 46.6 L231.1 45.0 L234.9 43.6 L235.8 43.6 L237.2 44.9 L236.6 47.2 L237.5 48.9 L239.7 49.9 L241.0 49.8 L243.5 51.4 L245.6 52.5 L248.1 52.6 M232.4 41.6 L233.7 43.0 L235.8 43.6 M238.6 51.6 L239.9 52.0 L242.4 53.4 L245.4 54.2 L248.1 54.4 L248.1 52.6 L249.0 53.4 M239.7 49.9 L238.6 51.6 M249.0 53.4 L250.2 52.3 L252.4 52.8 L252.9 53.8 L250.2 54.1 L249.0 53.4 M252.4 52.8 L255.2 51.3 L257.8 50.9 L259.1 52.3 M248.1 54.4 L249.1 55.9 L248.0 56.5 L249.0 58.2 L249.2 59.7 M249.1 54.4 L250.2 55.7 L253.3 56.1 L251.8 57.3 L251.9 58.5 L253.1 57.6 L253.5 59.8 L253.1 61.2 M259.1 52.3 L256.6 54.2 L255.9 55.9 L254.3 57.3 L254.3 58.5 L253.5 59.8 M259.1 52.3 L260.8 53.1 L260.8 55.0 L259.3 56.7 L261.0 57.3 L261.4 59.5 L263.6 59.9 M263.6 59.9 L262.4 61.6 L259.9 62.4 L259.2 63.8 L261.0 66.3 L260.2 67.8 L261.4 70.9 L261.8 71.8 L260.8 73.7 M247.8 27.3 L251.6 32.0 L257.0 33.2 L258.0 35.0 L264.1 35.3 L268.3 36.3 L274.3 35.0 L276.6 33.7 L276.5 32.3 L280.8 31.7 L286.1 30.3 M247.8 27.3 L252.8 25.4 L259.8 26.4 L260.3 23.9 L264.9 24.8 L265.1 25.6 L270.7 26.3 L274.3 27.3 L279.4 26.0 L282.2 26.6 L286.1 30.3 M263.6 59.9 L264.9 59.2 L265.9 59.1 L268.0 58.7 L270.2 58.6 L271.9 60.3 M263.6 59.9 L262.9 61.8 L263.8 62.6 L263.5 65.0 L264.8 64.2 L267.1 64.1 L268.0 66.3 L269.0 67.3 L269.0 68.7 L271.3 68.4 L271.4 71.2 L269.5 71.8 L269.4 72.8 L267.6 73.5 M264.9 59.2 L265.8 60.0 L267.1 61.0 L267.1 62.8 L268.5 63.7 L271.4 68.4 M265.2 69.2 L265.8 71.9 M265.2 69.2 L269.0 68.7 M262.4 78.2 L263.6 79.1 L264.5 79.0 L264.8 78.5 M273.8 83.5 L274.8 84.8 L276.6 84.2 L279.0 84.1 L280.3 82.4 L280.8 80.7 L283.3 80.9" fill="none" stroke="#f3eedc" stroke-width="0.4" stroke-linejoin="round" opacity="0.55"/></g><path d="M177.7 36.8 L176.6 36.3 L176.3 35.1 L176.1 34.4 L177.1 33.5 L177.4 32.4 L178.5 31.9 L179.1 31.1 L179.8 30.5 L181.0 30.4 L181.8 31.0 L183.0 31.0 L181.9 31.8 L183.0 32.8 L184.1 32.9 L185.1 32.3 L186.6 31.9 L185.4 31.7 L184.8 30.8 L185.9 30.3 L187.6 29.9 L188.7 29.7 L189.8 29.8 L188.8 30.3 L188.4 31.0 L188.0 31.4 L186.9 31.9 L187.6 32.5 L188.7 33.1 L190.3 33.9 L191.9 34.8 L192.7 35.8 L192.5 36.4 L191.1 37.0 L189.6 36.9 L188.1 37.0 L186.7 36.6 L185.0 35.8 L183.0 35.8 L181.2 36.2 L180.2 36.9 L178.7 36.8 Z M174.4 38.1 L174.9 37.8 L175.8 37.2 L177.5 37.0 L177.7 36.8 L178.1 37.3 L176.4 37.8 L174.9 37.8 Z M198.9 32.8 L199.7 31.6 L201.2 30.6 L202.7 30.1 L204.5 29.9 L206.3 30.1 L206.5 30.8 L206.0 31.8 L204.3 32.0 L204.1 32.8 L203.2 32.9 L203.8 33.7 L204.3 34.4 L205.7 35.0 L205.8 36.2 L207.0 35.8 L208.3 36.1 L208.0 37.2 L206.3 37.3 L206.0 38.2 L207.0 39.2 L207.3 40.6 L207.3 41.8 L205.8 42.0 L203.9 42.2 L202.7 41.4 L201.5 41.1 L201.4 39.9 L201.8 38.9 L202.2 37.9 L203.0 37.8 L201.8 37.0 L201.0 36.0 L199.8 34.8 L199.7 33.7 Z M33.3 30.3 L35.7 28.9 L38.1 27.9 L40.4 28.8 L41.9 30.0 L41.0 30.4 L39.2 30.5 L36.9 30.1 L35.1 30.4 Z M38.3 35.8 L38.1 33.5 L39.2 31.3 L41.0 31.1 L41.6 31.6 L40.4 32.9 L40.0 34.7 L39.7 36.1 Z M42.2 31.2 L43.4 31.0 L46.4 31.1 L47.6 32.5 L45.8 32.8 L45.6 34.3 L44.6 34.5 L43.4 33.7 L43.7 32.3 Z M43.7 36.1 L45.2 35.6 L47.6 35.0 L48.9 34.8 L48.2 35.4 L45.8 36.4 L44.0 36.4 Z M47.8 34.3 L50.0 33.6 L52.0 33.3 L52.0 34.1 L50.0 34.3 Z M181.0 86.5 L181.8 85.5 L183.6 85.6 L183.8 87.1 L183.0 88.8 L181.2 89.0 L180.8 87.7 Z M177.9 89.9 L178.3 91.2 L178.5 93.0 L179.5 94.8 L180.1 96.2 L179.7 96.1 L178.9 94.4 L178.0 92.8 L177.8 91.1 Z M183.6 97.3 L184.2 98.7 L184.3 100.8 L184.9 102.8 L184.5 102.9 L183.9 101.1 L183.8 99.2 L183.5 97.5 Z M266.7 24.4 L268.9 23.2 L271.9 21.6 L273.9 19.5 L273.3 19.5 L271.3 21.2 L268.9 22.7 L266.9 23.9 Z M25.2 25.8 L27.3 25.7 L27.1 23.9 L26.1 21.8 L24.9 22.2 L26.1 23.7 Z" fill="#10265e"/><path d="M90.5 14.6 L88.8 13.8 L85.8 13.2 L83.4 11.4 L81.0 9.1 L79.2 6.7 L79.2 4.3 L82.2 3.1 L78.0 1.9 L77.4 0.1 L76.2 -2.3 L119.2 -2.3 L116.8 0.1 L116.8 1.3 L116.2 2.5 L112.0 4.0 L107.2 4.9 L102.5 6.7 L97.7 7.9 L94.7 9.6 L92.9 12.0 L91.7 14.4 Z" fill="#dfe3e6" filter="url(#b0)"/><path d="M-2.5 173.4 L23.7 172.2 L35.7 172.6 L50.0 172.6 L59.5 168.0 L62.5 165.7 L66.7 163.3 L71.5 161.5 L75.0 161.1 L73.2 162.7 L70.3 163.9 L69.1 165.7 L69.7 168.0 L70.3 171.0 L71.5 174.0 L125.1 174.0 L128.7 169.1 L133.5 168.3 L143.0 167.3 L152.6 167.3 L160.9 166.7 L172.9 167.3 L181.2 166.1 L186.0 166.7 L190.7 165.5 L196.7 164.4 L202.7 163.2 L207.4 162.6 L211.0 163.5 L217.0 164.4 L224.1 164.7 L226.5 165.9 L230.1 166.7 L236.1 165.5 L240.8 163.8 L248.0 163.2 L256.4 162.6 L262.3 162.3 L268.3 163.2 L274.3 162.6 L280.2 163.2 L288.6 163.5 L288.6 176.4 L-2.5 176.4 Z" fill="#dfe3e6" filter="url(#b0)"/><path d="M70.0 147.6 L72.1 147.0 L74.1 147.3 L72.9 148.2 L70.9 148.0 Z" fill="#f4f4f4" filter="url(#b0)"/><circle cx="226.1" cy="144.5" r="0.9" fill="#f4f4f4" filter="url(#b0)"/><path d="M53.2 146.0 L54.2 148.4 L56.5 150.2 L59.5 151.8 L63.1 151.7" fill="none" stroke="#f0f0f0" stroke-width="1.6" stroke-linecap="round" stroke-linejoin="round" opacity="0.9"/><path fill-rule="evenodd" d="M0 0 H286.3 V171.5 H0 Z M35.65 14.25 V157.75 H250.3 V14.25 Z" fill="#000000" opacity="0.74"/><rect x="35.65" y="14.25" width="214.65" height="143.50" fill="none" stroke="#a89e8c" stroke-width="0.6" opacity="0.8"/></g></svg>
<svg style="position:absolute;left:0;top:0" width="768" height="480" viewBox="0 0 768 480"><g transform="translate(3.6,3)"><rect x="0" y="0" width="9.4" height="9.5" fill="#0a0a0a"/><path d="M2.2 0 H9.4 V3 L5.2 6.5 Z" fill="#1c72c4"/><path d="M9.4 3 V9.5 H3.4 L5.6 6.6 Z" fill="#17904a"/><path d="M1.6 0 L2.8 0 L5.3 5.6 L8.6 1.4 L9.4 1.9 L9.4 2.8 L5.9 6.8 L3.9 9.5 L2.6 9.5 L4.4 6.6 Z" fill="#ffffff"/></g><rect x="14.8" y="3.4" width="0.7" height="9" fill="#949494"/><g transform="translate(19.7,4.0) scale(1.0)"><rect x="0" y="1.6" width="8.8" height="6.4" rx="0.6" fill="#ffffff" stroke="#9a9a9a" stroke-width="0.5"/><circle cx="6.6" cy="2.4" r="2.7" fill="#22aa33"/><circle cx="6.6" cy="2.4" r="1.5" fill="#5fd06a"/><path d="M5.3 2.4 H7.9 M6.6 1.1 V3.7" stroke="#ffffff" stroke-width="0.8"/></g><g transform="translate(32,4.0) scale(0.98)"><path d="M0.6 2.2 L1.2 1 H3.6 L4.2 1.8 H8 V8.6 H0.6 Z" fill="#e9c75a" stroke="#caa63a" stroke-width="0.4"/><rect x="4.6" y="0.4" width="3" height="2.6" fill="#f4f4f4" stroke="#b8c8d8" stroke-width="0.3"/><rect x="5.6" y="0.9" width="1.4" height="1" fill="#58b0e0"/><path d="M0.6 8.6 L1.6 3.6 H9.2 L8 8.6 Z" fill="#f7e79a" stroke="#d9bd55" stroke-width="0.4"/></g><g transform="translate(45,4.4) scale(1.0)"><path d="M0 0 H7.4 L8.2 0.8 V8.2 H0 Z" fill="#3a4aa8"/><path d="M0 0 H1.2 V8.2 H0 Z" fill="#5a6cc8"/><rect x="1.8" y="0.5" width="4.6" height="4.3" fill="#ffffff"/><rect x="2.2" y="5.8" width="3.8" height="2.4" fill="#d8dcee"/><rect x="4.4" y="6.2" width="1.1" height="1.8" fill="#3a4aa8"/></g><g transform="translate(57.8,4.4) scale(1.0)"><rect x="2.9" y="0" width="5.7" height="5.9" fill="#2c3c9a"/><rect x="2.9" y="0" width="0.8" height="5.9" fill="#5266c8"/><rect x="4.1" y="0.5" width="3.4" height="2.6" fill="#ffffff"/><rect x="4.5" y="4.2" width="2.6" height="1.7" fill="#cfd4ec"/><rect x="3.9" y="0.5" width="3.6" height="1.4" fill="#e8ecfa"/><rect x="1.5" y="1.3" width="5.7" height="5.9" fill="#2c3c9a"/><rect x="1.5" y="1.3" width="0.8" height="5.9" fill="#5266c8"/><rect x="2.7" y="1.8" width="3.4" height="2.6" fill="#ffffff"/><rect x="3.1" y="5.5" width="2.6" height="1.7" fill="#cfd4ec"/><rect x="2.5" y="1.8" width="3.6" height="1.2" fill="#e8ecfa"/><rect x="0" y="2.7" width="5.7" height="5.9" fill="#2c3c9a"/><rect x="0" y="2.7" width="0.8" height="5.9" fill="#5266c8"/><rect x="1.2" y="3.2" width="3.4" height="2.6" fill="#ffffff"/><rect x="1.6" y="6.9" width="2.6" height="1.7" fill="#cfd4ec"/></g><g fill="none" stroke="#a2a2a2" stroke-width="1" stroke-linecap="round" stroke-linejoin="round"><path d="M73.6 5.4 L71.4 7.6 L73.8 9.6"/><path d="M71.6 7.6 H75.4 Q77.6 7.8 77.4 9.9 Q77.2 11.8 75 12"/></g><path d="M82.4 8 H85 L83.7 9.5 Z" fill="#949494"/><g fill="none" stroke="#9a9a9a" stroke-width="1" stroke-linecap="round" stroke-linejoin="round"><path d="M95.2 5.4 L97.4 7.6 L95 9.6"/><path d="M97.2 7.6 H93.4 Q91.2 7.8 91.4 9.9 Q91.6 11.8 93.8 12"/></g><path d="M101.4 8 H104 L102.7 9.5 Z" fill="#8c8c8c"/><path d="M107.6 10 H112.4 L110 12.8 Z" fill="#0c0c0c"/><rect x="108" y="8.4" width="4" height="0.7" fill="#0c0c0c"/><g fill="#f0f0f0"><circle cx="695" cy="7.9" r="1.5"/><rect x="697.75" y="7.45" width="0.9" height="0.9"/><rect x="696.81" y="9.71" width="0.9" height="0.9"/><rect x="694.55" y="10.65" width="0.9" height="0.9"/><rect x="692.29" y="9.71" width="0.9" height="0.9"/><rect x="691.35" y="7.45" width="0.9" height="0.9"/><rect x="692.29" y="5.19" width="0.9" height="0.9"/><rect x="694.55" y="4.25" width="0.9" height="0.9"/><rect x="696.81" y="5.19" width="0.9" height="0.9"/></g><rect x="711" y="8.4" width="6.2" height="1.7" fill="#ffffff"/><rect x="731.4" y="5.4" width="5.3" height="4.2" fill="none" stroke="#ffffff" stroke-width="1.2"/><path d="M752 5.2 L756.6 9.7 M756.6 5.2 L752 9.7" stroke="#ffffff" stroke-width="1.3"/><path d="M755.4 23.6 L758 21.2 L760.6 23.6" fill="none" stroke="#5e5e5e" stroke-width="0.7"/><g stroke-linejoin="round" stroke-linecap="round"><path d="M21.6 41 Q23.8 38.4 21.6 36.8 Q20.8 36.3 19.6 36.4 L18 36.5" fill="none" stroke="#7494dc" stroke-width="2.3"/><path d="M18.9 33.5 L15.1 36.9 L18.9 39.9 Z" fill="#b9cbf4" stroke="#7494dc" stroke-width="0.7"/><path d="M21.5 40.6 Q23 38.5 21.3 37.2 Q20.6 36.8 19.4 36.8 L18.4 36.8" fill="none" stroke="#c3d3f7" stroke-width="0.9"/></g><g transform="translate(15,49.6) scale(1.02)"><path d="M0 0 H7.4 L8.2 0.8 V8.2 H0 Z" fill="#3a4aa8"/><path d="M0 0 H1.2 V8.2 H0 Z" fill="#5a6cc8"/><rect x="1.8" y="0.5" width="4.6" height="4.3" fill="#ffffff"/><rect x="2.2" y="5.8" width="3.8" height="2.4" fill="#d8dcee"/><rect x="4.4" y="6.2" width="1.1" height="1.8" fill="#3a4aa8"/></g><g transform="translate(15,65) scale(1.0)"><path d="M0 0 H7.4 L8.2 0.8 V8.2 H0 Z" fill="#3a4aa8"/><path d="M0 0 H1.2 V8.2 H0 Z" fill="#5a6cc8"/><rect x="1.8" y="0.5" width="4.6" height="4.3" fill="#ffffff"/><rect x="2.2" y="5.8" width="3.8" height="2.4" fill="#d8dcee"/><rect x="4.4" y="6.2" width="1.1" height="1.8" fill="#3a4aa8"/></g><path d="M20.4 70.4 L23.2 73.2" stroke="#d8b040" stroke-width="1"/><circle cx="23.4" cy="73.4" r="0.5" fill="#d03030"/><g><path d="M15.2 84.4 H22.4 V86.6 H15.2 Z" fill="#9cc0ea"/><path d="M15 86.8 H22 V88.4 H15 Z" fill="#d4dc8a"/><path d="M16.8 82.2 L18 83.6 L19 82 L20.2 83.4 L21.6 82.4" stroke="#e86a5a" stroke-width="0.7" fill="none"/><rect x="19.6" y="86" width="4.2" height="4.2" fill="#3a4aa8"/><rect x="20.6" y="86.6" width="2.3" height="1.8" fill="#fff"/></g><g transform="translate(15,97) scale(1.0)"><rect x="2.9" y="0" width="5.7" height="5.9" fill="#2c3c9a"/><rect x="2.9" y="0" width="0.8" height="5.9" fill="#5266c8"/><rect x="4.1" y="0.5" width="3.4" height="2.6" fill="#ffffff"/><rect x="4.5" y="4.2" width="2.6" height="1.7" fill="#cfd4ec"/><rect x="3.9" y="0.5" width="3.6" height="1.4" fill="#e8ecfa"/><rect x="1.5" y="1.3" width="5.7" height="5.9" fill="#2c3c9a"/><rect x="1.5" y="1.3" width="0.8" height="5.9" fill="#5266c8"/><rect x="2.7" y="1.8" width="3.4" height="2.6" fill="#ffffff"/><rect x="3.1" y="5.5" width="2.6" height="1.7" fill="#cfd4ec"/><rect x="2.5" y="1.8" width="3.6" height="1.2" fill="#e8ecfa"/><rect x="0" y="2.7" width="5.7" height="5.9" fill="#2c3c9a"/><rect x="0" y="2.7" width="0.8" height="5.9" fill="#5266c8"/><rect x="1.2" y="3.2" width="3.4" height="2.6" fill="#ffffff"/><rect x="1.6" y="6.9" width="2.6" height="1.7" fill="#cfd4ec"/></g><g transform="translate(14.9,112.6) scale(1.0)"><rect x="0" y="1.6" width="8.8" height="6.4" rx="0.6" fill="#ffffff" stroke="#9a9a9a" stroke-width="0.5"/><circle cx="6.6" cy="2.4" r="2.7" fill="#22aa33"/><circle cx="6.6" cy="2.4" r="1.5" fill="#5fd06a"/><path d="M5.3 2.4 H7.9 M6.6 1.1 V3.7" stroke="#ffffff" stroke-width="0.8"/></g><g transform="translate(14.8,128.4) scale(0.98)"><path d="M0.6 2.2 L1.2 1 H3.6 L4.2 1.8 H8 V8.6 H0.6 Z" fill="#e9c75a" stroke="#caa63a" stroke-width="0.4"/><rect x="4.6" y="0.4" width="3" height="2.6" fill="#f4f4f4" stroke="#b8c8d8" stroke-width="0.3"/><rect x="5.6" y="0.9" width="1.4" height="1" fill="#58b0e0"/><path d="M0.6 8.6 L1.6 3.6 H9.2 L8 8.6 Z" fill="#f7e79a" stroke="#d9bd55" stroke-width="0.4"/></g><g transform="translate(14.8,144.4) scale(0.98)"><path d="M0.6 2.2 L1.2 1 H3.6 L4.2 1.8 H8 V8.6 H0.6 Z" fill="#e9c75a" stroke="#caa63a" stroke-width="0.4"/><rect x="4.6" y="0.4" width="3" height="2.6" fill="#f4f4f4" stroke="#b8c8d8" stroke-width="0.3"/><rect x="5.6" y="0.9" width="1.4" height="1" fill="#58b0e0"/><path d="M0.6 8.6 L1.6 3.6 H9.2 L8 8.6 Z" fill="#f7e79a" stroke="#d9bd55" stroke-width="0.4"/></g><circle cx="21.6" cy="152.2" r="2.3" fill="#e8212a"/><circle cx="21.6" cy="152.2" r="0.9" fill="#ffffff"/><g fill="#d8283c"><path d="M15.4 162.6 Q19.2 160.2 23 162.6 L22.4 163.6 H16 Z"/><rect x="18.7" y="160.6" width="1" height="1.4"/><path d="M17 164 H21.4 L20.4 165.6 H18 Z"/><path d="M18.2 165.6 H20.2 L20.6 170 H19.8 L19.6 167 H18.8 L18.6 170 H17.8 Z"/></g><path d="M68.4 263.2 L68.4 271.6 L70.3 269.8 L71.7 272.9 L73 272.3 L71.6 269.3 L74.2 269.2 Z" fill="#ffffff" stroke="#111111" stroke-width="0.6" stroke-linejoin="round"/><g opacity="0.9"><circle cx="99.4" cy="80.2" r="2.3" fill="#e8ecf2" stroke="#c4c8d2" stroke-width="0.7"/><path d="M101.2 82 L104 85" stroke="#c8c4bc" stroke-width="1.3" stroke-linecap="round"/></g><path d="M97.50 112.10 L100.90 114.50 L97.50 116.90 Z" fill="#fbfdff" stroke="#8fabe0" stroke-width="0.55" stroke-linejoin="round"/><path d="M97.50 126.41 L100.90 128.81 L97.50 131.21 Z" fill="#fbfdff" stroke="#8fabe0" stroke-width="0.55" stroke-linejoin="round"/><path d="M97.50 140.72 L100.90 143.12 L97.50 145.52 Z" fill="#fbfdff" stroke="#8fabe0" stroke-width="0.55" stroke-linejoin="round"/><path d="M97.50 155.03 L100.90 157.43 L97.50 159.83 Z" fill="#fbfdff" stroke="#8fabe0" stroke-width="0.55" stroke-linejoin="round"/><path d="M97.50 169.34 L100.90 171.74 L97.50 174.14 Z" fill="#fbfdff" stroke="#8fabe0" stroke-width="0.55" stroke-linejoin="round"/><path d="M97.50 183.65 L100.90 186.05 L97.50 188.45 Z" fill="#fbfdff" stroke="#8fabe0" stroke-width="0.55" stroke-linejoin="round"/><path d="M97.50 197.96 L100.90 200.36 L97.50 202.76 Z" fill="#fbfdff" stroke="#8fabe0" stroke-width="0.55" stroke-linejoin="round"/><path d="M97.50 212.27 L100.90 214.67 L97.50 217.07 Z" fill="#fbfdff" stroke="#8fabe0" stroke-width="0.55" stroke-linejoin="round"/><path d="M97.50 226.58 L100.90 228.98 L97.50 231.38 Z" fill="#fbfdff" stroke="#8fabe0" stroke-width="0.55" stroke-linejoin="round"/><path d="M97.50 240.89 L100.90 243.29 L97.50 245.69 Z" fill="#fbfdff" stroke="#8fabe0" stroke-width="0.55" stroke-linejoin="round"/><path d="M97.50 255.20 L100.90 257.60 L97.50 260.00 Z" fill="#fbfdff" stroke="#8fabe0" stroke-width="0.55" stroke-linejoin="round"/><path d="M97.50 269.51 L100.90 271.91 L97.50 274.31 Z" fill="#fbfdff" stroke="#8fabe0" stroke-width="0.55" stroke-linejoin="round"/><path d="M94.95 289.50 L96.35 291.50 L98.95 287.40" fill="none" stroke="#1c1c8e" stroke-width="1.0" stroke-linecap="round" stroke-linejoin="round"/><path d="M94.95 464.20 L96.35 466.20 L98.95 462.10" fill="none" stroke="#1c1c8e" stroke-width="1.0" stroke-linecap="round" stroke-linejoin="round"/><path d="M410.4 401 L412.1 399.3 L413.8 401" fill="none" stroke="#c2c2c2" stroke-width="0.7"/><path d="M410.4 448.6 L412.1 450.3 L413.8 448.6" fill="none" stroke="#c2c2c2" stroke-width="0.7"/><path d="M756.7 32.3 L759.2 29.9 L761.7 32.3 Z" fill="#1a1a1a"/><path d="M756.7 471.2 L759.2 473.6 L761.7 471.2 Z" fill="#1a1a1a"/><path d="M78.05 253.4 L73.9 257.9 L78.05 262.4 Z" fill="#ffffff"/></svg>
<span class="t" style="left:362.25px;top:3.00px;transform:scaleX(0.912);font-size:6.8px;color:#ececec;">Project1 - GeoHECHMS</span>
<span class="t" style="left:587.00px;top:3.00px;transform:scaleX(0.879);font-size:7.5px;color:#f2f2f2;">License Activated: GeoHECHMS</span>
<span class="t" style="left:11.90px;top:16.00px;transform:scaleX(0.772);font-size:6.7px;color:#1c1000;">FILE</span>
<span class="t" style="left:38.75px;top:16.00px;transform:scaleX(0.867);font-size:6.6px;color:#ebebeb;">INPUT</span>
<span class="t" style="left:69.75px;top:16.00px;transform:scaleX(0.882);font-size:6.6px;color:#ebebeb;">WATERSHED</span>
<span class="t" style="left:119.40px;top:16.00px;transform:scaleX(0.825);font-size:6.6px;color:#ebebeb;">ANALYSIS</span>
<span class="t" style="left:158.75px;top:16.00px;transform:scaleX(0.810);font-size:6.6px;color:#ebebeb;">RESULTS</span>
<span class="t" style="left:196.90px;top:16.00px;transform:scaleX(0.900);font-size:6.6px;color:#ebebeb;">MAP DATA</span>
<span class="t" style="left:239.75px;top:16.00px;transform:scaleX(0.865);font-size:6.6px;color:#ebebeb;">MAP EDIT</span>
<span class="t" style="left:280.25px;top:16.00px;transform:scaleX(0.889);font-size:6.6px;color:#ebebeb;">TERRAIN</span>
<span class="t" style="left:318.75px;top:16.00px;transform:scaleX(0.910);font-size:6.6px;color:#ebebeb;">VIEW</span>
<span class="t" style="left:347.50px;top:16.00px;transform:scaleX(0.847);font-size:6.6px;color:#ebebeb;">HELP</span>
<span class="t" style="left:716.00px;top:17.00px;transform:scaleX(0.965);font-size:6.6px;color:#a6a6a6;text-decoration:underline;text-decoration-thickness:0.5px;text-underline-offset:0.6px;text-decoration-color:#8c8c8c;">Ask Simon</span>
<span class="t" style="left:27.00px;top:34.00px;transform:scaleX(0.980);font-size:7.0px;color:#303030;">Map View</span>
<span class="t" style="left:27.00px;top:50.00px;transform:scaleX(0.852);font-size:7.0px;color:#303030;">Save</span>
<span class="t" style="left:27.00px;top:66.00px;transform:scaleX(0.895);font-size:7.0px;color:#303030;">Save As</span>
<span class="t" style="left:27.00px;top:82.00px;transform:scaleX(0.942);font-size:7.0px;color:#303030;">Archive</span>
<span class="t" style="left:27.00px;top:98.00px;transform:scaleX(0.909);font-size:7.0px;color:#303030;">Save All</span>
<span class="t" style="left:27.00px;top:114.00px;transform:scaleX(0.970);font-size:7.0px;color:#303030;">New</span>
<span class="t" style="left:27.00px;top:130.00px;transform:scaleX(0.940);font-size:7.0px;color:#303030;">Open</span>
<span class="t" style="left:27.00px;top:146.00px;transform:scaleX(0.937);font-size:7.0px;color:#303030;">Close Project</span>
<span class="t" style="left:27.00px;top:162.00px;transform:scaleX(0.913);font-size:7.0px;color:#303030;">Recovery</span>
<span class="t" style="left:15.00px;top:189.00px;transform:scaleX(0.984);font-size:7.0px;color:#303030;">Info</span>
<span class="t" style="left:15.00px;top:211.00px;transform:scaleX(0.901);font-size:7.0px;color:#303030;">Recent</span>
<span class="t" style="left:15.00px;top:233.00px;transform:scaleX(0.974);font-size:7.0px;color:#303030;">Options</span>
<span class="t" style="left:15.00px;top:276.00px;transform:scaleX(1.017);font-size:7.0px;color:#303030;">About</span>
<span class="t" style="left:15.00px;top:297.00px;transform:scaleX(0.908);font-size:7.0px;color:#303030;">Exit</span>
<span class="t" style="left:15.00px;top:254.00px;transform:scaleX(0.975);font-size:7.0px;color:#ffffff;">Map Coordinates</span>
<span class="t" style="left:89.00px;top:41.00px;transform:scaleX(1.069);font-size:11.8px;color:#262626;">Map Coordinates</span>
<span class="t" style="left:438.75px;top:41.00px;transform:scaleX(1.013);font-size:11.8px;color:#262626;">Preview</span>
<span class="t" style="left:93.50px;top:61.00px;transform:scaleX(0.896);font-size:6.6px;color:#1e1e1e;font-weight:bold;">Available Map Coordinate Reference Systems</span>
<span class="t" style="left:93.50px;top:302.00px;transform:scaleX(0.907);font-size:6.6px;color:#1e1e1e;font-weight:bold;">Map Coordinate Reference System Information</span>
<span class="t" style="left:106.00px;top:77.00px;transform:scaleX(0.909);font-size:6.6px;color:#a4a4a4;font-style:italic;">Enter location (e.g., state or province)</span>
<span class="t" style="left:276.00px;top:77.00px;transform:scaleX(0.866);font-size:6.6px;color:#2a2a2a;">Search</span>
<span class="t" style="left:316.00px;top:77.00px;transform:scaleX(0.888);font-size:6.6px;color:#2a2a2a;">Clear</span>
<span class="t" style="left:353.50px;top:77.00px;transform:scaleX(0.953);font-size:6.6px;color:#2a2a2a;">Filter by current location</span>
<span class="t" style="left:100.40px;top:97.00px;transform:scaleX(0.978);font-size:6.6px;color:#2a2a2a;">Projected CRS Regions</span>
<span class="t" style="left:179.75px;top:97.00px;transform:scaleX(0.992);font-size:6.6px;color:#2a2a2a;">Projected CRS Listings</span>
<span class="t" style="left:258.50px;top:97.00px;transform:scaleX(1.014);font-size:6.6px;color:#2a2a2a;">Import CRS Projection</span>
<span class="t" style="left:337.00px;top:97.00px;transform:scaleX(0.959);font-size:6.6px;color:#2a2a2a;">Favorites</span>
<span class="t" style="left:105.10px;top:110.00px;transform:scaleX(0.883);font-size:6.6px;color:#2a2a2a;">Custom CRS</span>
<span class="t" style="left:105.10px;top:124.00px;transform:scaleX(0.943);font-size:6.6px;color:#2a2a2a;">Africa</span>
<span class="t" style="left:105.10px;top:139.00px;transform:scaleX(0.948);font-size:6.6px;color:#2a2a2a;">Antarctica</span>
<span class="t" style="left:105.10px;top:153.00px;transform:scaleX(0.940);font-size:6.6px;color:#2a2a2a;">Arctic</span>
<span class="t" style="left:105.10px;top:167.00px;transform:scaleX(0.889);font-size:6.6px;color:#2a2a2a;">Asia</span>
<span class="t" style="left:105.10px;top:181.00px;transform:scaleX(0.909);font-size:6.6px;color:#2a2a2a;">Australasia</span>
<span class="t" style="left:105.10px;top:196.00px;transform:scaleX(0.936);font-size:6.6px;color:#2a2a2a;">Central America</span>
<span class="t" style="left:105.10px;top:210.00px;transform:scaleX(0.908);font-size:6.6px;color:#2a2a2a;">Europe</span>
<span class="t" style="left:105.10px;top:224.00px;transform:scaleX(0.969);font-size:6.6px;color:#2a2a2a;">North America</span>
<span class="t" style="left:105.10px;top:239.00px;transform:scaleX(0.944);font-size:6.6px;color:#2a2a2a;">South America</span>
<span class="t" style="left:105.10px;top:253.00px;transform:scaleX(0.909);font-size:6.6px;color:#2a2a2a;">UTM</span>
<span class="t" style="left:105.10px;top:267.00px;transform:scaleX(0.988);font-size:6.6px;color:#2a2a2a;">World</span>
<span class="t" style="left:103.25px;top:285.00px;transform:scaleX(0.943);font-size:6.6px;color:#2a2a2a;">Hide depreciated coordinate reference systems</span>
<span class="t" style="right:632.00px;transform-origin:100% 50%;top:316.00px;transform:scaleX(0.932);font-size:6.6px;color:#2a2a2a;">Name:</span>
<span class="t" style="right:632.00px;transform-origin:100% 50%;top:327.00px;transform:scaleX(0.917);font-size:6.6px;color:#2a2a2a;">Datum:</span>
<span class="t" style="right:632.00px;transform-origin:100% 50%;top:339.00px;transform:scaleX(0.944);font-size:6.6px;color:#2a2a2a;">Projection:</span>
<span class="t" style="right:632.00px;transform-origin:100% 50%;top:350.00px;transform:scaleX(0.917);font-size:6.6px;color:#2a2a2a;">Units:</span>
<span class="t" style="right:632.00px;transform-origin:100% 50%;top:362.00px;transform:scaleX(0.854);font-size:6.6px;color:#2a2a2a;">EPSG code:</span>
<span class="t" style="right:632.00px;transform-origin:100% 50%;top:373.00px;transform:scaleX(0.935);font-size:6.6px;color:#2a2a2a;">AutoCAD code:</span>
<span class="t" style="left:350.00px;top:318.00px;transform:scaleX(0.909);font-size:6.6px;color:#2a2a2a;">Load CRS Projection...</span>
<span class="t" style="left:93.50px;top:384.00px;transform:scaleX(1.033);font-size:6.6px;color:#2a2a2a;">Well-Known-Text definition (WKT)</span>
<span class="t" style="left:103.25px;top:460.00px;transform:scaleX(0.917);font-size:6.6px;color:#2a2a2a;">Apply CRS to all non-CRS referenced layers</span>
<span class="t" style="left:456.00px;top:234.00px;transform:scaleX(1.002);font-size:6.6px;color:#2a2a2a;">CRS extended bounds</span>
<span class="t" style="left:410.0px;top:40.6px;font-size:8.2px;font-weight:bold;color:#fff;">?</span>
</body></html>
